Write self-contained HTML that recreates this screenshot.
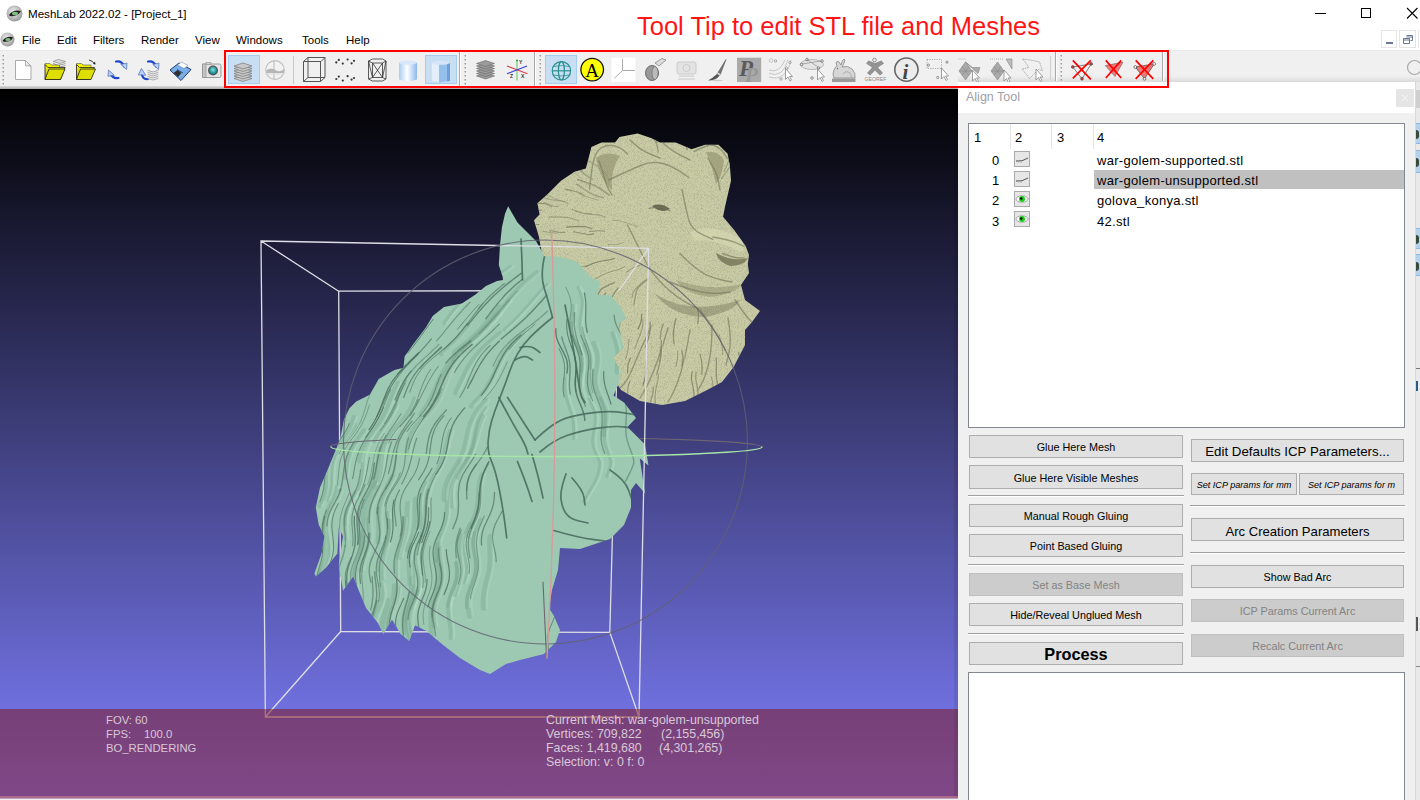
<!DOCTYPE html>
<html><head><meta charset="utf-8">
<style>
*{box-sizing:border-box;margin:0;padding:0}
html,body{width:1420px;height:800px;overflow:hidden;background:#fff;font-family:"Liberation Sans",sans-serif}
.abs{position:absolute}
#title{position:absolute;left:0;top:0;width:1420px;height:28px;background:#fff}
#menubar{position:absolute;left:0;top:28px;width:1420px;height:22px;background:#fff}
.menu{position:absolute;top:6px;font-size:11.5px;color:#000;white-space:nowrap}
#toolbar{position:absolute;left:0;top:50px;width:1420px;height:40px;background:#f0f0f0;border-top:1px solid #e8e8e8}
#view{position:absolute;left:0;top:89px;width:958px;height:711px;overflow:hidden}
#panel{position:absolute;left:958px;top:82px;width:457px;height:718px;background:#f0f0f0}
.btn{position:absolute;background:#e1e1e1;border:1px solid #adadad;font-size:10.8px;padding-top:1px;color:#000;text-align:center;white-space:nowrap;overflow:hidden}
.btn.dis{background:#cccccc;border-color:#bfbfbf;color:#838383}
.sep{position:absolute;height:2px;border-top:1px solid #a0a0a0;border-bottom:1px solid #fff}
.tb{position:absolute;top:0;left:0}
.cell{position:absolute;font-size:13px;letter-spacing:0.3px;color:#000;white-space:nowrap;line-height:15px}
.info{position:absolute;font-family:"Liberation Sans",sans-serif;font-size:12.3px;color:#d8c8d8;line-height:14px;white-space:pre}
</style></head><body>

<!-- TITLE BAR -->
<div id="title">
  <svg class="abs" style="left:6px;top:5px" width="17" height="17" viewBox="0 0 17 17">
    <defs><radialGradient id="eyeg" cx="0.45" cy="0.4" r="0.6"><stop offset="0" stop-color="#f4f4f4"/><stop offset="1" stop-color="#9a9a9a"/></radialGradient></defs>
    <circle cx="8.5" cy="8.5" r="8" fill="url(#eyeg)"/>
    <path d="M3 10 Q7 4 15 6 Q12 12 4 11Z" fill="#222"/>
    <ellipse cx="9" cy="8.5" rx="3" ry="1.8" fill="#7fc07f"/>
  </svg>
  <div class="abs" style="left:28px;top:6.5px;font-size:11.6px;color:#000;white-space:nowrap">MeshLab 2022.02 - [Project_1]</div>
  <div class="abs" style="z-index:5;left:637px;top:11px;font-size:25.5px;color:#ff1515;white-space:nowrap;line-height:30px">Tool Tip to edit STL file and Meshes</div>
  <!-- window controls -->
  <div class="abs" style="left:1315px;top:13px;width:11px;height:1px;background:#000"></div>
  <div class="abs" style="left:1361px;top:8px;width:10px;height:10px;border:1px solid #000"></div>
  <svg class="abs" style="left:1406px;top:7px" width="13" height="13"><path d="M1 1L11.5 11.5M11.5 1L1 11.5" stroke="#000" stroke-width="1.1"/></svg>
</div>

<!-- MENU BAR -->
<div id="menubar">
  <svg class="abs" style="left:0px;top:4px" width="15" height="15" viewBox="0 0 17 17">
    <circle cx="8.5" cy="8.5" r="8" fill="url(#eyeg)"/>
    <path d="M3 10 Q7 4 15 6 Q12 12 4 11Z" fill="#222"/>
    <ellipse cx="9" cy="8.5" rx="3" ry="1.8" fill="#7fc07f"/>
  </svg>
  <div class="menu" style="left:22px">File</div>
  <div class="menu" style="left:57px">Edit</div>
  <div class="menu" style="left:93px">Filters</div>
  <div class="menu" style="left:141px">Render</div>
  <div class="menu" style="left:195px">View</div>
  <div class="menu" style="left:236px">Windows</div>
  <div class="menu" style="left:302px">Tools</div>
  <div class="menu" style="left:346px">Help</div>
  <!-- MDI buttons -->
  <div class="abs" style="left:1381px;top:2px;width:16px;height:18px;border:1px solid #e6e6e6;background:#fff"><div class="abs" style="left:4px;top:11px;width:7px;height:2px;background:#6a7a90"></div></div>
  <div class="abs" style="left:1399px;top:2px;width:17px;height:18px;border:1px solid #e6e6e6;background:#fff">
    <svg class="abs" style="left:3px;top:4px" width="10" height="9"><path d="M3.5 0.5h6v5h-2M0.5 3.5h6v5h-6z M0.5 5h6 M3.5 2h6" fill="none" stroke="#6a7a90" stroke-width="1"/></svg>
  </div>
  <div class="abs" style="left:1418px;top:2px;width:2px;height:18px;border-left:1px solid #e6e6e6"></div>
</div>

<!-- TOOLBAR -->
<div id="toolbar">
<div class="abs" style="left:958px;top:25px;width:462px;height:7px;background:linear-gradient(#f0f0f0,#d6d6d6)"></div>
  <svg width="1420" height="40" viewBox="0 50 1420 40" style="position:absolute;left:0;top:-1px">
<defs>
  <linearGradient id="fold" x1="0" y1="0" x2="1" y2="1"><stop offset="0" stop-color="#ffffff"/><stop offset="1" stop-color="#cfcfcf"/></linearGradient>
  <linearGradient id="yel" x1="0" y1="0" x2="0" y2="1"><stop offset="0" stop-color="#ffff10"/><stop offset="1" stop-color="#a8a000"/></linearGradient>
  <linearGradient id="cyl" x1="0" y1="0" x2="1" y2="0"><stop offset="0" stop-color="#a9ccf2"/><stop offset="0.45" stop-color="#ffffff"/><stop offset="1" stop-color="#8cb8ec"/></linearGradient>
  <radialGradient id="lens" cx="0.5" cy="0.4" r="0.6"><stop offset="0" stop-color="#7fe0e0"/><stop offset="1" stop-color="#0a7a80"/></radialGradient>
  <linearGradient id="tbbot" x1="0" y1="0" x2="0" y2="1"><stop offset="0" stop-color="#f0f0f0"/><stop offset="1" stop-color="#d8d8d8"/></linearGradient>
</defs>
<!-- grips -->
<g fill="#9a9a9a">
  <rect x="2.5" y="55" width="1.5" height="1.5"/><rect x="2.5" y="59" width="1.5" height="1.5"/><rect x="2.5" y="63" width="1.5" height="1.5"/><rect x="2.5" y="67" width="1.5" height="1.5"/><rect x="2.5" y="71" width="1.5" height="1.5"/><rect x="2.5" y="75" width="1.5" height="1.5"/><rect x="2.5" y="79" width="1.5" height="1.5"/><rect x="2.5" y="83" width="1.5" height="1.5"/>
  <rect x="464.5" y="55" width="1.5" height="1.5"/><rect x="464.5" y="59" width="1.5" height="1.5"/><rect x="464.5" y="63" width="1.5" height="1.5"/><rect x="464.5" y="67" width="1.5" height="1.5"/><rect x="464.5" y="71" width="1.5" height="1.5"/><rect x="464.5" y="75" width="1.5" height="1.5"/><rect x="464.5" y="79" width="1.5" height="1.5"/><rect x="464.5" y="83" width="1.5" height="1.5"/>
  <rect x="539.5" y="55" width="1.5" height="1.5"/><rect x="539.5" y="59" width="1.5" height="1.5"/><rect x="539.5" y="63" width="1.5" height="1.5"/><rect x="539.5" y="67" width="1.5" height="1.5"/><rect x="539.5" y="71" width="1.5" height="1.5"/><rect x="539.5" y="75" width="1.5" height="1.5"/><rect x="539.5" y="79" width="1.5" height="1.5"/><rect x="539.5" y="83" width="1.5" height="1.5"/>
  <rect x="1060.5" y="55" width="1.5" height="1.5"/><rect x="1060.5" y="59" width="1.5" height="1.5"/><rect x="1060.5" y="63" width="1.5" height="1.5"/><rect x="1060.5" y="67" width="1.5" height="1.5"/><rect x="1060.5" y="71" width="1.5" height="1.5"/><rect x="1060.5" y="75" width="1.5" height="1.5"/><rect x="1060.5" y="79" width="1.5" height="1.5"/>
</g>
<!-- separators -->
<g stroke-width="1">
  <line x1="293.5" y1="56" x2="293.5" y2="84" stroke="#c8c8c8"/>
  <line x1="459.5" y1="52" x2="459.5" y2="87" stroke="#a8a8a8"/><line x1="460.5" y1="52" x2="460.5" y2="87" stroke="#fff"/>
  <line x1="534.5" y1="52" x2="534.5" y2="87" stroke="#a8a8a8"/><line x1="535.5" y1="52" x2="535.5" y2="87" stroke="#fff"/>
  <line x1="1050.5" y1="56" x2="1050.5" y2="80" stroke="#d0d0d0"/>
  <line x1="1055.5" y1="52" x2="1055.5" y2="81" stroke="#a8a8a8"/><line x1="1056.5" y1="52" x2="1056.5" y2="81" stroke="#fff"/>
  <line x1="1162.5" y1="52" x2="1162.5" y2="81" stroke="#a8a8a8"/><line x1="1163.5" y1="52" x2="1163.5" y2="81" stroke="#fff"/>
</g>
<!-- highlighted buttons -->
<g fill="#c7def3" stroke="#a6cdef">
  <rect x="228.5" y="55.5" width="31" height="28"/>
  <rect x="425.5" y="55.5" width="31" height="28"/>
  <rect x="545.5" y="55.5" width="31" height="28"/>
</g>
<!-- 1 new doc -->
<path d="M15.5 60.5h10l5.5 5.5v13.5h-15.5z" fill="#fff" stroke="#aaa"/>
<path d="M25.5 60.5l5.5 5.5h-5.5z" fill="url(#fold)" stroke="#999" stroke-width="0.7"/>
<!-- 2 open project -->
<g><path d="M53 61.5l5.5-2 7 2-5.5 2z" fill="#ddd" stroke="#888" stroke-width="0.7"/>
<path d="M53 63.5l5.5 2 7-2M53 65.5l5.5 2 7-2M53 67.5l5.5 2 7-2" fill="none" stroke="#888" stroke-width="0.8"/>
<path d="M45 63.5h5l1.5 1.5h8v4h-14z" fill="#f0f000" stroke="#555" stroke-width="0.6"/>
<path d="M45 79.5v-15l3 3h17l-4.5 12z" fill="url(#yel)" stroke="#222" stroke-width="0.8"/>
<path d="M45 79.5l4-10.5h16l-4.5 10.5z" fill="#dede00" stroke="#222" stroke-width="0.8"/></g>
<!-- 3 open -->
<g><path d="M76.5 63.5h5l1.5 1.5h8v4h-14z" fill="#f0f000" stroke="#555" stroke-width="0.6"/>
<path d="M76.5 79.5v-15l3 3h15l-4.5 12z" fill="url(#yel)" stroke="#222" stroke-width="0.8"/>
<path d="M76.5 79.5l4-10.5h15l-4.5 10.5z" fill="#dede00" stroke="#222" stroke-width="0.8"/>
<path d="M89 60q4 1 5.5 4" fill="none" stroke="#222" stroke-width="0.9"/><path d="M93 64l2.5 0.5 -0.5-3z" fill="#222"/></g>
<!-- 4 reload -->
<g fill="none" stroke-linecap="round">
<path d="M116 61.5q6-1 8 5" stroke="#1e46d0" stroke-width="2.2"/>
<path d="M121 64.5l5.5 5 0.5-6z" fill="#b8d0f8" stroke="#4a6ab0" stroke-width="0.7"/>
<path d="M118.5 78q-6 1-8.5-5" stroke="#1e46d0" stroke-width="2.2"/>
<path d="M114 75l-5.5-5-0.5 6z" fill="#b8d0f8" stroke="#4a6ab0" stroke-width="0.7"/>
</g>
<!-- 5 reload all -->
<g fill="none" stroke-linecap="round">
<path d="M148 61.5q6-1 8 5" stroke="#1e46d0" stroke-width="2.2"/>
<path d="M153 64.5l5.5 5 0.5-6z" fill="#b8d0f8" stroke="#4a6ab0" stroke-width="0.7"/>
<path d="M148 79q-6 1-6.5-7" stroke="#1e46d0" stroke-width="2.2"/>
<path d="M145.5 75l-4-6.5-3 6z" fill="#b8d0f8" stroke="#4a6ab0" stroke-width="0.7"/>
<path d="M148 70.5l5 1.5 5-1.5M148 72.5l5 1.5 5-1.5M148 74.5l5 1.5 5-1.5M148 76.5l5 1.5 5-1.5M148 78.5l5 1.5 5-1.5" stroke="#aaa" stroke-width="1"/>
</g>
<!-- 6 save floppy -->
<g><path d="M170 70l9-7 12 6.5-10 11z" fill="#7aaee8" stroke="#1d3c70" stroke-width="1"/>
<path d="M177.5 65l4-3 6.5 3.5-4 3z" fill="#fff" stroke="#5a7aa0" stroke-width="0.5"/>
<path d="M173.5 73l4-3 4 3 -3.5 4z" fill="#303030"/>
<path d="M177 69.5l6 3.5" stroke="#1d3c70" stroke-width="0.8"/></g>
<!-- 7 camera -->
<g><rect x="202.5" y="64" width="18.5" height="13.5" rx="1.5" fill="#e4e4e4" stroke="#888" stroke-width="0.8"/>
<rect x="202.5" y="64" width="3.5" height="13.5" fill="#c4c4c4" stroke="#888" stroke-width="0.6"/>
<rect x="206" y="62.5" width="5" height="2" fill="#ccc" stroke="#888" stroke-width="0.5"/>
<circle cx="213" cy="70.5" r="5" fill="#555"/><circle cx="213" cy="70.5" r="3.8" fill="url(#lens)"/></g>
<!-- 8 layers (highlighted) -->
<g fill="#c8c8c8" stroke="#7a7a7a" stroke-width="0.7">
<path d="M234 78.5l9-3 9 3-9 3z"/><path d="M234 76l9-3 9 3-9 3z"/><path d="M234 73.5l9-3 9 3-9 3z"/><path d="M234 71l9-3 9 3-9 3z"/><path d="M234 68.5l9-3 9 3-9 3z"/><path d="M234 66l9-3 9 3-9 3z"/>
</g>
<!-- 9 globe faded -->
<g opacity="0.55"><circle cx="275" cy="70" r="9.3" fill="#f4f4f4" stroke="#999" stroke-width="1.2"/>
<path d="M266.5 70q5-3 9 0t8.5-1v4h-17.5z" fill="#888"/><line x1="274" y1="61" x2="274" y2="79" stroke="#888"/><line x1="266" y1="74" x2="284" y2="74" stroke="#ccc"/></g>
<!-- 10 cube -->
<g fill="none" stroke="#555" stroke-width="1"><path d="M303.5 61.5l4.5-4h17l-4 4z M303.5 61.5v20h17v-20 M320.5 81.5l4.5-4v-20 M308 57.5v20h17 M303.5 81.5l4.5-4"/></g>
<!-- 11 dots -->
<g fill="#333">
<circle cx="336.3" cy="62.4" r="1.1"/><circle cx="338.8" cy="59.9" r="1.1"/><circle cx="342.8" cy="63.6" r="1.1"/><circle cx="347.6" cy="59.5" r="1.1"/><circle cx="351.6" cy="63.3" r="1.1"/><circle cx="354" cy="60.8" r="1.1"/>
<circle cx="336.3" cy="79" r="1.1"/><circle cx="338.8" cy="76.6" r="1.1"/><circle cx="342.8" cy="80.6" r="1.1"/><circle cx="347.6" cy="76.2" r="1.1"/><circle cx="351.6" cy="79.6" r="1.1"/><circle cx="354" cy="78" r="1.1"/>
</g>
<!-- 12 wire cylinder -->
<g fill="none" stroke="#333" stroke-width="0.8">
<path d="M368.5 61l4-2h10l3.5 2v18l-3.5 2h-10l-4-2z"/><path d="M368.5 61l4 2h10l3.5-2 M368.5 79l4-1.5h10l3.5 1.5"/>
<path d="M372.5 63l10 14.5M382.5 63l-10 14.5M372.5 63v14.5M382.5 63v14.5M368.5 61l4 16.5M386 61l-3.5 16.5"/>
</g>
<!-- 13 flat cylinder -->
<g><path d="M399 62.5q9-3.5 18 0v17q-9 3-18 0z" fill="url(#cyl)"/><ellipse cx="408" cy="62.5" rx="9" ry="2.2" fill="#d8e8fa"/></g>
<!-- 14 smooth cylinder (highlighted) -->
<g><path d="M432 63q9-3 18 0v18q-9 2-18 0z" fill="#e4eefa"/><path d="M439 64l11-1v18l-11 1.5z" fill="#94c0ee"/><path d="M447 63l3 0v18l-3 0.3z" fill="#6f9fd8"/><ellipse cx="441" cy="62.8" rx="9" ry="2" fill="#d4e6f8"/></g>
<!-- 15 gray layers -->
<g fill="#9a9a9a" stroke="#6a6a6a" stroke-width="0.6">
<path d="M476.5 76l9-3 9 3-9 3z"/><path d="M476.5 73.5l9-3 9 3-9 3z"/><path d="M476.5 71l9-3 9 3-9 3z"/><path d="M476.5 68.5l9-3 9 3-9 3z"/><path d="M476.5 66l9-3 9 3-9 3z"/><path d="M476.5 63.5l9-3 9 3-9 3z"/>
</g>
<!-- 16 axes -->
<g stroke-width="1.1"><line x1="517" y1="60" x2="517" y2="80.5" stroke="#8fd68f" stroke-width="1.5"/>
<line x1="507" y1="66" x2="527.5" y2="73.8" stroke="#e04040"/><line x1="507" y1="73.8" x2="527" y2="66" stroke="#4040e0"/>
<circle cx="517" cy="60.5" r="1" fill="#20b020" stroke="none"/>
<text x="519" y="64" font-family="Liberation Sans" font-size="5" font-weight="bold" fill="#333" stroke="none">Y</text>
<text x="510" y="77.5" font-family="Liberation Sans" font-size="5" font-weight="bold" fill="#333" stroke="none">Z</text>
<text x="521" y="77.5" font-family="Liberation Sans" font-size="5" font-weight="bold" fill="#333" stroke="none">X</text></g>
<!-- 17 globe teal -->
<g fill="none" stroke="#2a9090" stroke-width="1.2"><circle cx="561.4" cy="70.8" r="9.2"/><ellipse cx="561.4" cy="70.8" rx="3" ry="9.2"/><line x1="552.2" y1="70.8" x2="570.6" y2="70.8"/><path d="M553.5 66.5q8-2 16 0M553.5 75q8 2 16 0" stroke-width="0.8"/></g>
<!-- 18 A -->
<g><circle cx="592.2" cy="69.6" r="11.3" fill="#ffff00" stroke="#111" stroke-width="1.3"/>
<text x="592.2" y="77" text-anchor="middle" font-family="Liberation Serif" font-size="19" fill="#000">A</text></g>
<!-- 19 axis white -->
<g><rect x="611.5" y="57.7" width="24" height="24.3" fill="#fff"/><path d="M622.5 59v11.5h12.5M622.5 70.5l-8.3 7.9" fill="none" stroke="#aaa" stroke-width="1"/></g>
<!-- 20 tape -->
<g><path d="M655 63l7-4.5 4 1.5-7 6z" fill="#ddd" stroke="#777" stroke-width="0.7"/>
<ellipse cx="652" cy="73" rx="6.5" ry="7.5" fill="#999" stroke="#555" stroke-width="0.8"/><ellipse cx="655" cy="73" rx="3" ry="6.5" fill="#bbb" stroke="#666" stroke-width="0.6"/></g>
<!-- 21 camera faded -->
<g opacity="0.35"><rect x="677" y="62" width="19" height="12" rx="2" fill="#ccc" stroke="#888"/><circle cx="686.5" cy="68" r="3.5" fill="none" stroke="#888"/><rect x="679" y="75.5" width="15" height="1.2" fill="#999"/><rect x="678" y="78.5" width="17" height="1.2" fill="#999"/></g>
<!-- 22 brush -->
<g><path d="M726 59.5l-8 13 2.5 1.5z" fill="#777" stroke="#555" stroke-width="0.6"/><path d="M718 72.5l2.5 1.5l-1 1.5l-2.5-1.5z" fill="#eee" stroke="#777" stroke-width="0.5"/><path d="M717 74l2.5 1.5q-3 5-11.5 5q4-2 9-6.5z" fill="#555"/><ellipse cx="717" cy="80.5" rx="6" ry="0.8" fill="#ccc"/></g>
<!-- 23 PP -->
<g><rect x="737" y="57.7" width="24.2" height="24.3" fill="#aaa"/>
<text x="739" y="76" font-family="Liberation Serif" font-size="23" font-weight="bold" font-style="italic" fill="#5a5a5a">P</text>
<text x="745" y="82" font-family="Liberation Serif" font-size="21" font-weight="bold" font-style="italic" fill="#979797">P</text></g>
<!-- 24 circles select faded -->
<g fill="none" stroke="#bbb" stroke-width="0.8"><path d="M769 70q10 4 16-10M769 73.5q14 5 19-14M769 77q17 5 22-17"/><circle cx="771" cy="60.5" r="1.8"/><circle cx="775.5" cy="61" r="1.2" stroke="#999"/><circle cx="790" cy="62.5" r="1.2" stroke="#999"/><circle cx="781" cy="79" r="1.2" stroke="#999"/><circle cx="786.5" cy="68.2" r="1.2" stroke="#999"/>
<path d="M785.5 68.5v11l2.5-2.5 2 4 1.5-1-2-3.5h3z" fill="#fff" stroke="#888"/></g>
<!-- 25 ellipse select -->
<g fill="none" stroke="#999" stroke-width="0.8"><ellipse cx="812" cy="64.5" rx="11.5" ry="5" fill="#e4e4e4" stroke="#aaa"/><line x1="802" y1="64" x2="821" y2="61"/><line x1="807" y1="59.5" x2="818" y2="67"/>
<circle cx="801.5" cy="64.5" r="1.3" stroke="#777"/><circle cx="807" cy="59.5" r="1.3" stroke="#777"/><circle cx="822" cy="61" r="1.3" stroke="#777"/><circle cx="818.5" cy="68" r="1.3" stroke="#777"/><circle cx="812" cy="78" r="1.3" stroke="#777"/>
<path d="M817.5 69v11l2.5-2.5 2 4 1.5-1-2-3.5h3z" fill="#fff" stroke="#888"/></g>
<!-- 26 bunny -->
<g><rect x="832" y="78.5" width="23.5" height="3.5" fill="#999"/>
<path d="M834 78q-2-4 0-8q1-3 3-4l-1-3q1-3 3-1l2 3q1-5 3-6q2 0 0 4l-2 4q6-2 10 2q4 4 3 9z" fill="#d6d6d6" stroke="#888" stroke-width="0.8"/>
<path d="M843 74q3-4 7-1q2 2 1 5" fill="none" stroke="#999" stroke-width="0.7"/><circle cx="837.5" cy="68.5" r="0.7" fill="#666"/></g>
<!-- 27 georef -->
<g><path d="M875 63l-6.5 -2.5 -2.5 3 6 4-5 5.5 3 2.5 5-5 5 5 3-2.5-5-5.5 6-4-2.5-3z" fill="#939393"/><circle cx="874.5" cy="60" r="1.8" fill="none" stroke="#939393" stroke-width="1"/>
<text x="875.5" y="81.2" text-anchor="middle" font-family="Liberation Sans" font-size="5.2" fill="#8a8a8a">GEOREF</text></g>
<!-- 28 info -->
<g><circle cx="906.4" cy="69.6" r="11.6" fill="#ececec" stroke="#666" stroke-width="1.6"/>
<text x="905.5" y="78.5" text-anchor="middle" font-family="Liberation Serif" font-size="21" font-weight="bold" font-style="italic" fill="#444">i</text></g>
<!-- 29 select rect -->
<g fill="none" stroke="#999" stroke-width="0.8"><path d="M927 59.5h14.5v9h-14.5z" stroke-dasharray="1.2 1.2"/><circle cx="947" cy="62.2" r="1.1" stroke="#777"/><circle cx="928.4" cy="65.2" r="1.1" stroke="#777"/><circle cx="937.7" cy="77.5" r="1.1" stroke="#777"/>
<path d="M941.5 68v11l2.5-2.5 2 4 1.5-1-2-3.5h3z" fill="#fff" stroke="#888"/></g>
<!-- 30 triangles 1 -->
<g stroke="#888" stroke-width="0.6"><path d="M959 71l6.5-9 6.5 9-6.5 9z" fill="#aaa"/><path d="M965.5 62l7 5.5h7.5l-2 6z" fill="#aaa"/><path d="M959 71h13M962 66.5l7 9M969 66.5l-7 9" fill="none"/><path d="M958.5 59h8" stroke-dasharray="1 1" fill="none"/>
<path d="M972.5 70v11l2.5-2.5 2 4 1.5-1-2-3.5h3z" fill="#fff" stroke="#888" stroke-width="0.8"/></g>
<!-- 31 triangles 2 -->
<g stroke="#888" stroke-width="0.6"><path d="M991 71l6.5-9 6.5 9-6.5 9z" fill="#aaa"/><path d="M1006 59h6v10z" fill="#bbb"/><path d="M991 71h13M994 66.5l7 9M1001 66.5l-7 9" fill="none"/><path d="M990 59h14" stroke-dasharray="1 1" fill="none"/>
<path d="M1004 70v11l2.5-2.5 2 4 1.5-1-2-3.5h3z" fill="#fff" stroke="#888" stroke-width="0.8"/></g>
<!-- 32 polygon outline -->
<g><path d="M1022.5 59l11 1.5 6 1.5 3 8.5-4 -1-9 9-7.5-9.5 7-1.5-5-7z" fill="none" stroke="#999" stroke-width="0.8" stroke-dasharray="1.3 0.7"/>
<path d="M1036 69v11l2.5-2.5 2 4 1.5-1-2-3.5h3z" fill="#fff" stroke="#888" stroke-width="0.8"/></g>
<!-- 33 X1 -->
<g><path d="M1072.8 67l18.4-3.1-9.2 14.9z" fill="none" stroke="#333" stroke-width="0.6"/>
<circle cx="1072.8" cy="67" r="1.4" fill="#d04040" stroke="#333" stroke-width="0.5"/><circle cx="1091.2" cy="63.9" r="1.4" fill="#d04040" stroke="#333" stroke-width="0.5"/><circle cx="1082" cy="78.8" r="1.4" fill="#d04040" stroke="#333" stroke-width="0.5"/>
<path d="M1072.8 60.4l18 18.9M1072.8 78.4l18-18" stroke="#f00" stroke-width="1.7"/></g>
<!-- 34 X2 -->
<g><path d="M1105.3 65.6l17.7-3.5-8 14.5z" fill="#f07878" stroke="#555" stroke-width="0.5"/>
<path d="M1105.8 60.4l15.4 17.6M1105.8 78l15.4-17.6" stroke="#f00" stroke-width="1.7"/></g>
<!-- 35 X3 -->
<g><path d="M1135.3 67l18.9-3.1-9.7 14.9z" fill="#f07878" stroke="#333" stroke-width="0.6"/>
<circle cx="1135.3" cy="67" r="1.4" fill="#fff" stroke="#333" stroke-width="0.6"/><circle cx="1154.2" cy="63.9" r="1.4" fill="#fff" stroke="#333" stroke-width="0.6"/><circle cx="1144.5" cy="78.8" r="1.4" fill="#fff" stroke="#333" stroke-width="0.6"/>
<path d="M1135.7 60.4l17.6 18.4M1135.7 78.8l17.6-18.4" stroke="#f00" stroke-width="1.7"/></g>
<!-- far right circle -->
<circle cx="1414.5" cy="67.5" r="7" fill="none" stroke="#a8a8a8" stroke-width="1.2"/>
</svg>

</div>
<div class="abs" style="left:0;top:86px;width:958px;height:4px;background:linear-gradient(#dcdcdc,#9a9a9a)"></div>

<!-- VIEWPORT -->
<div id="view">
  <svg width="958" height="711" viewBox="0 89 958 711" style="position:absolute;left:0;top:0">
    <defs>
      <linearGradient id="bg" x1="0" y1="89" x2="0" y2="800" gradientUnits="userSpaceOnUse">
        <stop offset="0" stop-color="#000000"/><stop offset="1" stop-color="#8080ff"/>
      </linearGradient>
    </defs>
    <rect x="0" y="89" width="958" height="711" fill="url(#bg)"/>
    <g id="scene">
<defs><clipPath id="lclip"><path d="M534.0 220.2 L539.6 214.5 L537.4 203.3 L547.5 194.3 L549.8 192.0 L561.0 180.8 L574.5 171.8 L585.8 168.4 L588.0 160.5 L591.4 147.0 L601.5 142.5 L615.0 142.5 L619.5 136.9 L637.6 133.5 L651.0 138.0 L660.0 142.5 L675.8 142.5 L691.6 149.3 L705.0 144.8 L718.6 144.8 L727.6 153.8 L729.8 165.0 L731.0 180.8 L725.3 205.5 L723.0 216.8 L734.3 230.3 L745.6 246.0 L749.0 255.0 L747.8 264.0 L749.0 273.0 L741.0 285.0 L745.0 300.0 L760.0 311.0 L752.0 322.0 L745.0 330.0 L745.0 345.0 L733.6 367.0 L722.0 382.0 L707.0 390.0 L685.0 401.0 L662.0 405.0 L640.0 401.0 L621.0 390.0 L613.7 378.6 L590.0 370.0 L560.0 320.0 L545.0 270.0 L538.8 236.2Z"/></clipPath><clipPath id="hclip"><path d="M508.1 206.2 L517.5 222.5 L527.5 232.5 L536.2 241.2 L542.5 252.5 L543.8 256.2 L555.0 256.2 L567.5 258.8 L575.0 261.2 L580.0 265.0 L589.7 276.6 L600.2 281.8 L597.5 295.0 L610.7 295.0 L621.0 308.0 L626.4 318.5 L618.5 323.8 L621.0 336.9 L623.8 347.4 L613.3 357.9 L621.0 371.0 L618.5 384.0 L613.5 395.5 L624.0 402.5 L636.0 418.0 L627.5 427.0 L645.0 444.5 L648.5 465.5 L639.8 458.5 L645.0 493.5 L636.0 483.0 L631.0 490.0 L631.0 507.5 L624.0 525.0 L610.0 539.0 L580.0 549.0 L560.0 548.0 L558.0 570.0 L552.0 590.0 L549.0 608.0 L554.0 616.0 L560.0 630.0 L556.0 642.0 L544.0 654.0 L520.0 660.0 L506.0 664.0 L490.0 674.0 L480.0 670.0 L460.0 658.0 L443.7 645.4 L426.4 631.0 L415.0 625.3 L409.2 641.0 L400.6 634.0 L392.0 619.5 L383.3 634.0 L377.6 622.4 L366.0 608.0 L353.2 576.4 L343.0 590.8 L338.8 565.0 L343.0 536.2 L338.8 527.6 L337.4 553.4 L325.9 567.8 L315.8 576.4 L314.4 573.6 L321.6 553.4 L324.4 536.2 L318.7 524.7 L315.8 507.5 L320.0 487.4 L328.7 467.2 L335.0 452.0 L340.5 437.5 L343.9 419.5 L349.5 408.2 L356.2 401.5 L369.7 394.7 L378.7 379.0 L394.5 370.0 L403.5 367.7 L404.6 356.5 L412.5 345.2 L426.0 327.2 L432.7 316.0 L444.0 307.0 L462.0 303.6 L475.5 294.6 L486.0 286.0 L497.0 281.0 L503.0 280.0 L502.5 276.2 L498.8 265.0 L500.0 245.0 L501.9 227.5 L505.0 213.8Z"/></clipPath>
<filter id="speck" x="0" y="0" width="1" height="1">
<feTurbulence type="fractalNoise" baseFrequency="1.3" numOctaves="1" seed="3" result="n"/>
<feColorMatrix in="n" type="matrix" values="0 0 0 0 0.33  0 0 0 0 0.35  0 0 0 0 0.26  -4 0 0 0 2.1" result="c"/>
<feComposite in="c" in2="SourceGraphic" operator="in"/>
</filter></defs>
<g stroke="#dedee6" stroke-width="1.3" fill="none"><path d="M338.7 291.2L619 290.5M338.7 291.2L340.7 631.5L609.8 632.4L619 290.5"/></g>
<path d="M534.0 220.2 L539.6 214.5 L537.4 203.3 L547.5 194.3 L549.8 192.0 L561.0 180.8 L574.5 171.8 L585.8 168.4 L588.0 160.5 L591.4 147.0 L601.5 142.5 L615.0 142.5 L619.5 136.9 L637.6 133.5 L651.0 138.0 L660.0 142.5 L675.8 142.5 L691.6 149.3 L705.0 144.8 L718.6 144.8 L727.6 153.8 L729.8 165.0 L731.0 180.8 L725.3 205.5 L723.0 216.8 L734.3 230.3 L745.6 246.0 L749.0 255.0 L747.8 264.0 L749.0 273.0 L741.0 285.0 L745.0 300.0 L760.0 311.0 L752.0 322.0 L745.0 330.0 L745.0 345.0 L733.6 367.0 L722.0 382.0 L707.0 390.0 L685.0 401.0 L662.0 405.0 L640.0 401.0 L621.0 390.0 L613.7 378.6 L590.0 370.0 L560.0 320.0 L545.0 270.0 L538.8 236.2Z" fill="#c8cba3"/>
<g clip-path="url(#lclip)"><path d="M534.0 220.2 L539.6 214.5 L537.4 203.3 L547.5 194.3 L549.8 192.0 L561.0 180.8 L574.5 171.8 L585.8 168.4 L588.0 160.5 L591.4 147.0 L601.5 142.5 L615.0 142.5 L619.5 136.9 L637.6 133.5 L651.0 138.0 L660.0 142.5 L675.8 142.5 L691.6 149.3 L705.0 144.8 L718.6 144.8 L727.6 153.8 L729.8 165.0 L731.0 180.8 L725.3 205.5 L723.0 216.8 L734.3 230.3 L745.6 246.0 L749.0 255.0 L747.8 264.0 L749.0 273.0 L741.0 285.0 L745.0 300.0 L760.0 311.0 L752.0 322.0 L745.0 330.0 L745.0 345.0 L733.6 367.0 L722.0 382.0 L707.0 390.0 L685.0 401.0 L662.0 405.0 L640.0 401.0 L621.0 390.0 L613.7 378.6 L590.0 370.0 L560.0 320.0 L545.0 270.0 L538.8 236.2Z" fill="#000" filter="url(#speck)" opacity="0.5"/>
<path d="M716 253 Q732 262 748 258 Q744 266 730 266 Q718 262 716 253Z" fill="#6e6c50" opacity="0.75"/><path d="M690 232 Q712 222 740 238 Q748 250 740 252 Q720 240 694 240Z" fill="#d8dcb6" opacity="0.55"/><path d="M676 280 Q710 292 742 284 Q736 294 710 297 Q685 294 676 280Z" fill="#7a7858" opacity="0.35"/><path d="M652 206 Q661 202 670 209 Q661 214 652 206Z" fill="#55533e" opacity="0.8"/><path d="M596 158 Q606 150 620 156 Q610 170 612 190 Q600 180 596 158Z" fill="#8a8866" opacity="0.55"/><path d="M706 152 Q718 150 724 160 Q722 178 716 184 Q712 166 706 152Z" fill="#8a8866" opacity="0.55"/><path d="M655 294 Q690 316 740 300 Q735 311 705 317 Q672 316 655 294Z" fill="#6a6850" opacity="0.38"/><path d="M589.5 189.4 Q591.9 165.0 594.5 157.5 Q597.0 150.0 602.8 147.2 Q608.5 144.3 614.2 145.7 Q620.0 147.0 623.8 150.4 L627.5 153.8" fill="none" stroke="#72755a" stroke-width="1.4" stroke-linecap="round" opacity="0.6"/><path d="M599.0 161.0 Q603.0 172.0 604.5 178.3 Q606.0 184.6 609.0 189.8 L612.0 195.0" fill="none" stroke="#72755a" stroke-width="1.4" stroke-linecap="round" opacity="0.6"/><path d="M694.0 151.4 Q705.0 146.0 709.0 145.2 Q713.0 144.3 717.5 147.2 Q722.0 150.0 724.6 154.2 L727.3 158.5" fill="none" stroke="#72755a" stroke-width="1.4" stroke-linecap="round" opacity="0.6"/><path d="M708.0 158.5 Q714.0 168.0 715.9 172.8 Q717.8 177.5 718.9 183.8 L720.0 190.0" fill="none" stroke="#72755a" stroke-width="1.4" stroke-linecap="round" opacity="0.6"/><path d="M608.5 180.0 Q630.0 170.0 640.5 165.5 Q651.0 161.0 660.5 163.0 Q670.0 165.0 679.5 171.2 L689.0 177.5" fill="none" stroke="#72755a" stroke-width="1.4" stroke-linecap="round" opacity="0.6"/><path d="M649.0 208.4 Q660.0 206.0 665.0 208.4 L670.0 210.8" fill="none" stroke="#72755a" stroke-width="1.4" stroke-linecap="round" opacity="0.6"/><path d="M682.0 189.4 Q686.0 210.0 688.8 219.9 Q691.6 229.8 702.3 234.6 L713.0 239.3" fill="none" stroke="#72755a" stroke-width="1.4" stroke-linecap="round" opacity="0.6"/><path d="M713.0 237.0 Q730.0 240.0 737.0 243.2 L744.0 246.4" fill="none" stroke="#72755a" stroke-width="1.4" stroke-linecap="round" opacity="0.6"/><path d="M722.5 253.5 Q735.0 258.0 739.5 258.0 L744.0 258.0" fill="none" stroke="#72755a" stroke-width="1.4" stroke-linecap="round" opacity="0.6"/><path d="M679.8 253.5 Q698.8 272.5 709.4 276.2 Q720.0 280.0 726.0 281.0 L732.0 282.0" fill="none" stroke="#72755a" stroke-width="1.4" stroke-linecap="round" opacity="0.6"/><path d="M670.0 282.0 Q690.0 290.0 701.5 292.0 Q713.0 294.0 721.5 293.0 L730.0 292.0" fill="none" stroke="#72755a" stroke-width="1.4" stroke-linecap="round" opacity="0.6"/><path d="M627.5 225.0 Q640.0 250.0 645.5 261.2 Q651.0 272.5 663.0 284.4 Q675.0 296.3 687.5 303.1 L700.0 310.0" fill="none" stroke="#72755a" stroke-width="1.4" stroke-linecap="round" opacity="0.6"/><path d="M700.0 310.0 Q715.0 330.0 720.0 340.0 L725.0 350.0" fill="none" stroke="#72755a" stroke-width="1.4" stroke-linecap="round" opacity="0.6"/><path d="M652.0 325.0 Q640.0 350.0 634.0 365.0 Q628.0 380.0 623.0 385.0 L618.0 390.0" fill="none" stroke="#72755a" stroke-width="1.4" stroke-linecap="round" opacity="0.6"/><path d="M668.0 328.0 Q660.0 355.0 654.0 370.0 Q648.0 385.0 644.0 391.5 L640.0 398.0" fill="none" stroke="#72755a" stroke-width="1.4" stroke-linecap="round" opacity="0.6"/><path d="M690.0 330.0 Q685.0 360.0 680.0 375.0 Q675.0 390.0 671.5 396.0 L668.0 402.0" fill="none" stroke="#72755a" stroke-width="1.4" stroke-linecap="round" opacity="0.6"/><path d="M712.0 325.0 Q712.0 350.0 708.5 364.0 Q705.0 378.0 701.5 384.0 L698.0 390.0" fill="none" stroke="#72755a" stroke-width="1.4" stroke-linecap="round" opacity="0.6"/><path d="M728.0 318.0 Q732.0 340.0 729.0 352.5 L726.0 365.0" fill="none" stroke="#72755a" stroke-width="1.4" stroke-linecap="round" opacity="0.6"/><path d="M735.0 300.0 Q745.0 315.0 748.5 318.5 L752.0 322.0" fill="none" stroke="#72755a" stroke-width="1.4" stroke-linecap="round" opacity="0.6"/><path d="M660.0 140.0 Q670.0 150.0 680.0 155.0 L690.0 160.0" fill="none" stroke="#72755a" stroke-width="1.4" stroke-linecap="round" opacity="0.6"/><path d="M630.0 140.0 Q640.0 150.0 650.0 154.0 L660.0 158.0" fill="none" stroke="#72755a" stroke-width="1.4" stroke-linecap="round" opacity="0.6"/><path d="M607.9 175.7 Q604.7 171.6 602.8 170.0 Q600.9 168.4 598.8 167.0 Q596.7 165.6 594.5 164.4 Q592.3 163.1 590.1 161.9 Q587.8 160.8 585.6 159.5 L583.4 158.3" fill="none" stroke="#767a5e" stroke-width="1.3" stroke-linecap="round" opacity="0.61"/><path d="M609.1 176.5 Q605.9 172.4 604.0 170.8 Q602.1 169.2 600.0 167.8 Q597.9 166.4 595.7 165.2 Q593.5 163.9 591.3 162.7 Q589.0 161.6 586.8 160.3 L584.6 159.1" fill="none" stroke="#d8dcb6" stroke-width="0.9" stroke-linecap="round" opacity="0.4"/><path d="M548.0 272.0 Q543.3 273.5 540.9 274.4 Q538.6 275.4 536.2 276.2 L533.8 277.0" fill="none" stroke="#767a5e" stroke-width="0.9" stroke-linecap="round" opacity="0.53"/><path d="M549.2 272.8 Q544.5 274.3 542.1 275.2 Q539.8 276.2 537.4 277.0 L535.0 277.8" fill="none" stroke="#d8dcb6" stroke-width="0.9" stroke-linecap="round" opacity="0.4"/><path d="M630.5 358.3 Q628.2 362.9 628.0 365.4 Q627.8 367.9 627.7 370.4 L627.6 373.0" fill="none" stroke="#767a5e" stroke-width="1.3" stroke-linecap="round" opacity="0.78"/><path d="M631.7 359.1 Q629.4 363.7 629.2 366.2 Q629.0 368.7 628.9 371.2 L628.8 373.8" fill="none" stroke="#d8dcb6" stroke-width="0.9" stroke-linecap="round" opacity="0.4"/><path d="M604.4 355.4 Q604.3 360.5 603.7 363.0 Q603.1 365.4 602.2 367.7 Q601.4 370.1 600.4 372.4 L599.3 374.7" fill="none" stroke="#767a5e" stroke-width="1.3" stroke-linecap="round" opacity="0.61"/><path d="M605.6 356.2 Q605.5 361.3 604.9 363.8 Q604.3 366.2 603.4 368.5 Q602.6 370.9 601.6 373.2 L600.5 375.5" fill="none" stroke="#d8dcb6" stroke-width="0.9" stroke-linecap="round" opacity="0.4"/><path d="M658.2 152.0 Q658.0 146.8 656.9 144.5 Q655.8 142.2 654.6 140.0 L653.4 137.8" fill="none" stroke="#767a5e" stroke-width="1.4" stroke-linecap="round" opacity="0.63"/><path d="M659.4 152.8 Q659.2 147.6 658.1 145.3 Q657.0 143.0 655.8 140.8 L654.6 138.6" fill="none" stroke="#d8dcb6" stroke-width="0.9" stroke-linecap="round" opacity="0.4"/><path d="M605.7 293.1 Q602.7 297.2 602.0 299.7 Q601.4 302.1 600.7 304.6 Q600.1 307.0 599.4 309.5 Q598.7 311.9 597.7 314.2 L596.8 316.5" fill="none" stroke="#767a5e" stroke-width="1.5" stroke-linecap="round" opacity="0.71"/><path d="M606.9 293.9 Q603.9 298.0 603.2 300.5 Q602.6 302.9 601.9 305.4 Q601.3 307.8 600.6 310.3 Q599.9 312.7 598.9 315.0 L598.0 317.3" fill="none" stroke="#d8dcb6" stroke-width="0.9" stroke-linecap="round" opacity="0.4"/><path d="M589.9 290.1 Q587.8 294.6 586.3 296.7 Q584.8 298.7 583.3 300.8 Q581.9 302.9 580.7 305.1 Q579.5 307.3 578.5 309.6 L577.6 311.9" fill="none" stroke="#767a5e" stroke-width="1.4" stroke-linecap="round" opacity="0.59"/><path d="M591.1 290.9 Q589.0 295.4 587.5 297.5 Q586.0 299.5 584.5 301.6 Q583.1 303.7 581.9 305.9 Q580.7 308.1 579.7 310.4 L578.8 312.7" fill="none" stroke="#d8dcb6" stroke-width="0.9" stroke-linecap="round" opacity="0.4"/><path d="M629.1 339.4 Q628.6 344.5 628.3 347.0 Q628.1 349.5 627.6 351.9 Q627.0 354.4 626.3 356.7 L625.6 359.1" fill="none" stroke="#767a5e" stroke-width="0.9" stroke-linecap="round" opacity="0.70"/><path d="M630.3 340.2 Q629.8 345.3 629.5 347.8 Q629.3 350.3 628.8 352.7 Q628.2 355.2 627.5 357.5 L626.8 359.9" fill="none" stroke="#d8dcb6" stroke-width="0.9" stroke-linecap="round" opacity="0.4"/><path d="M641.7 314.3 Q641.8 319.5 641.0 321.9 Q640.2 324.2 639.2 326.6 L638.2 328.9" fill="none" stroke="#767a5e" stroke-width="1.4" stroke-linecap="round" opacity="0.80"/><path d="M642.9 315.1 Q643.0 320.3 642.2 322.7 Q641.4 325.0 640.4 327.4 L639.4 329.7" fill="none" stroke="#d8dcb6" stroke-width="0.9" stroke-linecap="round" opacity="0.4"/><path d="M621.8 315.5 Q620.7 320.4 620.3 322.9 Q619.9 325.4 619.2 327.8 L618.6 330.3" fill="none" stroke="#767a5e" stroke-width="1.0" stroke-linecap="round" opacity="0.54"/><path d="M623.0 316.3 Q621.9 321.2 621.5 323.7 Q621.1 326.2 620.4 328.6 L619.8 331.1" fill="none" stroke="#d8dcb6" stroke-width="0.9" stroke-linecap="round" opacity="0.4"/><path d="M564.1 201.9 Q559.2 200.8 556.9 199.6 Q554.7 198.5 552.4 197.5 Q550.1 196.5 547.7 195.6 Q545.3 194.8 542.9 194.2 L540.4 193.7" fill="none" stroke="#767a5e" stroke-width="1.0" stroke-linecap="round" opacity="0.63"/><path d="M565.3 202.7 Q560.4 201.6 558.1 200.4 Q555.9 199.3 553.6 198.3 Q551.3 197.3 548.9 196.4 Q546.5 195.6 544.1 195.0 L541.6 194.5" fill="none" stroke="#d8dcb6" stroke-width="0.9" stroke-linecap="round" opacity="0.4"/><path d="M658.6 373.5 Q658.5 378.5 657.8 381.0 Q657.2 383.4 656.6 385.9 Q656.0 388.3 655.6 390.8 Q655.2 393.3 655.1 395.8 Q655.0 398.3 655.2 400.8 Q655.3 403.3 655.5 405.9 L655.7 408.4" fill="none" stroke="#767a5e" stroke-width="1.1" stroke-linecap="round" opacity="0.62"/><path d="M659.8 374.3 Q659.7 379.3 659.0 381.8 Q658.4 384.2 657.8 386.7 Q657.2 389.1 656.8 391.6 Q656.4 394.1 656.3 396.6 Q656.2 399.1 656.4 401.6 Q656.5 404.1 656.7 406.7 L656.9 409.2" fill="none" stroke="#d8dcb6" stroke-width="0.9" stroke-linecap="round" opacity="0.4"/><path d="M615.7 373.7 Q613.2 378.3 612.7 380.7 Q612.3 383.2 612.1 385.7 Q611.9 388.3 611.8 390.8 Q611.7 393.3 611.6 395.9 Q611.5 398.4 611.1 400.9 Q610.8 403.4 610.3 405.8 L609.7 408.2" fill="none" stroke="#767a5e" stroke-width="1.0" stroke-linecap="round" opacity="0.57"/><path d="M616.9 374.5 Q614.4 379.1 613.9 381.5 Q613.5 384.0 613.3 386.5 Q613.1 389.1 613.0 391.6 Q612.9 394.1 612.8 396.7 Q612.7 399.2 612.3 401.7 Q612.0 404.2 611.5 406.6 L610.9 409.0" fill="none" stroke="#d8dcb6" stroke-width="0.9" stroke-linecap="round" opacity="0.4"/><path d="M587.5 265.9 Q582.4 266.2 580.1 267.2 Q577.8 268.2 575.5 269.3 Q573.2 270.4 570.9 271.4 Q568.5 272.4 566.2 273.3 Q563.8 274.1 561.4 274.6 L558.9 275.2" fill="none" stroke="#767a5e" stroke-width="0.9" stroke-linecap="round" opacity="0.63"/><path d="M588.7 266.7 Q583.6 267.0 581.3 268.0 Q579.0 269.0 576.7 270.1 Q574.4 271.2 572.1 272.2 Q569.7 273.2 567.4 274.1 Q565.0 274.9 562.6 275.4 L560.1 276.0" fill="none" stroke="#d8dcb6" stroke-width="0.9" stroke-linecap="round" opacity="0.4"/><path d="M618.1 287.9 Q614.9 292.0 613.9 293.9 Q612.9 295.8 611.5 297.9 Q610.1 300.0 608.7 302.1 Q607.3 304.3 606.1 306.5 Q604.8 308.6 603.8 310.9 Q602.7 313.2 602.0 315.6 L601.2 318.0" fill="none" stroke="#767a5e" stroke-width="1.3" stroke-linecap="round" opacity="0.69"/><path d="M619.3 288.7 Q616.1 292.8 615.1 294.7 Q614.1 296.6 612.7 298.7 Q611.3 300.8 609.9 302.9 Q608.5 305.1 607.3 307.3 Q606.0 309.4 605.0 311.7 Q603.9 314.0 603.2 316.4 L602.4 318.8" fill="none" stroke="#d8dcb6" stroke-width="0.9" stroke-linecap="round" opacity="0.4"/><path d="M687.1 149.6 Q686.0 144.6 686.4 142.1 Q686.8 139.6 687.2 137.1 Q687.6 134.6 687.9 132.1 Q688.2 129.6 688.3 127.1 Q688.4 124.6 688.2 122.1 Q688.1 119.6 687.7 117.1 L687.3 114.6" fill="none" stroke="#767a5e" stroke-width="1.5" stroke-linecap="round" opacity="0.74"/><path d="M688.3 150.4 Q687.2 145.4 687.6 142.9 Q688.0 140.4 688.4 137.9 Q688.8 135.4 689.1 132.9 Q689.4 130.4 689.5 127.9 Q689.6 125.4 689.4 122.9 Q689.3 120.4 688.9 117.9 L688.5 115.4" fill="none" stroke="#d8dcb6" stroke-width="0.9" stroke-linecap="round" opacity="0.4"/><path d="M623.3 242.7 Q618.4 244.6 615.9 244.7 Q613.4 244.8 610.9 244.7 L608.4 244.5" fill="none" stroke="#767a5e" stroke-width="0.9" stroke-linecap="round" opacity="0.52"/><path d="M624.5 243.5 Q619.6 245.4 617.1 245.5 Q614.6 245.6 612.1 245.5 L609.6 245.3" fill="none" stroke="#d8dcb6" stroke-width="0.9" stroke-linecap="round" opacity="0.4"/><path d="M582.0 178.8 Q578.2 175.3 576.1 174.0 Q574.0 172.6 571.7 171.5 Q569.5 170.4 567.1 169.5 L564.8 168.6" fill="none" stroke="#767a5e" stroke-width="0.9" stroke-linecap="round" opacity="0.55"/><path d="M583.2 179.6 Q579.4 176.1 577.3 174.8 Q575.2 173.4 572.9 172.3 Q570.7 171.2 568.3 170.3 L566.0 169.4" fill="none" stroke="#d8dcb6" stroke-width="0.9" stroke-linecap="round" opacity="0.4"/><path d="M557.8 233.2 Q552.8 233.3 550.3 232.7 Q547.9 232.2 545.4 231.8 L542.9 231.4" fill="none" stroke="#767a5e" stroke-width="1.3" stroke-linecap="round" opacity="0.54"/><path d="M559.0 234.0 Q554.0 234.1 551.5 233.5 Q549.1 233.0 546.6 232.6 L544.1 232.2" fill="none" stroke="#d8dcb6" stroke-width="0.9" stroke-linecap="round" opacity="0.4"/><path d="M591.8 228.8 Q586.9 226.9 584.4 226.7 Q581.9 226.5 579.4 226.5 Q576.9 226.6 574.4 226.7 Q571.8 226.9 569.3 227.1 L566.8 227.3" fill="none" stroke="#767a5e" stroke-width="1.5" stroke-linecap="round" opacity="0.80"/><path d="M593.0 229.6 Q588.1 227.7 585.6 227.5 Q583.1 227.3 580.6 227.3 Q578.1 227.4 575.6 227.5 Q573.0 227.7 570.5 227.9 L568.0 228.1" fill="none" stroke="#d8dcb6" stroke-width="0.9" stroke-linecap="round" opacity="0.4"/><path d="M639.8 265.6 Q634.8 266.9 632.6 268.1 Q630.5 269.4 628.4 270.8 L626.4 272.3" fill="none" stroke="#767a5e" stroke-width="1.1" stroke-linecap="round" opacity="0.58"/><path d="M641.0 266.4 Q636.0 267.7 633.8 268.9 Q631.7 270.2 629.6 271.6 L627.6 273.1" fill="none" stroke="#d8dcb6" stroke-width="0.9" stroke-linecap="round" opacity="0.4"/><path d="M721.5 178.6 Q724.3 174.4 725.9 172.4 Q727.4 170.4 728.8 168.4 L730.2 166.3" fill="none" stroke="#767a5e" stroke-width="1.3" stroke-linecap="round" opacity="0.54"/><path d="M722.7 179.4 Q725.5 175.2 727.1 173.2 Q728.6 171.2 730.0 169.2 L731.4 167.1" fill="none" stroke="#d8dcb6" stroke-width="0.9" stroke-linecap="round" opacity="0.4"/><path d="M657.2 142.3 Q656.3 137.3 655.9 134.9 Q655.4 132.4 654.7 130.0 Q654.0 127.6 653.1 125.2 Q652.2 122.9 651.1 120.6 L650.0 118.4" fill="none" stroke="#767a5e" stroke-width="1.5" stroke-linecap="round" opacity="0.71"/><path d="M658.4 143.1 Q657.5 138.1 657.1 135.7 Q656.6 133.2 655.9 130.8 Q655.2 128.4 654.3 126.0 Q653.4 123.7 652.3 121.4 L651.2 119.2" fill="none" stroke="#d8dcb6" stroke-width="0.9" stroke-linecap="round" opacity="0.4"/><path d="M593.8 234.0 Q588.7 234.9 586.2 234.4 Q583.7 233.9 581.3 233.4 Q578.8 232.8 576.3 232.4 L573.8 231.9" fill="none" stroke="#767a5e" stroke-width="1.3" stroke-linecap="round" opacity="0.73"/><path d="M595.0 234.8 Q589.9 235.7 587.4 235.2 Q584.9 234.7 582.5 234.2 Q580.0 233.6 577.5 233.2 L575.0 232.7" fill="none" stroke="#d8dcb6" stroke-width="0.9" stroke-linecap="round" opacity="0.4"/><path d="M609.2 195.2 Q605.1 192.2 603.1 190.7 Q601.0 189.3 598.9 188.0 Q596.7 186.8 594.4 185.7 Q592.1 184.7 589.8 183.8 Q587.4 183.0 585.0 182.2 Q582.6 181.4 580.2 180.5 L577.8 179.6" fill="none" stroke="#767a5e" stroke-width="1.5" stroke-linecap="round" opacity="0.74"/><path d="M610.4 196.0 Q606.3 193.0 604.3 191.5 Q602.2 190.1 600.1 188.8 Q597.9 187.6 595.6 186.5 Q593.3 185.5 591.0 184.6 Q588.6 183.8 586.2 183.0 Q583.8 182.2 581.4 181.3 L579.0 180.4" fill="none" stroke="#d8dcb6" stroke-width="0.9" stroke-linecap="round" opacity="0.4"/><path d="M719.1 334.8 Q720.8 339.6 721.4 342.0 Q722.0 344.5 722.3 347.0 Q722.6 349.4 722.7 351.9 L722.7 354.5" fill="none" stroke="#767a5e" stroke-width="1.1" stroke-linecap="round" opacity="0.51"/><path d="M720.3 335.6 Q722.0 340.4 722.6 342.8 Q723.2 345.3 723.5 347.8 Q723.8 350.2 723.9 352.7 L723.9 355.3" fill="none" stroke="#d8dcb6" stroke-width="0.9" stroke-linecap="round" opacity="0.4"/><path d="M541.3 210.4 Q536.1 211.0 533.7 210.3 Q531.3 209.6 528.9 208.7 Q526.5 207.9 524.1 207.0 L521.8 206.1" fill="none" stroke="#767a5e" stroke-width="1.6" stroke-linecap="round" opacity="0.63"/><path d="M542.5 211.2 Q537.3 211.8 534.9 211.1 Q532.5 210.4 530.1 209.5 Q527.7 208.7 525.3 207.8 L523.0 206.9" fill="none" stroke="#d8dcb6" stroke-width="0.9" stroke-linecap="round" opacity="0.4"/><path d="M584.6 196.2 Q580.5 193.1 578.1 192.4 Q575.7 191.7 573.2 191.1 Q570.7 190.6 568.2 190.0 L565.8 189.5" fill="none" stroke="#767a5e" stroke-width="1.3" stroke-linecap="round" opacity="0.77"/><path d="M585.8 197.0 Q581.7 193.9 579.3 193.2 Q576.9 192.5 574.4 191.9 Q571.9 191.4 569.4 190.8 L567.0 190.3" fill="none" stroke="#d8dcb6" stroke-width="0.9" stroke-linecap="round" opacity="0.4"/><path d="M681.9 350.9 Q683.3 355.9 683.1 358.4 Q682.9 360.9 682.5 363.4 L682.1 365.9" fill="none" stroke="#767a5e" stroke-width="1.5" stroke-linecap="round" opacity="0.73"/><path d="M683.1 351.7 Q684.5 356.7 684.3 359.2 Q684.1 361.7 683.7 364.2 L683.3 366.7" fill="none" stroke="#d8dcb6" stroke-width="0.9" stroke-linecap="round" opacity="0.4"/><path d="M609.8 351.2 Q608.4 356.0 608.1 358.5 Q607.9 361.1 607.5 363.6 Q607.2 366.0 606.6 368.5 Q606.0 370.9 605.2 373.3 Q604.3 375.6 603.3 377.9 Q602.3 380.3 601.3 382.6 L600.3 384.9" fill="none" stroke="#767a5e" stroke-width="1.2" stroke-linecap="round" opacity="0.78"/><path d="M611.0 352.0 Q609.6 356.8 609.3 359.3 Q609.1 361.9 608.7 364.4 Q608.4 366.8 607.8 369.3 Q607.2 371.7 606.4 374.1 Q605.5 376.4 604.5 378.7 Q603.5 381.1 602.5 383.4 L601.5 385.7" fill="none" stroke="#d8dcb6" stroke-width="0.9" stroke-linecap="round" opacity="0.4"/><path d="M738.6 352.8 Q740.2 357.5 740.3 360.1 Q740.3 362.6 740.3 365.1 Q740.4 367.7 740.6 370.2 L740.8 372.7" fill="none" stroke="#767a5e" stroke-width="1.6" stroke-linecap="round" opacity="0.70"/><path d="M739.8 353.6 Q741.4 358.3 741.5 360.9 Q741.5 363.4 741.5 365.9 Q741.6 368.5 741.8 371.0 L742.0 373.5" fill="none" stroke="#d8dcb6" stroke-width="0.9" stroke-linecap="round" opacity="0.4"/><path d="M613.8 283.1 Q609.1 284.9 606.8 286.0 Q604.6 287.1 602.4 288.4 Q600.3 289.7 599.1 292.4 L598.0 295.0" fill="none" stroke="#767a5e" stroke-width="1.6" stroke-linecap="round" opacity="0.69"/><path d="M615.0 283.9 Q610.3 285.7 608.0 286.8 Q605.8 287.9 603.6 289.2 Q601.5 290.5 600.3 293.2 L599.2 295.8" fill="none" stroke="#d8dcb6" stroke-width="0.9" stroke-linecap="round" opacity="0.4"/><path d="M653.5 387.1 Q653.3 392.1 652.6 394.5 Q651.9 397.0 651.3 399.4 Q650.7 401.9 650.3 404.4 Q650.0 406.8 649.9 409.3 L649.8 411.8" fill="none" stroke="#767a5e" stroke-width="1.5" stroke-linecap="round" opacity="0.56"/><path d="M654.7 387.9 Q654.5 392.9 653.8 395.3 Q653.1 397.8 652.5 400.2 Q651.9 402.7 651.5 405.2 Q651.2 407.6 651.1 410.1 L651.0 412.6" fill="none" stroke="#d8dcb6" stroke-width="0.9" stroke-linecap="round" opacity="0.4"/><path d="M591.7 214.1 Q586.5 214.2 584.0 213.7 Q581.6 213.1 579.2 212.3 Q576.8 211.5 574.5 210.6 L572.2 209.6" fill="none" stroke="#767a5e" stroke-width="1.1" stroke-linecap="round" opacity="0.63"/><path d="M592.9 214.9 Q587.7 215.0 585.2 214.5 Q582.8 213.9 580.4 213.1 Q578.0 212.3 575.7 211.4 L573.4 210.4" fill="none" stroke="#d8dcb6" stroke-width="0.9" stroke-linecap="round" opacity="0.4"/><path d="M614.6 258.7 Q609.8 260.1 607.3 260.3 Q604.7 260.6 602.3 261.0 Q599.8 261.4 597.4 262.1 Q595.0 262.7 592.6 263.6 Q590.3 264.5 588.0 265.6 L585.7 266.6" fill="none" stroke="#767a5e" stroke-width="1.2" stroke-linecap="round" opacity="0.78"/><path d="M615.8 259.5 Q611.0 260.9 608.5 261.1 Q605.9 261.4 603.5 261.8 Q601.0 262.2 598.6 262.9 Q596.2 263.5 593.8 264.4 Q591.5 265.3 589.2 266.4 L586.9 267.4" fill="none" stroke="#d8dcb6" stroke-width="0.9" stroke-linecap="round" opacity="0.4"/><path d="M647.9 278.6 Q643.7 281.5 641.7 283.1 Q639.8 284.7 638.1 286.5 Q636.3 288.3 634.8 290.2 Q633.2 292.2 632.6 294.8 L632.1 297.5" fill="none" stroke="#767a5e" stroke-width="1.2" stroke-linecap="round" opacity="0.55"/><path d="M649.1 279.4 Q644.9 282.3 642.9 283.9 Q641.0 285.5 639.3 287.3 Q637.5 289.1 636.0 291.0 Q634.4 293.0 633.8 295.6 L633.3 298.3" fill="none" stroke="#d8dcb6" stroke-width="0.9" stroke-linecap="round" opacity="0.4"/><path d="M573.8 262.8 Q569.2 265.1 566.7 265.8 Q564.3 266.4 561.9 266.8 Q559.4 267.3 556.9 267.5 Q554.4 267.6 551.8 267.7 Q549.3 267.8 546.8 268.0 L544.2 268.2" fill="none" stroke="#767a5e" stroke-width="1.1" stroke-linecap="round" opacity="0.66"/><path d="M575.0 263.6 Q570.4 265.9 567.9 266.6 Q565.5 267.2 563.1 267.6 Q560.6 268.1 558.1 268.3 Q555.6 268.4 553.0 268.5 Q550.5 268.6 548.0 268.8 L545.4 269.0" fill="none" stroke="#d8dcb6" stroke-width="0.9" stroke-linecap="round" opacity="0.4"/><path d="M660.0 346.8 Q660.6 351.9 660.5 354.4 Q660.3 356.9 659.9 359.3 L659.5 361.8" fill="none" stroke="#767a5e" stroke-width="1.1" stroke-linecap="round" opacity="0.58"/><path d="M661.2 347.6 Q661.8 352.7 661.7 355.2 Q661.5 357.7 661.1 360.1 L660.7 362.6" fill="none" stroke="#d8dcb6" stroke-width="0.9" stroke-linecap="round" opacity="0.4"/><path d="M661.4 340.2 Q661.2 345.2 661.3 347.7 Q661.4 350.3 661.3 352.8 Q661.2 355.3 660.8 357.7 Q660.5 360.2 659.9 362.7 Q659.3 365.1 658.7 367.6 Q658.0 370.0 657.3 372.4 L656.7 374.9" fill="none" stroke="#767a5e" stroke-width="1.3" stroke-linecap="round" opacity="0.65"/><path d="M662.6 341.0 Q662.4 346.0 662.5 348.5 Q662.6 351.1 662.5 353.6 Q662.4 356.1 662.0 358.5 Q661.7 361.0 661.1 363.5 Q660.5 365.9 659.9 368.4 Q659.2 370.8 658.5 373.2 L657.9 375.7" fill="none" stroke="#d8dcb6" stroke-width="0.9" stroke-linecap="round" opacity="0.4"/><path d="M650.2 322.0 Q650.3 327.2 650.1 329.6 Q649.8 332.1 649.3 334.6 Q648.8 337.0 648.1 339.4 Q647.3 341.8 646.5 344.2 L645.6 346.6" fill="none" stroke="#767a5e" stroke-width="1.2" stroke-linecap="round" opacity="0.78"/><path d="M651.4 322.8 Q651.5 328.0 651.3 330.4 Q651.0 332.9 650.5 335.4 Q650.0 337.8 649.3 340.2 Q648.5 342.6 647.7 345.0 L646.8 347.4" fill="none" stroke="#d8dcb6" stroke-width="0.9" stroke-linecap="round" opacity="0.4"/><path d="M692.3 371.7 Q691.2 376.7 691.6 379.2 Q692.0 381.7 692.5 384.2 Q693.0 386.7 693.4 389.2 Q693.8 391.6 694.0 394.1 Q694.2 396.6 694.1 399.1 Q694.0 401.6 693.8 404.1 L693.5 406.7" fill="none" stroke="#767a5e" stroke-width="1.3" stroke-linecap="round" opacity="0.78"/><path d="M693.5 372.5 Q692.4 377.5 692.8 380.0 Q693.2 382.5 693.7 385.0 Q694.2 387.5 694.6 390.0 Q695.0 392.4 695.2 394.9 Q695.4 397.4 695.3 399.9 Q695.2 402.4 695.0 404.9 L694.7 407.5" fill="none" stroke="#d8dcb6" stroke-width="0.9" stroke-linecap="round" opacity="0.4"/><path d="M724.0 172.0 Q726.1 167.5 727.0 165.1 Q727.8 162.7 728.8 160.4 L729.9 158.1" fill="none" stroke="#767a5e" stroke-width="1.0" stroke-linecap="round" opacity="0.57"/><path d="M725.2 172.8 Q727.3 168.3 728.2 165.9 Q729.0 163.5 730.0 161.2 L731.1 158.9" fill="none" stroke="#d8dcb6" stroke-width="0.9" stroke-linecap="round" opacity="0.4"/><path d="M711.4 377.2 Q713.1 382.1 713.1 384.6 Q713.0 387.1 712.7 389.6 Q712.5 392.2 712.2 394.7 L712.0 397.2" fill="none" stroke="#767a5e" stroke-width="1.4" stroke-linecap="round" opacity="0.54"/><path d="M712.6 378.0 Q714.3 382.9 714.3 385.4 Q714.2 387.9 713.9 390.4 Q713.7 393.0 713.4 395.5 L713.2 398.0" fill="none" stroke="#d8dcb6" stroke-width="0.9" stroke-linecap="round" opacity="0.4"/><path d="M624.6 266.6 Q620.3 269.2 617.9 269.8 Q615.4 270.5 613.0 271.1 Q610.5 271.8 608.1 272.6 Q605.8 273.4 603.5 274.5 Q601.2 275.6 599.1 276.8 Q596.9 278.1 594.8 279.5 L592.7 280.9" fill="none" stroke="#767a5e" stroke-width="1.0" stroke-linecap="round" opacity="0.63"/><path d="M625.8 267.4 Q621.5 270.0 619.1 270.6 Q616.6 271.3 614.2 271.9 Q611.7 272.6 609.3 273.4 Q607.0 274.2 604.7 275.3 Q602.4 276.4 600.3 277.6 Q598.1 278.9 596.0 280.3 L593.9 281.7" fill="none" stroke="#d8dcb6" stroke-width="0.9" stroke-linecap="round" opacity="0.4"/><path d="M579.0 221.0 Q574.3 219.3 571.8 218.6 Q569.4 218.0 566.9 217.7 Q564.4 217.3 561.9 217.2 Q559.4 217.1 556.9 217.1 Q554.3 217.1 551.8 217.2 L549.3 217.2" fill="none" stroke="#767a5e" stroke-width="1.3" stroke-linecap="round" opacity="0.63"/><path d="M580.2 221.8 Q575.5 220.1 573.0 219.4 Q570.6 218.8 568.1 218.5 Q565.6 218.1 563.1 218.0 Q560.6 217.9 558.1 217.9 Q555.5 217.9 553.0 218.0 L550.5 218.0" fill="none" stroke="#d8dcb6" stroke-width="0.9" stroke-linecap="round" opacity="0.4"/><path d="M539.1 224.5 Q534.0 225.0 531.5 225.0 Q529.0 225.0 526.5 224.8 Q524.0 224.6 521.5 224.1 Q519.1 223.6 516.6 223.0 Q514.2 222.3 511.7 221.7 L509.3 221.0" fill="none" stroke="#767a5e" stroke-width="0.9" stroke-linecap="round" opacity="0.80"/><path d="M540.3 225.3 Q535.2 225.8 532.7 225.8 Q530.2 225.8 527.7 225.6 Q525.2 225.4 522.7 224.9 Q520.3 224.4 517.8 223.8 Q515.4 223.1 512.9 222.5 L510.5 221.8" fill="none" stroke="#d8dcb6" stroke-width="0.9" stroke-linecap="round" opacity="0.4"/><path d="M558.6 206.7 Q553.5 206.6 551.1 205.6 Q548.8 204.6 546.5 203.6 L544.1 202.6" fill="none" stroke="#767a5e" stroke-width="1.1" stroke-linecap="round" opacity="0.54"/><path d="M559.8 207.5 Q554.7 207.4 552.3 206.4 Q550.0 205.4 547.7 204.4 L545.3 203.4" fill="none" stroke="#d8dcb6" stroke-width="0.9" stroke-linecap="round" opacity="0.4"/><path d="M630.0 381.1 Q628.0 385.8 627.9 388.3 Q627.8 390.9 627.8 393.4 Q627.9 395.9 627.8 398.5 Q627.8 401.0 627.5 403.5 Q627.3 406.0 626.8 408.4 Q626.3 410.9 625.6 413.3 L624.9 415.7" fill="none" stroke="#767a5e" stroke-width="1.0" stroke-linecap="round" opacity="0.78"/><path d="M631.2 381.9 Q629.2 386.6 629.1 389.1 Q629.0 391.7 629.0 394.2 Q629.1 396.7 629.0 399.3 Q629.0 401.8 628.7 404.3 Q628.5 406.8 628.0 409.2 Q627.5 411.7 626.8 414.1 L626.1 416.5" fill="none" stroke="#d8dcb6" stroke-width="0.9" stroke-linecap="round" opacity="0.4"/><path d="M663.4 324.1 Q661.5 328.9 661.1 331.4 Q660.7 333.9 660.5 336.4 L660.3 338.9" fill="none" stroke="#767a5e" stroke-width="1.4" stroke-linecap="round" opacity="0.63"/><path d="M664.6 324.9 Q662.7 329.7 662.3 332.2 Q661.9 334.7 661.7 337.2 L661.5 339.7" fill="none" stroke="#d8dcb6" stroke-width="0.9" stroke-linecap="round" opacity="0.4"/><path d="M677.7 351.4 Q678.0 356.5 677.5 358.9 Q676.9 361.4 676.4 363.9 L676.0 366.4" fill="none" stroke="#767a5e" stroke-width="0.9" stroke-linecap="round" opacity="0.76"/><path d="M678.9 352.2 Q679.2 357.3 678.7 359.7 Q678.1 362.2 677.6 364.7 L677.2 367.2" fill="none" stroke="#d8dcb6" stroke-width="0.9" stroke-linecap="round" opacity="0.4"/><path d="M637.1 226.6 Q632.3 225.3 629.9 224.3 Q627.6 223.4 625.2 222.6 Q622.8 221.9 620.3 221.3 Q617.9 220.8 615.4 220.5 L612.9 220.3" fill="none" stroke="#767a5e" stroke-width="1.1" stroke-linecap="round" opacity="0.54"/><path d="M638.3 227.4 Q633.5 226.1 631.1 225.1 Q628.8 224.2 626.4 223.4 Q624.0 222.7 621.5 222.1 Q619.1 221.6 616.6 221.3 L614.1 221.1" fill="none" stroke="#d8dcb6" stroke-width="0.9" stroke-linecap="round" opacity="0.4"/><path d="M605.2 217.4 Q600.6 215.2 598.1 215.0 Q595.5 214.8 593.0 214.6 Q590.5 214.4 588.0 214.1 Q585.5 213.8 583.0 213.3 Q580.6 212.7 578.2 212.0 L575.8 211.2" fill="none" stroke="#767a5e" stroke-width="1.3" stroke-linecap="round" opacity="0.55"/><path d="M606.4 218.2 Q601.8 216.0 599.3 215.8 Q596.7 215.6 594.2 215.4 Q591.7 215.2 589.2 214.9 Q586.7 214.6 584.2 214.1 Q581.8 213.5 579.4 212.8 L577.0 212.0" fill="none" stroke="#d8dcb6" stroke-width="0.9" stroke-linecap="round" opacity="0.4"/><path d="M577.6 263.2 Q572.4 262.9 570.0 263.5 Q567.6 264.0 565.2 264.8 Q562.8 265.6 560.4 266.6 Q558.1 267.5 555.8 268.5 Q553.4 269.5 551.1 270.3 Q548.7 271.2 546.3 271.8 L543.8 272.4" fill="none" stroke="#767a5e" stroke-width="1.5" stroke-linecap="round" opacity="0.63"/><path d="M578.8 264.0 Q573.6 263.7 571.2 264.3 Q568.8 264.8 566.4 265.6 Q564.0 266.4 561.6 267.4 Q559.3 268.3 557.0 269.3 Q554.6 270.3 552.3 271.1 Q549.9 272.0 547.5 272.6 L545.0 273.2" fill="none" stroke="#d8dcb6" stroke-width="0.9" stroke-linecap="round" opacity="0.4"/><path d="M646.4 360.3 Q646.5 365.4 646.4 367.9 Q646.3 370.4 646.0 372.9 Q645.6 375.4 645.0 377.8 Q644.5 380.3 643.7 382.7 L643.0 385.1" fill="none" stroke="#767a5e" stroke-width="1.4" stroke-linecap="round" opacity="0.79"/><path d="M647.6 361.1 Q647.7 366.2 647.6 368.7 Q647.5 371.2 647.2 373.7 Q646.8 376.2 646.2 378.6 Q645.7 381.1 644.9 383.5 L644.2 385.9" fill="none" stroke="#d8dcb6" stroke-width="0.9" stroke-linecap="round" opacity="0.4"/><path d="M612.1 359.7 Q612.3 364.9 611.6 367.3 Q610.9 369.7 610.0 372.1 Q609.1 374.4 608.1 376.8 Q607.1 379.1 606.1 381.4 Q605.1 383.7 604.3 386.1 L603.5 388.5" fill="none" stroke="#767a5e" stroke-width="1.2" stroke-linecap="round" opacity="0.60"/><path d="M613.3 360.5 Q613.5 365.7 612.8 368.1 Q612.1 370.5 611.2 372.9 Q610.3 375.2 609.3 377.6 Q608.3 379.9 607.3 382.2 Q606.3 384.5 605.5 386.9 L604.7 389.3" fill="none" stroke="#d8dcb6" stroke-width="0.9" stroke-linecap="round" opacity="0.4"/><path d="M592.5 179.1 Q587.9 176.9 586.1 175.3 Q584.2 173.6 582.2 171.9 L580.3 170.3" fill="none" stroke="#767a5e" stroke-width="1.5" stroke-linecap="round" opacity="0.70"/><path d="M593.7 179.9 Q589.1 177.7 587.3 176.1 Q585.4 174.4 583.4 172.7 L581.5 171.1" fill="none" stroke="#d8dcb6" stroke-width="0.9" stroke-linecap="round" opacity="0.4"/><path d="M598.4 200.4 Q593.6 198.9 591.2 198.3 Q588.7 197.6 586.4 196.8 Q584.0 196.0 581.8 194.9 L579.5 193.8" fill="none" stroke="#767a5e" stroke-width="1.0" stroke-linecap="round" opacity="0.63"/><path d="M599.6 201.2 Q594.8 199.7 592.4 199.1 Q589.9 198.4 587.6 197.6 Q585.2 196.8 583.0 195.7 L580.7 194.6" fill="none" stroke="#d8dcb6" stroke-width="0.9" stroke-linecap="round" opacity="0.4"/><path d="M604.6 231.3 Q599.7 230.7 597.2 230.9 Q594.6 231.1 592.1 231.3 L589.6 231.4" fill="none" stroke="#767a5e" stroke-width="1.2" stroke-linecap="round" opacity="0.65"/><path d="M605.8 232.1 Q600.9 231.5 598.4 231.7 Q595.8 231.9 593.3 232.1 L590.8 232.2" fill="none" stroke="#d8dcb6" stroke-width="0.9" stroke-linecap="round" opacity="0.4"/><path d="M580.2 271.3 Q575.1 271.6 572.8 272.7 Q570.5 273.8 568.3 275.0 L566.0 276.2" fill="none" stroke="#767a5e" stroke-width="1.0" stroke-linecap="round" opacity="0.62"/><path d="M581.4 272.1 Q576.3 272.4 574.0 273.5 Q571.7 274.6 569.5 275.8 L567.2 277.0" fill="none" stroke="#d8dcb6" stroke-width="0.9" stroke-linecap="round" opacity="0.4"/><path d="M603.5 197.9 Q598.5 196.7 596.1 195.8 Q593.8 194.9 591.6 193.8 Q589.3 192.7 587.2 191.3 Q585.0 190.0 583.0 188.5 Q580.9 187.1 578.8 185.6 L576.7 184.2" fill="none" stroke="#767a5e" stroke-width="1.4" stroke-linecap="round" opacity="0.70"/><path d="M604.7 198.7 Q599.7 197.5 597.3 196.6 Q595.0 195.7 592.8 194.6 Q590.5 193.5 588.4 192.1 Q586.2 190.8 584.2 189.3 Q582.1 187.9 580.0 186.4 L577.9 185.0" fill="none" stroke="#d8dcb6" stroke-width="0.9" stroke-linecap="round" opacity="0.4"/><path d="M696.1 372.4 Q695.5 377.4 696.0 379.9 Q696.5 382.3 697.0 384.8 Q697.5 387.3 697.8 389.8 Q698.1 392.3 698.1 394.8 L698.2 397.3" fill="none" stroke="#767a5e" stroke-width="1.6" stroke-linecap="round" opacity="0.54"/><path d="M697.3 373.2 Q696.7 378.2 697.2 380.7 Q697.7 383.1 698.2 385.6 Q698.7 388.1 699.0 390.6 Q699.3 393.1 699.3 395.6 L699.4 398.1" fill="none" stroke="#d8dcb6" stroke-width="0.9" stroke-linecap="round" opacity="0.4"/><path d="M697.9 308.7 Q698.9 313.6 698.6 316.1 Q698.3 318.7 698.1 321.2 L697.8 323.7" fill="none" stroke="#767a5e" stroke-width="1.5" stroke-linecap="round" opacity="0.69"/><path d="M699.1 309.5 Q700.1 314.4 699.8 316.9 Q699.5 319.5 699.3 322.0 L699.0 324.5" fill="none" stroke="#d8dcb6" stroke-width="0.9" stroke-linecap="round" opacity="0.4"/><path d="M700.1 354.3 Q701.4 359.2 701.7 361.7 Q702.0 364.2 702.1 366.7 Q702.2 369.2 702.0 371.7 L701.9 374.2" fill="none" stroke="#767a5e" stroke-width="1.3" stroke-linecap="round" opacity="0.75"/><path d="M701.3 355.1 Q702.6 360.0 702.9 362.5 Q703.2 365.0 703.3 367.5 Q703.4 370.0 703.2 372.5 L703.1 375.0" fill="none" stroke="#d8dcb6" stroke-width="0.9" stroke-linecap="round" opacity="0.4"/><path d="M716.1 358.1 Q716.7 363.1 716.5 365.6 Q716.3 368.2 716.3 370.7 Q716.2 373.2 716.4 375.7 Q716.6 378.2 717.0 380.6 Q717.5 383.1 718.1 385.6 L718.7 388.0" fill="none" stroke="#767a5e" stroke-width="1.4" stroke-linecap="round" opacity="0.71"/><path d="M717.3 358.9 Q717.9 363.9 717.7 366.4 Q717.5 369.0 717.5 371.5 Q717.4 374.0 717.6 376.5 Q717.8 379.0 718.2 381.4 Q718.7 383.9 719.3 386.4 L719.9 388.8" fill="none" stroke="#d8dcb6" stroke-width="0.9" stroke-linecap="round" opacity="0.4"/><path d="M564.9 232.4 Q559.9 232.8 557.4 232.2 Q555.0 231.7 552.5 231.2 L550.0 230.7" fill="none" stroke="#767a5e" stroke-width="1.3" stroke-linecap="round" opacity="0.69"/><path d="M566.1 233.2 Q561.1 233.6 558.6 233.0 Q556.2 232.5 553.7 232.0 L551.2 231.5" fill="none" stroke="#d8dcb6" stroke-width="0.9" stroke-linecap="round" opacity="0.4"/><path d="M675.9 318.8 Q674.7 323.7 674.3 326.2 Q673.8 328.7 673.6 331.2 Q673.5 333.7 673.5 336.2 Q673.6 338.7 673.9 341.2 L674.1 343.7" fill="none" stroke="#767a5e" stroke-width="1.5" stroke-linecap="round" opacity="0.72"/><path d="M677.1 319.6 Q675.9 324.5 675.5 327.0 Q675.0 329.5 674.8 332.0 Q674.7 334.5 674.7 337.0 Q674.8 339.5 675.1 342.0 L675.3 344.5" fill="none" stroke="#d8dcb6" stroke-width="0.9" stroke-linecap="round" opacity="0.4"/><path d="M648.2 279.5 Q643.8 282.2 642.0 284.0 Q640.2 285.7 638.5 287.6 Q636.9 289.5 636.3 292.2 Q635.6 294.9 635.2 297.4 Q634.8 299.9 634.4 302.4 L633.9 304.9" fill="none" stroke="#767a5e" stroke-width="1.4" stroke-linecap="round" opacity="0.58"/><path d="M649.4 280.3 Q645.0 283.0 643.2 284.8 Q641.4 286.5 639.7 288.4 Q638.1 290.3 637.5 293.0 Q636.8 295.7 636.4 298.2 Q636.0 300.7 635.6 303.2 L635.1 305.7" fill="none" stroke="#d8dcb6" stroke-width="0.9" stroke-linecap="round" opacity="0.4"/><path d="M551.8 206.7 Q547.2 204.2 544.7 203.9 Q542.2 203.6 539.7 203.4 Q537.1 203.3 534.6 203.1 Q532.1 203.0 529.6 202.7 Q527.1 202.4 524.6 201.9 L522.2 201.4" fill="none" stroke="#767a5e" stroke-width="1.4" stroke-linecap="round" opacity="0.79"/><path d="M553.0 207.5 Q548.4 205.0 545.9 204.7 Q543.4 204.4 540.9 204.2 Q538.3 204.1 535.8 203.9 Q533.3 203.8 530.8 203.5 Q528.3 203.2 525.8 202.7 L523.4 202.2" fill="none" stroke="#d8dcb6" stroke-width="0.9" stroke-linecap="round" opacity="0.4"/><path d="M642.8 319.6 Q643.1 324.8 642.5 327.2 Q641.9 329.7 641.1 332.0 Q640.3 334.4 639.4 336.8 Q638.4 339.1 637.5 341.5 Q636.6 343.8 635.8 346.2 L635.0 348.6" fill="none" stroke="#767a5e" stroke-width="1.3" stroke-linecap="round" opacity="0.52"/><path d="M644.0 320.4 Q644.3 325.6 643.7 328.0 Q643.1 330.5 642.3 332.8 Q641.5 335.2 640.6 337.6 Q639.6 339.9 638.7 342.3 Q637.8 344.6 637.0 347.0 L636.2 349.4" fill="none" stroke="#d8dcb6" stroke-width="0.9" stroke-linecap="round" opacity="0.4"/><path d="M568.2 203.6 Q563.6 201.3 561.1 201.0 Q558.6 200.8 556.1 200.5 Q553.5 200.2 551.0 199.8 Q548.6 199.4 546.2 198.7 Q543.7 198.1 541.4 197.2 L539.0 196.3" fill="none" stroke="#767a5e" stroke-width="1.3" stroke-linecap="round" opacity="0.50"/><path d="M569.4 204.4 Q564.8 202.1 562.3 201.8 Q559.8 201.6 557.3 201.3 Q554.7 201.0 552.2 200.6 Q549.8 200.2 547.4 199.5 Q544.9 198.9 542.6 198.0 L540.2 197.1" fill="none" stroke="#d8dcb6" stroke-width="0.9" stroke-linecap="round" opacity="0.4"/>
</g>
<path d="M508.1 206.2 L517.5 222.5 L527.5 232.5 L536.2 241.2 L542.5 252.5 L543.8 256.2 L555.0 256.2 L567.5 258.8 L575.0 261.2 L580.0 265.0 L589.7 276.6 L600.2 281.8 L597.5 295.0 L610.7 295.0 L621.0 308.0 L626.4 318.5 L618.5 323.8 L621.0 336.9 L623.8 347.4 L613.3 357.9 L621.0 371.0 L618.5 384.0 L613.5 395.5 L624.0 402.5 L636.0 418.0 L627.5 427.0 L645.0 444.5 L648.5 465.5 L639.8 458.5 L645.0 493.5 L636.0 483.0 L631.0 490.0 L631.0 507.5 L624.0 525.0 L610.0 539.0 L580.0 549.0 L560.0 548.0 L558.0 570.0 L552.0 590.0 L549.0 608.0 L554.0 616.0 L560.0 630.0 L556.0 642.0 L544.0 654.0 L520.0 660.0 L506.0 664.0 L490.0 674.0 L480.0 670.0 L460.0 658.0 L443.7 645.4 L426.4 631.0 L415.0 625.3 L409.2 641.0 L400.6 634.0 L392.0 619.5 L383.3 634.0 L377.6 622.4 L366.0 608.0 L353.2 576.4 L343.0 590.8 L338.8 565.0 L343.0 536.2 L338.8 527.6 L337.4 553.4 L325.9 567.8 L315.8 576.4 L314.4 573.6 L321.6 553.4 L324.4 536.2 L318.7 524.7 L315.8 507.5 L320.0 487.4 L328.7 467.2 L335.0 452.0 L340.5 437.5 L343.9 419.5 L349.5 408.2 L356.2 401.5 L369.7 394.7 L378.7 379.0 L394.5 370.0 L403.5 367.7 L404.6 356.5 L412.5 345.2 L426.0 327.2 L432.7 316.0 L444.0 307.0 L462.0 303.6 L475.5 294.6 L486.0 286.0 L497.0 281.0 L503.0 280.0 L502.5 276.2 L498.8 265.0 L500.0 245.0 L501.9 227.5 L505.0 213.8Z" fill="#9dc9b2"/>
<g clip-path="url(#hclip)"><path d="M460.8 462.1 Q459.3 464.7 458.5 466.0 Q457.7 467.3 456.9 468.6 Q456.1 469.9 455.3 471.3 Q454.5 472.6 453.8 473.9 Q453.0 475.3 452.4 476.6 Q451.7 478.0 451.1 479.4 Q450.5 480.8 449.9 482.2 Q449.4 483.6 449.0 485.1 Q448.6 486.5 448.3 488.0 Q447.9 489.5 447.7 491.0 Q447.5 492.5 447.4 494.0 Q447.2 495.5 447.2 497.1 Q447.1 498.6 447.1 500.1 Q447.0 501.7 447.0 503.2 Q447.0 504.7 447.0 506.3 Q447.0 507.8 446.9 509.3 Q446.9 510.8 446.7 512.3 Q446.6 513.8 446.4 515.3 Q446.2 516.8 446.0 518.3 Q445.7 519.7 445.3 521.2 Q444.9 522.6 444.5 524.1 Q444.1 525.5 443.5 526.9 Q443.0 528.3 442.5 529.8 Q441.9 531.2 441.3 532.6 Q440.7 534.1 440.2 535.5 Q439.6 536.9 439.1 538.4 Q438.6 539.8 438.1 541.3 Q437.7 542.8 437.3 544.2 Q437.0 545.7 436.8 547.2 Q436.5 548.7 436.4 550.2 Q436.3 551.7 436.3 553.2 Q436.3 554.7 436.4 556.2 Q436.5 557.8 436.7 559.3 L436.8 560.8" fill="none" stroke="#6e9a86" stroke-width="4.5" opacity="0.3" stroke-linecap="round"/><path d="M463.8 462.1 Q462.3 464.7 461.5 466.0 Q460.7 467.3 459.9 468.6 Q459.1 469.9 458.3 471.3 Q457.5 472.6 456.8 473.9 Q456.0 475.3 455.4 476.6 Q454.7 478.0 454.1 479.4 Q453.5 480.8 452.9 482.2 Q452.4 483.6 452.0 485.1 Q451.6 486.5 451.3 488.0 Q450.9 489.5 450.7 491.0 Q450.5 492.5 450.4 494.0 Q450.2 495.5 450.2 497.1 Q450.1 498.6 450.1 500.1 Q450.0 501.7 450.0 503.2 Q450.0 504.7 450.0 506.3 Q450.0 507.8 449.9 509.3 Q449.9 510.8 449.7 512.3 Q449.6 513.8 449.4 515.3 Q449.2 516.8 449.0 518.3 Q448.7 519.7 448.3 521.2 Q447.9 522.6 447.5 524.1 Q447.1 525.5 446.5 526.9 Q446.0 528.3 445.5 529.8 Q444.9 531.2 444.3 532.6 Q443.7 534.1 443.2 535.5 Q442.6 536.9 442.1 538.4 Q441.6 539.8 441.1 541.3 Q440.7 542.8 440.3 544.2 Q440.0 545.7 439.8 547.2 Q439.5 548.7 439.4 550.2 Q439.3 551.7 439.3 553.2 Q439.3 554.7 439.4 556.2 Q439.5 557.8 439.7 559.3 L439.8 560.8" fill="none" stroke="#bfe6d2" stroke-width="2.6" opacity="0.3" stroke-linecap="round"/><path d="M368.4 443.2 Q367.0 445.9 366.4 447.3 Q365.8 448.7 365.3 450.1 Q364.7 451.5 364.3 453.0 Q363.9 454.4 363.6 455.9 Q363.3 457.4 363.1 459.0 Q362.9 460.5 362.7 462.0 Q362.6 463.6 362.5 465.1 Q362.3 466.7 362.2 468.2 Q362.1 469.8 362.0 471.3 Q361.9 472.8 361.7 474.4 Q361.5 475.9 361.3 477.4 Q361.1 478.8 360.8 480.3 Q360.4 481.8 360.0 483.2 Q359.6 484.6 359.1 486.0 Q358.6 487.4 358.0 488.8 Q357.4 490.2 356.7 491.5 Q356.0 492.9 355.2 494.2 Q354.5 495.6 353.7 496.9 Q352.9 498.3 352.2 499.6 Q351.4 501.0 350.6 502.4 Q349.9 503.7 349.2 505.1 Q348.5 506.5 347.9 507.9 Q347.3 509.4 346.9 510.8 Q346.4 512.3 346.1 513.7 Q345.7 515.2 345.5 516.7 Q345.4 518.2 345.3 519.7 Q345.2 521.3 345.3 522.8 L345.3 524.3" fill="none" stroke="#6e9a86" stroke-width="3.3" opacity="0.3" stroke-linecap="round"/><path d="M371.4 443.2 Q370.0 445.9 369.4 447.3 Q368.8 448.7 368.3 450.1 Q367.7 451.5 367.3 453.0 Q366.9 454.4 366.6 455.9 Q366.3 457.4 366.1 459.0 Q365.9 460.5 365.7 462.0 Q365.6 463.6 365.5 465.1 Q365.3 466.7 365.2 468.2 Q365.1 469.8 365.0 471.3 Q364.9 472.8 364.7 474.4 Q364.5 475.9 364.3 477.4 Q364.1 478.8 363.8 480.3 Q363.4 481.8 363.0 483.2 Q362.6 484.6 362.1 486.0 Q361.6 487.4 361.0 488.8 Q360.4 490.2 359.7 491.5 Q359.0 492.9 358.2 494.2 Q357.5 495.6 356.7 496.9 Q355.9 498.3 355.2 499.6 Q354.4 501.0 353.6 502.4 Q352.9 503.7 352.2 505.1 Q351.5 506.5 350.9 507.9 Q350.3 509.4 349.9 510.8 Q349.4 512.3 349.1 513.7 Q348.7 515.2 348.5 516.7 Q348.4 518.2 348.3 519.7 Q348.2 521.3 348.3 522.8 L348.3 524.3" fill="none" stroke="#bfe6d2" stroke-width="2.3" opacity="0.3" stroke-linecap="round"/><path d="M537.0 272.9 Q534.5 274.7 533.3 275.6 Q532.2 276.5 531.0 277.5 Q529.8 278.4 528.7 279.4 Q527.5 280.3 526.4 281.3 Q525.3 282.3 524.2 283.3 Q523.1 284.4 522.0 285.4 Q520.9 286.4 519.8 287.5 Q518.7 288.6 517.7 289.6 Q516.6 290.7 515.6 291.8 Q514.6 293.0 513.6 294.1 Q512.6 295.2 511.6 296.4 Q510.6 297.6 509.7 298.7 Q508.7 299.9 507.8 301.1 Q506.8 302.3 505.9 303.5 Q505.0 304.7 504.1 305.9 Q503.1 307.1 502.2 308.4 Q501.3 309.6 500.4 310.8 Q499.5 312.0 498.6 313.2 Q497.7 314.4 496.8 315.6 Q495.9 316.8 494.9 318.0 Q494.0 319.2 493.1 320.4 Q492.1 321.5 491.2 322.7 Q490.2 323.8 489.2 325.0 Q488.3 326.1 487.3 327.2 Q486.3 328.3 485.2 329.4 Q484.2 330.4 483.1 331.5 Q482.1 332.5 481.0 333.6 Q479.9 334.6 478.8 335.6 Q477.7 336.6 476.5 337.6 Q475.4 338.6 474.2 339.5 Q473.1 340.5 471.9 341.4 Q470.7 342.4 469.5 343.3 Q468.3 344.3 467.1 345.2 Q465.9 346.2 464.7 347.1 Q463.5 348.1 462.3 349.0 L461.1 350.0" fill="none" stroke="#6e9a86" stroke-width="5.0" opacity="0.3" stroke-linecap="round"/><path d="M540.0 272.9 Q537.5 274.7 536.3 275.6 Q535.2 276.5 534.0 277.5 Q532.8 278.4 531.7 279.4 Q530.5 280.3 529.4 281.3 Q528.3 282.3 527.2 283.3 Q526.1 284.4 525.0 285.4 Q523.9 286.4 522.8 287.5 Q521.7 288.6 520.7 289.6 Q519.6 290.7 518.6 291.8 Q517.6 293.0 516.6 294.1 Q515.6 295.2 514.6 296.4 Q513.6 297.6 512.7 298.7 Q511.7 299.9 510.8 301.1 Q509.8 302.3 508.9 303.5 Q508.0 304.7 507.1 305.9 Q506.1 307.1 505.2 308.4 Q504.3 309.6 503.4 310.8 Q502.5 312.0 501.6 313.2 Q500.7 314.4 499.8 315.6 Q498.9 316.8 497.9 318.0 Q497.0 319.2 496.1 320.4 Q495.1 321.5 494.2 322.7 Q493.2 323.8 492.2 325.0 Q491.3 326.1 490.3 327.2 Q489.3 328.3 488.2 329.4 Q487.2 330.4 486.1 331.5 Q485.1 332.5 484.0 333.6 Q482.9 334.6 481.8 335.6 Q480.7 336.6 479.5 337.6 Q478.4 338.6 477.2 339.5 Q476.1 340.5 474.9 341.4 Q473.7 342.4 472.5 343.3 Q471.3 344.3 470.1 345.2 Q468.9 346.2 467.7 347.1 Q466.5 348.1 465.3 349.0 L464.1 350.0" fill="none" stroke="#bfe6d2" stroke-width="2.6" opacity="0.3" stroke-linecap="round"/><path d="M456.4 563.4 Q456.8 566.4 457.0 568.0 Q457.1 569.5 457.1 571.0 Q457.1 572.5 457.0 574.0 Q456.9 575.5 456.7 577.0 Q456.5 578.5 456.1 579.9 Q455.8 581.4 455.4 582.9 Q454.9 584.3 454.4 585.8 Q453.9 587.2 453.3 588.7 Q452.7 590.1 452.2 591.6 Q451.6 593.0 451.1 594.5 Q450.6 596.0 450.1 597.4 Q449.6 598.9 449.3 600.4 Q448.9 601.8 448.7 603.3 Q448.4 604.8 448.3 606.3 Q448.2 607.8 448.2 609.3 Q448.2 610.8 448.3 612.3 Q448.5 613.8 448.7 615.4 Q448.9 616.9 449.1 618.4 Q449.4 620.0 449.6 621.5 Q449.9 623.0 450.1 624.6 Q450.4 626.1 450.6 627.6 Q450.8 629.1 450.9 630.7 Q451.0 632.2 450.9 633.7 Q450.9 635.2 450.8 636.7 L450.7 638.2" fill="none" stroke="#6e9a86" stroke-width="4.5" opacity="0.3" stroke-linecap="round"/><path d="M459.4 563.4 Q459.8 566.4 460.0 568.0 Q460.1 569.5 460.1 571.0 Q460.1 572.5 460.0 574.0 Q459.9 575.5 459.7 577.0 Q459.5 578.5 459.1 579.9 Q458.8 581.4 458.4 582.9 Q457.9 584.3 457.4 585.8 Q456.9 587.2 456.3 588.7 Q455.7 590.1 455.2 591.6 Q454.6 593.0 454.1 594.5 Q453.6 596.0 453.1 597.4 Q452.6 598.9 452.3 600.4 Q451.9 601.8 451.7 603.3 Q451.4 604.8 451.3 606.3 Q451.2 607.8 451.2 609.3 Q451.2 610.8 451.3 612.3 Q451.5 613.8 451.7 615.4 Q451.9 616.9 452.1 618.4 Q452.4 620.0 452.6 621.5 Q452.9 623.0 453.1 624.6 Q453.4 626.1 453.6 627.6 Q453.8 629.1 453.9 630.7 Q454.0 632.2 453.9 633.7 Q453.9 635.2 453.8 636.7 L453.7 638.2" fill="none" stroke="#bfe6d2" stroke-width="2.7" opacity="0.3" stroke-linecap="round"/><path d="M458.3 358.1 Q456.3 360.4 455.4 361.6 Q454.5 362.8 453.6 364.1 Q452.8 365.3 452.0 366.6 Q451.2 367.9 450.5 369.2 Q449.7 370.6 449.1 371.9 Q448.4 373.3 447.8 374.7 Q447.1 376.1 446.6 377.6 Q446.0 379.0 445.4 380.4 Q444.9 381.9 444.4 383.3 Q443.8 384.8 443.3 386.2 Q442.8 387.7 442.2 389.1 Q441.7 390.5 441.1 391.9 Q440.6 393.3 440.0 394.7 Q439.4 396.1 438.8 397.5 Q438.1 398.8 437.4 400.1 Q436.7 401.4 436.0 402.7 Q435.2 404.0 434.4 405.2 Q433.5 406.5 432.6 407.7 Q431.8 408.9 430.8 410.1 Q429.9 411.2 428.9 412.4 Q427.9 413.5 426.8 414.7 Q425.8 415.8 424.7 416.9 Q423.7 418.1 422.6 419.2 Q421.5 420.4 420.5 421.5 Q419.4 422.7 418.4 423.9 Q417.4 425.0 416.5 426.3 Q415.6 427.5 414.7 428.7 Q413.8 430.0 413.1 431.3 Q412.3 432.6 411.6 434.0 Q411.0 435.4 410.4 436.8 Q409.8 438.2 409.4 439.6 Q408.9 441.1 408.6 442.6 Q408.3 444.1 408.0 445.6 Q407.7 447.1 407.5 448.7 Q407.3 450.2 407.2 451.8 L407.1 453.3" fill="none" stroke="#6e9a86" stroke-width="5.5" opacity="0.3" stroke-linecap="round"/><path d="M461.3 358.1 Q459.3 360.4 458.4 361.6 Q457.5 362.8 456.6 364.1 Q455.8 365.3 455.0 366.6 Q454.2 367.9 453.5 369.2 Q452.7 370.6 452.1 371.9 Q451.4 373.3 450.8 374.7 Q450.1 376.1 449.6 377.6 Q449.0 379.0 448.4 380.4 Q447.9 381.9 447.4 383.3 Q446.8 384.8 446.3 386.2 Q445.8 387.7 445.2 389.1 Q444.7 390.5 444.1 391.9 Q443.6 393.3 443.0 394.7 Q442.4 396.1 441.8 397.5 Q441.1 398.8 440.4 400.1 Q439.7 401.4 439.0 402.7 Q438.2 404.0 437.4 405.2 Q436.5 406.5 435.6 407.7 Q434.8 408.9 433.8 410.1 Q432.9 411.2 431.9 412.4 Q430.9 413.5 429.8 414.7 Q428.8 415.8 427.7 416.9 Q426.7 418.1 425.6 419.2 Q424.5 420.4 423.5 421.5 Q422.4 422.7 421.4 423.9 Q420.4 425.0 419.5 426.3 Q418.6 427.5 417.7 428.7 Q416.8 430.0 416.1 431.3 Q415.3 432.6 414.6 434.0 Q414.0 435.4 413.4 436.8 Q412.8 438.2 412.4 439.6 Q411.9 441.1 411.6 442.6 Q411.3 444.1 411.0 445.6 Q410.7 447.1 410.5 448.7 Q410.3 450.2 410.2 451.8 L410.1 453.3" fill="none" stroke="#bfe6d2" stroke-width="2.7" opacity="0.3" stroke-linecap="round"/><path d="M588.7 399.2 Q590.2 402.1 590.9 403.5 Q591.6 404.9 592.3 406.4 Q593.0 407.8 593.5 409.3 Q594.0 410.7 594.4 412.2 Q594.8 413.7 595.0 415.2 Q595.2 416.7 595.3 418.2 Q595.3 419.7 595.2 421.3 Q595.1 422.8 594.9 424.4 Q594.7 426.0 594.4 427.5 Q594.1 429.1 593.8 430.7 Q593.5 432.3 593.3 433.8 Q593.0 435.4 592.9 437.0 Q592.7 438.5 592.7 440.1 Q592.7 441.6 592.8 443.1 Q592.9 444.6 593.2 446.1 Q593.5 447.6 594.0 449.1 Q594.5 450.5 595.1 452.0 Q595.7 453.4 596.4 454.8 Q597.1 456.3 597.8 457.7 Q598.6 459.1 599.3 460.8 Q600.0 462.6 599.8 464.1 Q599.6 465.6 599.4 467.1 Q599.2 468.6 598.9 470.1 Q598.6 471.6 598.3 473.0 Q597.9 474.5 597.4 475.9 Q597.0 477.3 596.4 478.7 Q595.8 480.0 595.2 481.4 Q594.5 482.8 593.8 484.1 Q593.0 485.4 592.2 486.8 Q591.4 488.1 590.6 489.4 Q589.8 490.7 589.0 492.1 Q588.2 493.4 587.4 494.8 Q586.6 496.1 585.9 497.5 Q585.2 498.9 584.6 500.3 L583.9 501.7" fill="none" stroke="#6e9a86" stroke-width="3.0" opacity="0.3" stroke-linecap="round"/><path d="M591.7 399.2 Q593.2 402.1 593.9 403.5 Q594.6 404.9 595.3 406.4 Q596.0 407.8 596.5 409.3 Q597.0 410.7 597.4 412.2 Q597.8 413.7 598.0 415.2 Q598.2 416.7 598.3 418.2 Q598.3 419.7 598.2 421.3 Q598.1 422.8 597.9 424.4 Q597.7 426.0 597.4 427.5 Q597.1 429.1 596.8 430.7 Q596.5 432.3 596.3 433.8 Q596.0 435.4 595.9 437.0 Q595.7 438.5 595.7 440.1 Q595.7 441.6 595.8 443.1 Q595.9 444.6 596.2 446.1 Q596.5 447.6 597.0 449.1 Q597.5 450.5 598.1 452.0 Q598.7 453.4 599.4 454.8 Q600.1 456.3 600.8 457.7 Q601.6 459.1 602.3 460.8 Q603.0 462.6 602.8 464.1 Q602.6 465.6 602.4 467.1 Q602.2 468.6 601.9 470.1 Q601.6 471.6 601.3 473.0 Q600.9 474.5 600.4 475.9 Q600.0 477.3 599.4 478.7 Q598.8 480.0 598.2 481.4 Q597.5 482.8 596.8 484.1 Q596.0 485.4 595.2 486.8 Q594.4 488.1 593.6 489.4 Q592.8 490.7 592.0 492.1 Q591.2 493.4 590.4 494.8 Q589.6 496.1 588.9 497.5 Q588.2 498.9 587.6 500.3 L586.9 501.7" fill="none" stroke="#bfe6d2" stroke-width="2.2" opacity="0.3" stroke-linecap="round"/><path d="M336.0 487.1 Q335.3 490.0 334.8 491.5 Q334.4 492.9 333.9 494.3 Q333.4 495.7 332.9 497.1 Q332.3 498.5 331.7 499.9 Q331.1 501.3 330.5 502.7 Q329.9 504.1 329.3 505.5 Q328.7 506.9 328.1 508.3 Q327.5 509.7 326.9 511.1 Q326.3 512.6 325.9 514.0 Q325.4 515.4 325.0 516.9 Q324.5 518.3 324.2 519.8 Q323.9 521.3 323.7 522.8 Q323.5 524.3 323.3 525.8 Q323.2 527.3 323.2 528.8 Q323.1 530.3 323.2 531.8 Q323.2 533.4 323.3 534.9 Q323.3 536.4 323.4 538.0 Q323.5 539.5 323.6 541.0 Q323.7 542.5 323.8 544.0 Q323.9 545.5 323.9 547.0 Q323.9 548.6 323.8 550.0 Q323.7 551.5 323.6 553.0 Q323.4 554.5 323.2 556.0 Q323.0 557.5 322.6 559.0 Q322.3 560.4 321.9 561.9 Q321.5 563.4 321.1 564.8 Q320.7 566.3 320.2 567.8 Q319.8 569.2 319.3 570.7 Q318.9 572.2 318.5 573.6 Q318.0 575.1 317.7 576.6 L317.3 578.0" fill="none" stroke="#6e9a86" stroke-width="3.3" opacity="0.3" stroke-linecap="round"/><path d="M339.0 487.1 Q338.3 490.0 337.8 491.5 Q337.4 492.9 336.9 494.3 Q336.4 495.7 335.9 497.1 Q335.3 498.5 334.7 499.9 Q334.1 501.3 333.5 502.7 Q332.9 504.1 332.3 505.5 Q331.7 506.9 331.1 508.3 Q330.5 509.7 329.9 511.1 Q329.3 512.6 328.9 514.0 Q328.4 515.4 328.0 516.9 Q327.5 518.3 327.2 519.8 Q326.9 521.3 326.7 522.8 Q326.5 524.3 326.3 525.8 Q326.2 527.3 326.2 528.8 Q326.1 530.3 326.2 531.8 Q326.2 533.4 326.3 534.9 Q326.3 536.4 326.4 538.0 Q326.5 539.5 326.6 541.0 Q326.7 542.5 326.8 544.0 Q326.9 545.5 326.9 547.0 Q326.9 548.6 326.8 550.0 Q326.7 551.5 326.6 553.0 Q326.4 554.5 326.2 556.0 Q326.0 557.5 325.6 559.0 Q325.3 560.4 324.9 561.9 Q324.5 563.4 324.1 564.8 Q323.7 566.3 323.2 567.8 Q322.8 569.2 322.3 570.7 Q321.9 572.2 321.5 573.6 Q321.0 575.1 320.7 576.6 L320.3 578.0" fill="none" stroke="#bfe6d2" stroke-width="2.3" opacity="0.3" stroke-linecap="round"/><path d="M571.2 324.2 Q571.3 327.3 571.4 328.8 Q571.5 330.3 571.8 331.8 Q572.1 333.3 572.4 334.8 Q572.8 336.3 573.3 337.7 Q573.8 339.2 574.4 340.6 Q575.0 342.1 575.6 343.5 Q576.2 345.0 576.8 346.4 Q577.4 347.8 578.0 349.3 Q578.5 350.7 579.0 352.2 Q579.5 353.7 579.9 355.1 Q580.3 356.6 580.5 358.1 Q580.8 359.6 580.9 361.1 Q581.1 362.6 581.1 364.2 Q581.1 365.7 581.0 367.2 Q581.0 368.8 580.8 370.3 Q580.7 371.9 580.5 373.5 Q580.3 375.0 580.2 376.6 Q580.0 378.1 580.0 379.7 Q579.9 381.2 579.9 382.8 Q579.9 384.3 580.0 385.8 Q580.1 387.3 580.3 388.8 Q580.6 390.3 580.9 391.8 Q581.3 393.3 581.8 394.7 Q582.3 396.2 582.8 397.6 Q583.4 399.1 584.0 400.5 L584.6 402.0" fill="none" stroke="#6e9a86" stroke-width="3.6" opacity="0.3" stroke-linecap="round"/><path d="M574.2 324.2 Q574.3 327.3 574.4 328.8 Q574.5 330.3 574.8 331.8 Q575.1 333.3 575.4 334.8 Q575.8 336.3 576.3 337.7 Q576.8 339.2 577.4 340.6 Q578.0 342.1 578.6 343.5 Q579.2 345.0 579.8 346.4 Q580.4 347.8 581.0 349.3 Q581.5 350.7 582.0 352.2 Q582.5 353.7 582.9 355.1 Q583.3 356.6 583.5 358.1 Q583.8 359.6 583.9 361.1 Q584.1 362.6 584.1 364.2 Q584.1 365.7 584.0 367.2 Q584.0 368.8 583.8 370.3 Q583.7 371.9 583.5 373.5 Q583.3 375.0 583.2 376.6 Q583.0 378.1 583.0 379.7 Q582.9 381.2 582.9 382.8 Q582.9 384.3 583.0 385.8 Q583.1 387.3 583.3 388.8 Q583.6 390.3 583.9 391.8 Q584.3 393.3 584.8 394.7 Q585.3 396.2 585.8 397.6 Q586.4 399.1 587.0 400.5 L587.6 402.0" fill="none" stroke="#bfe6d2" stroke-width="2.7" opacity="0.3" stroke-linecap="round"/><path d="M354.7 492.1 Q353.5 494.9 352.8 496.3 Q352.1 497.6 351.4 499.0 Q350.7 500.4 350.1 501.8 Q349.4 503.2 348.8 504.6 Q348.2 506.0 347.6 507.4 Q347.1 508.8 346.6 510.3 Q346.1 511.7 345.8 513.2 Q345.4 514.6 345.2 516.1 Q344.9 517.6 344.8 519.1 Q344.6 520.6 344.6 522.2 Q344.5 523.7 344.6 525.2 Q344.6 526.7 344.7 528.3 Q344.8 529.8 344.9 531.3 Q345.0 532.9 345.1 534.4 Q345.2 535.9 345.3 537.5 L345.4 539.0" fill="none" stroke="#6e9a86" stroke-width="3.6" opacity="0.3" stroke-linecap="round"/><path d="M357.7 492.1 Q356.5 494.9 355.8 496.3 Q355.1 497.6 354.4 499.0 Q353.7 500.4 353.1 501.8 Q352.4 503.2 351.8 504.6 Q351.2 506.0 350.6 507.4 Q350.1 508.8 349.6 510.3 Q349.1 511.7 348.8 513.2 Q348.4 514.6 348.2 516.1 Q347.9 517.6 347.8 519.1 Q347.6 520.6 347.6 522.2 Q347.5 523.7 347.6 525.2 Q347.6 526.7 347.7 528.3 Q347.8 529.8 347.9 531.3 Q348.0 532.9 348.1 534.4 Q348.2 535.9 348.3 537.5 L348.4 539.0" fill="none" stroke="#bfe6d2" stroke-width="2.3" opacity="0.3" stroke-linecap="round"/><path d="M411.7 578.7 Q411.9 581.7 411.9 583.2 Q411.9 584.7 411.8 586.2 Q411.7 587.7 411.6 589.2 Q411.4 590.7 411.1 592.2 Q410.8 593.7 410.4 595.1 Q410.0 596.6 409.6 598.1 Q409.1 599.5 408.6 601.0 Q408.1 602.4 407.7 603.9 Q407.2 605.4 406.7 606.8 Q406.2 608.3 405.8 609.8 Q405.4 611.2 405.1 612.7 Q404.7 614.2 404.5 615.6 Q404.2 617.1 404.1 618.6 Q403.9 620.1 403.9 621.6 Q403.9 623.1 403.9 624.6 Q404.0 626.2 404.1 627.7 Q404.2 629.2 404.4 630.7 L404.6 632.2" fill="none" stroke="#6e9a86" stroke-width="5.6" opacity="0.3" stroke-linecap="round"/><path d="M414.7 578.7 Q414.9 581.7 414.9 583.2 Q414.9 584.7 414.8 586.2 Q414.7 587.7 414.6 589.2 Q414.4 590.7 414.1 592.2 Q413.8 593.7 413.4 595.1 Q413.0 596.6 412.6 598.1 Q412.1 599.5 411.6 601.0 Q411.1 602.4 410.7 603.9 Q410.2 605.4 409.7 606.8 Q409.2 608.3 408.8 609.8 Q408.4 611.2 408.1 612.7 Q407.7 614.2 407.5 615.6 Q407.2 617.1 407.1 618.6 Q406.9 620.1 406.9 621.6 Q406.9 623.1 406.9 624.6 Q407.0 626.2 407.1 627.7 Q407.2 629.2 407.4 630.7 L407.6 632.2" fill="none" stroke="#bfe6d2" stroke-width="2.6" opacity="0.3" stroke-linecap="round"/><path d="M564.9 378.4 Q564.9 381.5 564.9 383.0 Q564.8 384.6 564.9 386.1 Q564.9 387.6 565.1 389.1 Q565.2 390.7 565.4 392.2 Q565.6 393.7 565.9 395.2 Q566.2 396.6 566.6 398.1 Q566.9 399.6 567.4 401.1 Q567.8 402.5 568.3 404.0 Q568.8 405.5 569.3 406.9 Q569.8 408.4 570.2 409.8 Q570.7 411.3 571.2 412.8 Q571.6 414.2 572.0 415.7 Q572.3 417.2 572.6 418.7 Q572.9 420.2 573.1 421.7 Q573.3 423.2 573.5 424.7 Q573.6 426.2 573.6 427.7 Q573.7 429.3 573.7 430.8 Q573.7 432.3 573.6 433.9 Q573.6 435.4 573.5 437.0 L573.5 438.5" fill="none" stroke="#6e9a86" stroke-width="3.3" opacity="0.3" stroke-linecap="round"/><path d="M567.9 378.4 Q567.9 381.5 567.9 383.0 Q567.8 384.6 567.9 386.1 Q567.9 387.6 568.1 389.1 Q568.2 390.7 568.4 392.2 Q568.6 393.7 568.9 395.2 Q569.2 396.6 569.6 398.1 Q569.9 399.6 570.4 401.1 Q570.8 402.5 571.3 404.0 Q571.8 405.5 572.3 406.9 Q572.8 408.4 573.2 409.8 Q573.7 411.3 574.2 412.8 Q574.6 414.2 575.0 415.7 Q575.3 417.2 575.6 418.7 Q575.9 420.2 576.1 421.7 Q576.3 423.2 576.5 424.7 Q576.6 426.2 576.6 427.7 Q576.7 429.3 576.7 430.8 Q576.7 432.3 576.6 433.9 Q576.6 435.4 576.5 437.0 L576.5 438.5" fill="none" stroke="#bfe6d2" stroke-width="2.6" opacity="0.3" stroke-linecap="round"/><path d="M392.4 477.1 Q391.2 479.9 390.5 481.3 Q389.9 482.6 389.2 484.0 Q388.5 485.3 387.8 486.7 Q387.0 488.0 386.3 489.4 Q385.6 490.8 384.9 492.1 Q384.2 493.5 383.5 494.9 Q382.9 496.3 382.3 497.7 Q381.7 499.1 381.2 500.5 Q380.7 501.9 380.3 503.4 Q379.9 504.9 379.6 506.3 Q379.3 507.8 379.2 509.3 Q379.0 510.8 378.9 512.4 Q378.8 513.9 378.8 515.4 Q378.8 516.9 378.9 518.5 Q378.9 520.0 379.0 521.6 Q379.1 523.1 379.1 524.6 Q379.2 526.2 379.3 527.7 Q379.3 529.2 379.3 530.7 Q379.3 532.2 379.2 533.7 Q379.1 535.2 378.9 536.7 Q378.7 538.2 378.5 539.6 L378.2 541.1" fill="none" stroke="#6e9a86" stroke-width="5.9" opacity="0.3" stroke-linecap="round"/><path d="M395.4 477.1 Q394.2 479.9 393.5 481.3 Q392.9 482.6 392.2 484.0 Q391.5 485.3 390.8 486.7 Q390.0 488.0 389.3 489.4 Q388.6 490.8 387.9 492.1 Q387.2 493.5 386.5 494.9 Q385.9 496.3 385.3 497.7 Q384.7 499.1 384.2 500.5 Q383.7 501.9 383.3 503.4 Q382.9 504.9 382.6 506.3 Q382.3 507.8 382.2 509.3 Q382.0 510.8 381.9 512.4 Q381.8 513.9 381.8 515.4 Q381.8 516.9 381.9 518.5 Q381.9 520.0 382.0 521.6 Q382.1 523.1 382.1 524.6 Q382.2 526.2 382.3 527.7 Q382.3 529.2 382.3 530.7 Q382.3 532.2 382.2 533.7 Q382.1 535.2 381.9 536.7 Q381.7 538.2 381.5 539.6 L381.2 541.1" fill="none" stroke="#bfe6d2" stroke-width="2.5" opacity="0.3" stroke-linecap="round"/><path d="M377.3 602.3 Q376.5 605.2 376.0 606.7 Q375.6 608.1 375.0 609.6 Q374.5 611.1 373.9 612.5 Q373.4 614.0 372.8 615.4 Q372.3 616.9 371.8 618.3 Q371.3 619.8 370.9 621.2 Q370.5 622.7 370.2 624.2 Q369.9 625.7 369.7 627.2 Q369.5 628.6 369.4 630.1 Q369.4 631.6 369.4 633.2 Q369.5 634.7 369.6 636.2 Q369.8 637.7 370.0 639.2 Q370.2 640.8 370.5 642.3 Q370.7 643.8 371.0 645.4 Q371.2 646.9 371.4 648.4 Q371.6 650.0 371.8 651.5 Q371.9 653.0 372.0 654.5 Q372.0 656.0 372.0 657.5 Q371.9 659.0 371.7 660.5 Q371.5 662.0 371.2 663.5 Q370.9 665.0 370.5 666.4 Q370.1 667.9 369.6 669.4 Q369.1 670.8 368.5 672.3 Q368.0 673.7 367.4 675.2 Q366.9 676.6 366.3 678.1 Q365.8 679.5 365.3 681.0 Q364.9 682.5 364.5 683.9 Q364.1 685.4 363.8 686.9 Q363.6 688.4 363.4 689.8 Q363.3 691.3 363.2 692.8 Q363.2 694.3 363.3 695.9 Q363.4 697.4 363.5 698.9 L363.7 700.4" fill="none" stroke="#6e9a86" stroke-width="4.3" opacity="0.3" stroke-linecap="round"/><path d="M380.3 602.3 Q379.5 605.2 379.0 606.7 Q378.6 608.1 378.0 609.6 Q377.5 611.1 376.9 612.5 Q376.4 614.0 375.8 615.4 Q375.3 616.9 374.8 618.3 Q374.3 619.8 373.9 621.2 Q373.5 622.7 373.2 624.2 Q372.9 625.7 372.7 627.2 Q372.5 628.6 372.4 630.1 Q372.4 631.6 372.4 633.2 Q372.5 634.7 372.6 636.2 Q372.8 637.7 373.0 639.2 Q373.2 640.8 373.5 642.3 Q373.7 643.8 374.0 645.4 Q374.2 646.9 374.4 648.4 Q374.6 650.0 374.8 651.5 Q374.9 653.0 375.0 654.5 Q375.0 656.0 375.0 657.5 Q374.9 659.0 374.7 660.5 Q374.5 662.0 374.2 663.5 Q373.9 665.0 373.5 666.4 Q373.1 667.9 372.6 669.4 Q372.1 670.8 371.5 672.3 Q371.0 673.7 370.4 675.2 Q369.9 676.6 369.3 678.1 Q368.8 679.5 368.3 681.0 Q367.9 682.5 367.5 683.9 Q367.1 685.4 366.8 686.9 Q366.6 688.4 366.4 689.8 Q366.3 691.3 366.2 692.8 Q366.2 694.3 366.3 695.9 Q366.4 697.4 366.5 698.9 L366.7 700.4" fill="none" stroke="#bfe6d2" stroke-width="2.1" opacity="0.3" stroke-linecap="round"/><path d="M387.1 513.3 Q387.4 516.5 387.5 518.0 Q387.7 519.6 387.9 521.1 Q388.0 522.7 388.2 524.2 Q388.3 525.8 388.4 527.3 Q388.5 528.8 388.5 530.3 Q388.4 531.8 388.3 533.3 Q388.2 534.8 387.9 536.2 Q387.6 537.7 387.3 539.2 Q386.9 540.6 386.4 542.0 Q385.9 543.5 385.3 544.9 Q384.7 546.4 384.1 547.8 Q383.5 549.2 382.9 550.7 Q382.3 552.1 381.7 553.6 Q381.1 555.0 380.5 556.5 Q380.0 557.9 379.6 559.4 Q379.2 560.9 378.9 562.3 Q378.6 563.8 378.4 565.3 Q378.3 566.8 378.3 568.3 L378.3 569.8" fill="none" stroke="#6e9a86" stroke-width="4.8" opacity="0.3" stroke-linecap="round"/><path d="M390.1 513.3 Q390.4 516.5 390.5 518.0 Q390.7 519.6 390.9 521.1 Q391.0 522.7 391.2 524.2 Q391.3 525.8 391.4 527.3 Q391.5 528.8 391.5 530.3 Q391.4 531.8 391.3 533.3 Q391.2 534.8 390.9 536.2 Q390.6 537.7 390.3 539.2 Q389.9 540.6 389.4 542.0 Q388.9 543.5 388.3 544.9 Q387.7 546.4 387.1 547.8 Q386.5 549.2 385.9 550.7 Q385.3 552.1 384.7 553.6 Q384.1 555.0 383.5 556.5 Q383.0 557.9 382.6 559.4 Q382.2 560.9 381.9 562.3 Q381.6 563.8 381.4 565.3 Q381.3 566.8 381.3 568.3 L381.3 569.8" fill="none" stroke="#bfe6d2" stroke-width="2.3" opacity="0.3" stroke-linecap="round"/><path d="M366.9 519.1 Q366.9 522.2 366.9 523.7 Q366.9 525.2 366.9 526.8 Q367.0 528.3 367.0 529.8 Q367.0 531.3 367.0 532.8 Q367.0 534.3 366.9 535.8 Q366.8 537.3 366.7 538.8 Q366.5 540.3 366.3 541.8 Q366.1 543.3 365.8 544.7 Q365.5 546.2 365.2 547.7 Q364.8 549.1 364.4 550.6 Q364.0 552.1 363.6 553.5 Q363.1 555.0 362.7 556.5 Q362.3 557.9 361.8 559.4 L361.4 560.8" fill="none" stroke="#6e9a86" stroke-width="4.7" opacity="0.3" stroke-linecap="round"/><path d="M369.9 519.1 Q369.9 522.2 369.9 523.7 Q369.9 525.2 369.9 526.8 Q370.0 528.3 370.0 529.8 Q370.0 531.3 370.0 532.8 Q370.0 534.3 369.9 535.8 Q369.8 537.3 369.7 538.8 Q369.5 540.3 369.3 541.8 Q369.1 543.3 368.8 544.7 Q368.5 546.2 368.2 547.7 Q367.8 549.1 367.4 550.6 Q367.0 552.1 366.6 553.5 Q366.1 555.0 365.7 556.5 Q365.3 557.9 364.8 559.4 L364.4 560.8" fill="none" stroke="#bfe6d2" stroke-width="2.9" opacity="0.3" stroke-linecap="round"/><path d="M612.5 333.5 Q613.6 336.4 614.2 337.8 Q614.7 339.3 615.2 340.7 Q615.6 342.2 616.0 343.7 Q616.4 345.1 616.7 346.6 Q617.0 348.1 617.2 349.6 Q617.4 351.1 617.5 352.7 Q617.5 354.2 617.5 355.7 Q617.5 357.3 617.5 358.8 Q617.4 360.3 617.3 361.9 Q617.2 363.4 617.1 365.0 Q617.0 366.5 616.9 368.1 Q616.8 369.6 616.8 371.2 L616.9 372.7" fill="none" stroke="#6e9a86" stroke-width="4.3" opacity="0.3" stroke-linecap="round"/><path d="M615.5 333.5 Q616.6 336.4 617.2 337.8 Q617.7 339.3 618.2 340.7 Q618.6 342.2 619.0 343.7 Q619.4 345.1 619.7 346.6 Q620.0 348.1 620.2 349.6 Q620.4 351.1 620.5 352.7 Q620.5 354.2 620.5 355.7 Q620.5 357.3 620.5 358.8 Q620.4 360.3 620.3 361.9 Q620.2 363.4 620.1 365.0 Q620.0 366.5 619.9 368.1 Q619.8 369.6 619.8 371.2 L619.9 372.7" fill="none" stroke="#bfe6d2" stroke-width="2.1" opacity="0.3" stroke-linecap="round"/><path d="M498.9 307.4 Q497.1 309.9 496.1 311.1 Q495.2 312.3 494.3 313.5 Q493.4 314.7 492.5 315.9 Q491.6 317.1 490.7 318.3 Q489.8 319.5 488.8 320.7 Q487.9 321.9 486.9 323.0 Q486.0 324.2 485.0 325.3 Q484.1 326.5 483.1 327.6 Q482.1 328.7 481.1 329.8 Q480.1 330.9 479.0 331.9 Q478.0 333.0 476.9 334.0 Q475.8 335.1 474.7 336.1 Q473.6 337.1 472.5 338.1 Q471.4 339.1 470.2 340.1 Q469.1 341.1 467.9 342.0 Q466.8 343.0 465.6 344.0 Q464.4 344.9 463.2 345.9 Q462.0 346.8 460.8 347.8 Q459.6 348.7 458.4 349.7 Q457.3 350.7 456.1 351.7 L454.9 352.6" fill="none" stroke="#6e9a86" stroke-width="5.9" opacity="0.3" stroke-linecap="round"/><path d="M501.9 307.4 Q500.1 309.9 499.1 311.1 Q498.2 312.3 497.3 313.5 Q496.4 314.7 495.5 315.9 Q494.6 317.1 493.7 318.3 Q492.8 319.5 491.8 320.7 Q490.9 321.9 489.9 323.0 Q489.0 324.2 488.0 325.3 Q487.1 326.5 486.1 327.6 Q485.1 328.7 484.1 329.8 Q483.1 330.9 482.0 331.9 Q481.0 333.0 479.9 334.0 Q478.8 335.1 477.7 336.1 Q476.6 337.1 475.5 338.1 Q474.4 339.1 473.2 340.1 Q472.1 341.1 470.9 342.0 Q469.8 343.0 468.6 344.0 Q467.4 344.9 466.2 345.9 Q465.0 346.8 463.8 347.8 Q462.6 348.7 461.4 349.7 Q460.3 350.7 459.1 351.7 L457.9 352.6" fill="none" stroke="#bfe6d2" stroke-width="2.7" opacity="0.3" stroke-linecap="round"/><path d="M470.1 523.1 Q468.6 525.9 467.8 527.3 Q467.1 528.7 466.4 530.1 Q465.7 531.6 465.1 533.0 Q464.5 534.4 464.0 535.9 Q463.6 537.4 463.3 538.9 Q462.9 540.3 462.8 541.8 Q462.7 543.4 462.7 544.9 Q462.7 546.4 462.9 547.9 Q463.0 549.5 463.3 551.0 Q463.6 552.6 464.0 554.1 Q464.3 555.6 464.7 557.2 Q465.1 558.7 465.4 560.3 Q465.8 561.8 466.1 563.3 Q466.3 564.9 466.5 566.4 Q466.7 567.9 466.7 569.4 Q466.7 570.9 466.6 572.4 Q466.4 573.9 466.1 575.4 Q465.8 576.9 465.4 578.4 Q465.0 579.8 464.4 581.3 L463.8 582.7" fill="none" stroke="#6e9a86" stroke-width="3.2" opacity="0.3" stroke-linecap="round"/><path d="M473.1 523.1 Q471.6 525.9 470.8 527.3 Q470.1 528.7 469.4 530.1 Q468.7 531.6 468.1 533.0 Q467.5 534.4 467.0 535.9 Q466.6 537.4 466.3 538.9 Q465.9 540.3 465.8 541.8 Q465.7 543.4 465.7 544.9 Q465.7 546.4 465.9 547.9 Q466.0 549.5 466.3 551.0 Q466.6 552.6 467.0 554.1 Q467.3 555.6 467.7 557.2 Q468.1 558.7 468.4 560.3 Q468.8 561.8 469.1 563.3 Q469.3 564.9 469.5 566.4 Q469.7 567.9 469.7 569.4 Q469.7 570.9 469.6 572.4 Q469.4 573.9 469.1 575.4 Q468.8 576.9 468.4 578.4 Q468.0 579.8 467.4 581.3 L466.8 582.7" fill="none" stroke="#bfe6d2" stroke-width="2.5" opacity="0.3" stroke-linecap="round"/><path d="M425.7 506.6 Q425.9 509.7 426.1 511.2 Q426.2 512.8 426.3 514.3 Q426.4 515.9 426.4 517.4 Q426.4 518.9 426.3 520.4 Q426.2 521.9 426.0 523.4 Q425.8 524.8 425.4 526.3 Q425.1 527.7 424.6 529.2 Q424.2 530.6 423.6 532.0 Q423.1 533.5 422.4 534.9 Q421.8 536.3 421.1 537.7 Q420.5 539.1 419.8 540.6 Q419.1 542.0 418.5 543.4 Q417.9 544.9 417.3 546.3 Q416.8 547.8 416.4 549.3 Q416.0 550.7 415.7 552.2 Q415.4 553.7 415.3 555.2 Q415.1 556.7 415.2 558.2 Q415.2 559.7 415.3 561.2 Q415.5 562.8 415.7 564.3 Q416.0 565.8 416.3 567.4 Q416.6 568.9 416.9 570.4 Q417.3 572.0 417.6 573.5 Q417.9 575.1 418.2 576.6 Q418.4 578.1 418.6 579.7 Q418.7 581.2 418.8 582.7 Q418.8 584.2 418.7 585.7 Q418.5 587.2 418.3 588.7 Q418.0 590.1 417.6 591.6 Q417.2 593.1 416.7 594.5 Q416.2 596.0 415.6 597.4 Q415.0 598.9 414.3 600.3 Q413.7 601.8 413.1 603.2 Q412.5 604.7 411.9 606.1 L411.3 607.6" fill="none" stroke="#6e9a86" stroke-width="4.3" opacity="0.3" stroke-linecap="round"/><path d="M428.7 506.6 Q428.9 509.7 429.1 511.2 Q429.2 512.8 429.3 514.3 Q429.4 515.9 429.4 517.4 Q429.4 518.9 429.3 520.4 Q429.2 521.9 429.0 523.4 Q428.8 524.8 428.4 526.3 Q428.1 527.7 427.6 529.2 Q427.2 530.6 426.6 532.0 Q426.1 533.5 425.4 534.9 Q424.8 536.3 424.1 537.7 Q423.5 539.1 422.8 540.6 Q422.1 542.0 421.5 543.4 Q420.9 544.9 420.3 546.3 Q419.8 547.8 419.4 549.3 Q419.0 550.7 418.7 552.2 Q418.4 553.7 418.3 555.2 Q418.1 556.7 418.2 558.2 Q418.2 559.7 418.3 561.2 Q418.5 562.8 418.7 564.3 Q419.0 565.8 419.3 567.4 Q419.6 568.9 419.9 570.4 Q420.3 572.0 420.6 573.5 Q420.9 575.1 421.2 576.6 Q421.4 578.1 421.6 579.7 Q421.7 581.2 421.8 582.7 Q421.8 584.2 421.7 585.7 Q421.5 587.2 421.3 588.7 Q421.0 590.1 420.6 591.6 Q420.2 593.1 419.7 594.5 Q419.2 596.0 418.6 597.4 Q418.0 598.9 417.3 600.3 Q416.7 601.8 416.1 603.2 Q415.5 604.7 414.9 606.1 L414.3 607.6" fill="none" stroke="#bfe6d2" stroke-width="2.8" opacity="0.3" stroke-linecap="round"/><path d="M339.6 491.0 Q338.5 493.8 337.9 495.2 Q337.3 496.6 336.6 497.9 Q335.9 499.3 335.1 500.7 Q334.3 502.0 333.6 503.4 Q332.8 504.7 332.0 506.1 Q331.2 507.4 330.5 508.8 Q329.7 510.2 329.1 511.6 Q328.4 513.0 327.9 514.5 Q327.3 515.9 326.9 517.4 Q326.5 518.8 326.3 520.3 Q326.0 521.8 325.9 523.3 Q325.8 524.8 325.8 526.4 Q325.8 527.9 326.0 529.4 Q326.1 531.0 326.3 532.5 Q326.5 534.1 326.8 535.7 Q327.1 537.2 327.3 538.7 Q327.6 540.3 327.8 541.8 Q328.1 543.4 328.2 544.9 Q328.4 546.4 328.4 547.9 Q328.5 549.4 328.4 550.9 Q328.3 552.4 328.1 553.9 Q327.8 555.4 327.4 556.8 Q327.1 558.3 326.6 559.8 Q326.1 561.2 325.5 562.7 Q324.9 564.1 324.3 565.6 Q323.7 567.0 323.0 568.4 Q322.4 569.9 321.8 571.3 Q321.2 572.8 320.7 574.2 Q320.2 575.7 319.8 577.2 Q319.4 578.6 319.1 580.1 Q318.8 581.6 318.7 583.1 Q318.6 584.6 318.6 586.1 Q318.6 587.6 318.8 589.1 Q319.0 590.6 319.2 592.2 Q319.5 593.7 319.8 595.3 L320.1 596.8" fill="none" stroke="#6e9a86" stroke-width="5.2" opacity="0.3" stroke-linecap="round"/><path d="M342.6 491.0 Q341.5 493.8 340.9 495.2 Q340.3 496.6 339.6 497.9 Q338.9 499.3 338.1 500.7 Q337.3 502.0 336.6 503.4 Q335.8 504.7 335.0 506.1 Q334.2 507.4 333.5 508.8 Q332.7 510.2 332.1 511.6 Q331.4 513.0 330.9 514.5 Q330.3 515.9 329.9 517.4 Q329.5 518.8 329.3 520.3 Q329.0 521.8 328.9 523.3 Q328.8 524.8 328.8 526.4 Q328.8 527.9 329.0 529.4 Q329.1 531.0 329.3 532.5 Q329.5 534.1 329.8 535.7 Q330.1 537.2 330.3 538.7 Q330.6 540.3 330.8 541.8 Q331.1 543.4 331.2 544.9 Q331.4 546.4 331.4 547.9 Q331.5 549.4 331.4 550.9 Q331.3 552.4 331.1 553.9 Q330.8 555.4 330.4 556.8 Q330.1 558.3 329.6 559.8 Q329.1 561.2 328.5 562.7 Q327.9 564.1 327.3 565.6 Q326.7 567.0 326.0 568.4 Q325.4 569.9 324.8 571.3 Q324.2 572.8 323.7 574.2 Q323.2 575.7 322.8 577.2 Q322.4 578.6 322.1 580.1 Q321.8 581.6 321.7 583.1 Q321.6 584.6 321.6 586.1 Q321.6 587.6 321.8 589.1 Q322.0 590.6 322.2 592.2 Q322.5 593.7 322.8 595.3 L323.1 596.8" fill="none" stroke="#bfe6d2" stroke-width="2.4" opacity="0.3" stroke-linecap="round"/><path d="M456.1 561.9 Q456.6 565.0 456.8 566.5 Q457.0 568.0 457.1 569.5 Q457.2 571.0 457.2 572.5 Q457.1 574.1 457.0 575.5 Q456.8 577.0 456.5 578.5 Q456.2 580.0 455.8 581.5 Q455.4 582.9 454.9 584.4 Q454.3 585.8 453.8 587.3 Q453.2 588.7 452.6 590.2 Q452.0 591.6 451.4 593.1 Q450.8 594.5 450.3 596.0 Q449.8 597.4 449.3 598.9 Q448.9 600.4 448.6 601.8 Q448.3 603.3 448.1 604.8 L447.9 606.3" fill="none" stroke="#6e9a86" stroke-width="3.1" opacity="0.3" stroke-linecap="round"/><path d="M459.1 561.9 Q459.6 565.0 459.8 566.5 Q460.0 568.0 460.1 569.5 Q460.2 571.0 460.2 572.5 Q460.1 574.1 460.0 575.5 Q459.8 577.0 459.5 578.5 Q459.2 580.0 458.8 581.5 Q458.4 582.9 457.9 584.4 Q457.3 585.8 456.8 587.3 Q456.2 588.7 455.6 590.2 Q455.0 591.6 454.4 593.1 Q453.8 594.5 453.3 596.0 Q452.8 597.4 452.3 598.9 Q451.9 600.4 451.6 601.8 Q451.3 603.3 451.1 604.8 L450.9 606.3" fill="none" stroke="#bfe6d2" stroke-width="2.6" opacity="0.3" stroke-linecap="round"/><path d="M469.3 343.4 Q467.0 345.3 465.8 346.3 Q464.7 347.3 463.6 348.4 Q462.4 349.4 461.3 350.4 Q460.2 351.4 459.1 352.5 Q458.0 353.5 456.9 354.6 Q455.8 355.6 454.8 356.7 Q453.7 357.8 452.7 358.9 Q451.7 360.1 450.7 361.2 Q449.8 362.4 448.8 363.6 Q447.9 364.8 447.0 366.0 Q446.2 367.2 445.3 368.5 Q444.5 369.7 443.7 371.0 Q442.9 372.3 442.2 373.7 Q441.5 375.0 440.8 376.3 Q440.1 377.7 439.4 379.1 Q438.8 380.4 438.1 381.8 Q437.5 383.2 436.9 384.6 Q436.3 386.0 435.7 387.4 Q435.1 388.8 434.5 390.2 Q433.9 391.6 433.2 392.9 Q432.6 394.3 432.0 395.7 Q431.4 397.0 430.7 398.4 Q430.0 399.7 429.3 401.0 Q428.6 402.4 427.9 403.7 Q427.2 404.9 426.4 406.2 Q425.6 407.5 424.7 408.7 Q423.9 410.0 423.0 411.2 Q422.2 412.4 421.3 413.6 L420.4 414.8" fill="none" stroke="#6e9a86" stroke-width="4.8" opacity="0.3" stroke-linecap="round"/><path d="M472.3 343.4 Q470.0 345.3 468.8 346.3 Q467.7 347.3 466.6 348.4 Q465.4 349.4 464.3 350.4 Q463.2 351.4 462.1 352.5 Q461.0 353.5 459.9 354.6 Q458.8 355.6 457.8 356.7 Q456.7 357.8 455.7 358.9 Q454.7 360.1 453.7 361.2 Q452.8 362.4 451.8 363.6 Q450.9 364.8 450.0 366.0 Q449.2 367.2 448.3 368.5 Q447.5 369.7 446.7 371.0 Q445.9 372.3 445.2 373.7 Q444.5 375.0 443.8 376.3 Q443.1 377.7 442.4 379.1 Q441.8 380.4 441.1 381.8 Q440.5 383.2 439.9 384.6 Q439.3 386.0 438.7 387.4 Q438.1 388.8 437.5 390.2 Q436.9 391.6 436.2 392.9 Q435.6 394.3 435.0 395.7 Q434.4 397.0 433.7 398.4 Q433.0 399.7 432.3 401.0 Q431.6 402.4 430.9 403.7 Q430.2 404.9 429.4 406.2 Q428.6 407.5 427.7 408.7 Q426.9 410.0 426.0 411.2 Q425.2 412.4 424.3 413.6 L423.4 414.8" fill="none" stroke="#bfe6d2" stroke-width="2.9" opacity="0.3" stroke-linecap="round"/><path d="M407.9 503.8 Q407.6 506.8 407.5 508.3 Q407.4 509.9 407.4 511.4 Q407.3 512.9 407.3 514.4 Q407.3 515.9 407.2 517.5 Q407.2 519.0 407.1 520.5 Q407.0 522.0 406.9 523.5 Q406.8 525.0 406.6 526.5 Q406.5 528.0 406.2 529.4 Q406.0 530.9 405.7 532.4 Q405.4 533.8 405.0 535.3 Q404.7 536.7 404.2 538.2 Q403.8 539.7 403.4 541.1 Q402.9 542.6 402.5 544.0 Q402.0 545.5 401.6 546.9 Q401.2 548.4 400.8 549.9 Q400.4 551.3 400.0 552.8 Q399.7 554.3 399.4 555.8 L399.2 557.2" fill="none" stroke="#6e9a86" stroke-width="5.7" opacity="0.3" stroke-linecap="round"/><path d="M410.9 503.8 Q410.6 506.8 410.5 508.3 Q410.4 509.9 410.4 511.4 Q410.3 512.9 410.3 514.4 Q410.3 515.9 410.2 517.5 Q410.2 519.0 410.1 520.5 Q410.0 522.0 409.9 523.5 Q409.8 525.0 409.6 526.5 Q409.5 528.0 409.2 529.4 Q409.0 530.9 408.7 532.4 Q408.4 533.8 408.0 535.3 Q407.7 536.7 407.2 538.2 Q406.8 539.7 406.4 541.1 Q405.9 542.6 405.5 544.0 Q405.0 545.5 404.6 546.9 Q404.2 548.4 403.8 549.9 Q403.4 551.3 403.0 552.8 Q402.7 554.3 402.4 555.8 L402.2 557.2" fill="none" stroke="#bfe6d2" stroke-width="2.7" opacity="0.3" stroke-linecap="round"/><path d="M415.8 499.2 Q415.5 502.2 415.4 503.8 Q415.3 505.3 415.3 506.8 Q415.3 508.4 415.3 509.9 Q415.3 511.4 415.3 513.0 Q415.4 514.5 415.4 516.0 Q415.4 517.6 415.3 519.1 Q415.3 520.6 415.2 522.1 Q415.1 523.6 414.9 525.1 Q414.7 526.5 414.5 528.0 Q414.2 529.5 413.8 530.9 Q413.5 532.4 413.1 533.8 Q412.6 535.3 412.1 536.7 Q411.6 538.2 411.1 539.6 Q410.6 541.0 410.0 542.5 Q409.5 543.9 409.0 545.4 Q408.5 546.8 408.0 548.3 L407.6 549.8" fill="none" stroke="#6e9a86" stroke-width="5.4" opacity="0.3" stroke-linecap="round"/><path d="M418.8 499.2 Q418.5 502.2 418.4 503.8 Q418.3 505.3 418.3 506.8 Q418.3 508.4 418.3 509.9 Q418.3 511.4 418.3 513.0 Q418.4 514.5 418.4 516.0 Q418.4 517.6 418.3 519.1 Q418.3 520.6 418.2 522.1 Q418.1 523.6 417.9 525.1 Q417.7 526.5 417.5 528.0 Q417.2 529.5 416.8 530.9 Q416.5 532.4 416.1 533.8 Q415.6 535.3 415.1 536.7 Q414.6 538.2 414.1 539.6 Q413.6 541.0 413.0 542.5 Q412.5 543.9 412.0 545.4 Q411.5 546.8 411.0 548.3 L410.6 549.8" fill="none" stroke="#bfe6d2" stroke-width="2.9" opacity="0.3" stroke-linecap="round"/><path d="M600.6 398.4 Q601.7 401.3 602.2 402.7 Q602.8 404.2 603.2 405.7 Q603.7 407.1 604.0 408.6 Q604.4 410.1 604.6 411.6 Q604.9 413.1 605.0 414.6 Q605.1 416.1 605.1 417.6 Q605.2 419.2 605.1 420.7 Q605.1 422.2 605.0 423.8 Q604.9 425.3 604.7 426.9 Q604.6 428.4 604.5 430.0 Q604.4 431.5 604.4 433.1 Q604.3 434.6 604.3 436.2 Q604.4 437.7 604.5 439.2 Q604.7 440.7 604.9 442.2 Q605.2 443.7 605.5 445.2 Q605.9 446.7 606.4 448.1 Q606.8 449.6 607.3 451.0 Q607.9 452.5 608.4 453.9 Q609.0 455.4 609.6 456.8 Q610.1 458.3 610.6 460.1 Q611.1 461.8 610.8 463.3 Q610.5 464.8 610.1 466.2 Q609.8 467.7 609.3 469.1 Q608.9 470.5 608.5 472.0 Q608.0 473.4 607.4 474.8 L606.9 476.2" fill="none" stroke="#6e9a86" stroke-width="3.4" opacity="0.3" stroke-linecap="round"/><path d="M603.6 398.4 Q604.7 401.3 605.2 402.7 Q605.8 404.2 606.2 405.7 Q606.7 407.1 607.0 408.6 Q607.4 410.1 607.6 411.6 Q607.9 413.1 608.0 414.6 Q608.1 416.1 608.1 417.6 Q608.2 419.2 608.1 420.7 Q608.1 422.2 608.0 423.8 Q607.9 425.3 607.7 426.9 Q607.6 428.4 607.5 430.0 Q607.4 431.5 607.4 433.1 Q607.3 434.6 607.3 436.2 Q607.4 437.7 607.5 439.2 Q607.7 440.7 607.9 442.2 Q608.2 443.7 608.5 445.2 Q608.9 446.7 609.4 448.1 Q609.8 449.6 610.3 451.0 Q610.9 452.5 611.4 453.9 Q612.0 455.4 612.6 456.8 Q613.1 458.3 613.6 460.1 Q614.1 461.8 613.8 463.3 Q613.5 464.8 613.1 466.2 Q612.8 467.7 612.3 469.1 Q611.9 470.5 611.5 472.0 Q611.0 473.4 610.4 474.8 L609.9 476.2" fill="none" stroke="#bfe6d2" stroke-width="2.5" opacity="0.3" stroke-linecap="round"/><path d="M457.1 357.8 Q455.1 360.1 454.1 361.2 Q453.2 362.4 452.3 363.6 Q451.4 364.8 450.5 366.1 Q449.7 367.3 448.8 368.6 Q448.0 369.8 447.3 371.1 Q446.5 372.4 445.8 373.8 Q445.0 375.1 444.3 376.4 Q443.6 377.8 443.0 379.2 Q442.3 380.5 441.7 381.9 Q441.0 383.3 440.4 384.7 Q439.8 386.0 439.1 387.4 Q438.5 388.8 437.9 390.2 Q437.3 391.6 436.6 392.9 Q436.0 394.3 435.3 395.6 Q434.7 397.0 434.0 398.3 Q433.3 399.6 432.6 400.9 Q431.8 402.2 431.1 403.5 L430.3 404.8" fill="none" stroke="#6e9a86" stroke-width="4.9" opacity="0.3" stroke-linecap="round"/><path d="M460.1 357.8 Q458.1 360.1 457.1 361.2 Q456.2 362.4 455.3 363.6 Q454.4 364.8 453.5 366.1 Q452.7 367.3 451.8 368.6 Q451.0 369.8 450.3 371.1 Q449.5 372.4 448.8 373.8 Q448.0 375.1 447.3 376.4 Q446.6 377.8 446.0 379.2 Q445.3 380.5 444.7 381.9 Q444.0 383.3 443.4 384.7 Q442.8 386.0 442.1 387.4 Q441.5 388.8 440.9 390.2 Q440.3 391.6 439.6 392.9 Q439.0 394.3 438.3 395.6 Q437.7 397.0 437.0 398.3 Q436.3 399.6 435.6 400.9 Q434.8 402.2 434.1 403.5 L433.3 404.8" fill="none" stroke="#bfe6d2" stroke-width="2.5" opacity="0.3" stroke-linecap="round"/><path d="M412.1 561.9 Q412.3 564.9 412.5 566.4 Q412.6 568.0 412.8 569.5 Q413.0 571.0 413.2 572.6 Q413.5 574.1 413.6 575.6 Q413.8 577.1 413.9 578.7 Q414.1 580.2 414.1 581.7 Q414.2 583.2 414.1 584.7 Q414.1 586.2 413.9 587.7 Q413.7 589.2 413.5 590.7 Q413.2 592.1 412.8 593.6 Q412.5 595.1 412.0 596.5 Q411.6 598.0 411.1 599.5 Q410.6 600.9 410.1 602.4 Q409.6 603.8 409.1 605.3 Q408.6 606.8 408.1 608.2 Q407.7 609.7 407.3 611.2 Q406.9 612.6 406.6 614.1 Q406.4 615.6 406.2 617.1 Q406.0 618.6 406.0 620.1 Q405.9 621.6 405.9 623.1 Q406.0 624.6 406.1 626.1 Q406.2 627.6 406.4 629.2 Q406.6 630.7 406.8 632.2 Q407.0 633.7 407.2 635.3 Q407.4 636.8 407.6 638.3 Q407.7 639.8 407.8 641.4 Q407.9 642.9 408.0 644.4 Q408.0 645.9 407.9 647.4 Q407.8 648.9 407.6 650.4 Q407.4 651.9 407.1 653.3 Q406.8 654.8 406.4 656.3 Q406.0 657.8 405.6 659.2 Q405.1 660.7 404.6 662.1 Q404.1 663.6 403.6 665.1 Q403.1 666.5 402.6 668.0 L402.1 669.4" fill="none" stroke="#6e9a86" stroke-width="3.2" opacity="0.3" stroke-linecap="round"/><path d="M415.1 561.9 Q415.3 564.9 415.5 566.4 Q415.6 568.0 415.8 569.5 Q416.0 571.0 416.2 572.6 Q416.5 574.1 416.6 575.6 Q416.8 577.1 416.9 578.7 Q417.1 580.2 417.1 581.7 Q417.2 583.2 417.1 584.7 Q417.1 586.2 416.9 587.7 Q416.7 589.2 416.5 590.7 Q416.2 592.1 415.8 593.6 Q415.5 595.1 415.0 596.5 Q414.6 598.0 414.1 599.5 Q413.6 600.9 413.1 602.4 Q412.6 603.8 412.1 605.3 Q411.6 606.8 411.1 608.2 Q410.7 609.7 410.3 611.2 Q409.9 612.6 409.6 614.1 Q409.4 615.6 409.2 617.1 Q409.0 618.6 409.0 620.1 Q408.9 621.6 408.9 623.1 Q409.0 624.6 409.1 626.1 Q409.2 627.6 409.4 629.2 Q409.6 630.7 409.8 632.2 Q410.0 633.7 410.2 635.3 Q410.4 636.8 410.6 638.3 Q410.7 639.8 410.8 641.4 Q410.9 642.9 411.0 644.4 Q411.0 645.9 410.9 647.4 Q410.8 648.9 410.6 650.4 Q410.4 651.9 410.1 653.3 Q409.8 654.8 409.4 656.3 Q409.0 657.8 408.6 659.2 Q408.1 660.7 407.6 662.1 Q407.1 663.6 406.6 665.1 Q406.1 666.5 405.6 668.0 L405.1 669.4" fill="none" stroke="#bfe6d2" stroke-width="2.0" opacity="0.3" stroke-linecap="round"/><path d="M411.4 544.9 Q410.6 547.8 410.3 549.3 Q409.9 550.8 409.7 552.2 Q409.4 553.7 409.2 555.2 Q409.0 556.7 408.8 558.2 Q408.7 559.7 408.7 561.2 Q408.6 562.7 408.7 564.2 Q408.7 565.7 408.8 567.2 Q408.8 568.8 409.0 570.3 Q409.1 571.8 409.2 573.3 Q409.3 574.8 409.4 576.3 Q409.5 577.9 409.6 579.4 Q409.6 580.9 409.6 582.4 L409.6 583.9" fill="none" stroke="#6e9a86" stroke-width="4.4" opacity="0.3" stroke-linecap="round"/><path d="M414.4 544.9 Q413.6 547.8 413.3 549.3 Q412.9 550.8 412.7 552.2 Q412.4 553.7 412.2 555.2 Q412.0 556.7 411.8 558.2 Q411.7 559.7 411.7 561.2 Q411.6 562.7 411.7 564.2 Q411.7 565.7 411.8 567.2 Q411.8 568.8 412.0 570.3 Q412.1 571.8 412.2 573.3 Q412.3 574.8 412.4 576.3 Q412.5 577.9 412.6 579.4 Q412.6 580.9 412.6 582.4 L412.6 583.9" fill="none" stroke="#bfe6d2" stroke-width="2.0" opacity="0.3" stroke-linecap="round"/><path d="M584.2 345.4 Q585.2 348.3 585.6 349.8 Q586.0 351.3 586.3 352.8 Q586.7 354.2 586.9 355.7 Q587.2 357.2 587.4 358.7 Q587.5 360.2 587.6 361.8 Q587.7 363.3 587.8 364.8 Q587.8 366.3 587.8 367.9 Q587.8 369.4 587.7 371.0 Q587.7 372.5 587.7 374.0 Q587.6 375.6 587.7 377.1 Q587.7 378.6 587.7 380.2 Q587.8 381.7 587.9 383.2 Q588.1 384.7 588.3 386.2 Q588.5 387.7 588.8 389.2 Q589.1 390.7 589.5 392.2 L589.9 393.6" fill="none" stroke="#6e9a86" stroke-width="4.9" opacity="0.3" stroke-linecap="round"/><path d="M587.2 345.4 Q588.2 348.3 588.6 349.8 Q589.0 351.3 589.3 352.8 Q589.7 354.2 589.9 355.7 Q590.2 357.2 590.4 358.7 Q590.5 360.2 590.6 361.8 Q590.7 363.3 590.8 364.8 Q590.8 366.3 590.8 367.9 Q590.8 369.4 590.7 371.0 Q590.7 372.5 590.7 374.0 Q590.6 375.6 590.7 377.1 Q590.7 378.6 590.7 380.2 Q590.8 381.7 590.9 383.2 Q591.1 384.7 591.3 386.2 Q591.5 387.7 591.8 389.2 Q592.1 390.7 592.5 392.2 L592.9 393.6" fill="none" stroke="#bfe6d2" stroke-width="2.4" opacity="0.3" stroke-linecap="round"/><path d="M468.1 325.6 Q466.2 327.9 465.3 329.1 Q464.3 330.2 463.3 331.4 Q462.4 332.5 461.4 333.6 Q460.4 334.7 459.4 335.8 Q458.4 336.9 457.4 338.0 Q456.3 339.1 455.3 340.2 Q454.2 341.2 453.2 342.3 Q452.1 343.3 451.0 344.4 Q449.9 345.4 448.8 346.4 Q447.7 347.5 446.6 348.5 Q445.5 349.5 444.4 350.5 Q443.3 351.5 442.1 352.5 L441.0 353.6" fill="none" stroke="#6e9a86" stroke-width="5.1" opacity="0.3" stroke-linecap="round"/><path d="M471.1 325.6 Q469.2 327.9 468.3 329.1 Q467.3 330.2 466.3 331.4 Q465.4 332.5 464.4 333.6 Q463.4 334.7 462.4 335.8 Q461.4 336.9 460.4 338.0 Q459.3 339.1 458.3 340.2 Q457.2 341.2 456.2 342.3 Q455.1 343.3 454.0 344.4 Q452.9 345.4 451.8 346.4 Q450.7 347.5 449.6 348.5 Q448.5 349.5 447.4 350.5 Q446.3 351.5 445.1 352.5 L444.0 353.6" fill="none" stroke="#bfe6d2" stroke-width="2.2" opacity="0.3" stroke-linecap="round"/><path d="M397.9 383.2 Q396.5 385.9 395.8 387.2 Q395.2 388.6 394.5 390.0 Q393.9 391.4 393.3 392.8 Q392.8 394.2 392.2 395.6 Q391.6 397.0 391.1 398.4 Q390.6 399.9 390.0 401.3 Q389.5 402.7 389.0 404.1 Q388.4 405.6 387.9 407.0 Q387.3 408.4 386.7 409.7 Q386.2 411.1 385.5 412.5 Q384.9 413.8 384.2 415.2 Q383.6 416.5 382.8 417.8 Q382.1 419.1 381.4 420.4 Q380.6 421.7 379.8 422.9 Q378.9 424.2 378.1 425.4 Q377.2 426.7 376.3 427.9 Q375.4 429.1 374.5 430.3 Q373.6 431.5 372.7 432.8 Q371.8 434.0 370.8 435.2 Q369.9 436.5 369.1 437.7 Q368.2 439.0 367.3 440.3 Q366.5 441.5 365.7 442.8 Q365.0 444.2 364.3 445.5 Q363.6 446.8 363.0 448.2 Q362.3 449.6 361.8 451.0 Q361.3 452.4 360.9 453.9 Q360.4 455.3 360.1 456.8 Q359.7 458.3 359.4 459.8 L359.2 461.3" fill="none" stroke="#6e9a86" stroke-width="4.8" opacity="0.3" stroke-linecap="round"/><path d="M400.9 383.2 Q399.5 385.9 398.8 387.2 Q398.2 388.6 397.5 390.0 Q396.9 391.4 396.3 392.8 Q395.8 394.2 395.2 395.6 Q394.6 397.0 394.1 398.4 Q393.6 399.9 393.0 401.3 Q392.5 402.7 392.0 404.1 Q391.4 405.6 390.9 407.0 Q390.3 408.4 389.7 409.7 Q389.2 411.1 388.5 412.5 Q387.9 413.8 387.2 415.2 Q386.6 416.5 385.8 417.8 Q385.1 419.1 384.4 420.4 Q383.6 421.7 382.8 422.9 Q381.9 424.2 381.1 425.4 Q380.2 426.7 379.3 427.9 Q378.4 429.1 377.5 430.3 Q376.6 431.5 375.7 432.8 Q374.8 434.0 373.8 435.2 Q372.9 436.5 372.1 437.7 Q371.2 439.0 370.3 440.3 Q369.5 441.5 368.7 442.8 Q368.0 444.2 367.3 445.5 Q366.6 446.8 366.0 448.2 Q365.3 449.6 364.8 451.0 Q364.3 452.4 363.9 453.9 Q363.4 455.3 363.1 456.8 Q362.7 458.3 362.4 459.8 L362.2 461.3" fill="none" stroke="#bfe6d2" stroke-width="2.8" opacity="0.3" stroke-linecap="round"/><path d="M438.3 544.9 Q437.9 547.9 437.7 549.4 Q437.6 550.9 437.5 552.4 Q437.5 553.9 437.5 555.4 Q437.5 556.9 437.5 558.4 Q437.6 559.9 437.7 561.5 Q437.8 563.0 437.9 564.5 Q438.0 566.0 438.0 567.5 Q438.1 569.0 438.2 570.6 Q438.3 572.1 438.3 573.6 Q438.3 575.1 438.2 576.6 Q438.2 578.1 438.0 579.6 Q437.9 581.1 437.7 582.6 Q437.5 584.1 437.2 585.5 Q436.9 587.0 436.6 588.5 Q436.2 590.0 435.8 591.4 Q435.5 592.9 435.1 594.4 Q434.7 595.8 434.3 597.3 Q433.9 598.8 433.5 600.2 Q433.1 601.7 432.8 603.2 Q432.5 604.7 432.2 606.1 Q432.0 607.6 431.8 609.1 Q431.6 610.6 431.5 612.1 Q431.3 613.6 431.3 615.1 Q431.3 616.6 431.3 618.1 Q431.3 619.6 431.4 621.1 Q431.4 622.6 431.5 624.2 Q431.6 625.7 431.7 627.2 Q431.8 628.7 431.9 630.2 Q432.0 631.7 432.1 633.3 Q432.1 634.8 432.1 636.3 Q432.1 637.8 432.0 639.3 Q431.9 640.8 431.8 642.3 Q431.6 643.8 431.4 645.2 L431.1 646.7" fill="none" stroke="#6e9a86" stroke-width="5.8" opacity="0.3" stroke-linecap="round"/><path d="M441.3 544.9 Q440.9 547.9 440.7 549.4 Q440.6 550.9 440.5 552.4 Q440.5 553.9 440.5 555.4 Q440.5 556.9 440.5 558.4 Q440.6 559.9 440.7 561.5 Q440.8 563.0 440.9 564.5 Q441.0 566.0 441.0 567.5 Q441.1 569.0 441.2 570.6 Q441.3 572.1 441.3 573.6 Q441.3 575.1 441.2 576.6 Q441.2 578.1 441.0 579.6 Q440.9 581.1 440.7 582.6 Q440.5 584.1 440.2 585.5 Q439.9 587.0 439.6 588.5 Q439.2 590.0 438.8 591.4 Q438.5 592.9 438.1 594.4 Q437.7 595.8 437.3 597.3 Q436.9 598.8 436.5 600.2 Q436.1 601.7 435.8 603.2 Q435.5 604.7 435.2 606.1 Q435.0 607.6 434.8 609.1 Q434.6 610.6 434.5 612.1 Q434.3 613.6 434.3 615.1 Q434.3 616.6 434.3 618.1 Q434.3 619.6 434.4 621.1 Q434.4 622.6 434.5 624.2 Q434.6 625.7 434.7 627.2 Q434.8 628.7 434.9 630.2 Q435.0 631.7 435.1 633.3 Q435.1 634.8 435.1 636.3 Q435.1 637.8 435.0 639.3 Q434.9 640.8 434.8 642.3 Q434.6 643.8 434.4 645.2 L434.1 646.7" fill="none" stroke="#bfe6d2" stroke-width="2.7" opacity="0.3" stroke-linecap="round"/><path d="M355.8 424.8 Q354.5 427.4 353.7 428.7 Q352.9 430.0 352.1 431.2 Q351.3 432.5 350.4 433.7 Q349.5 434.9 348.5 436.1 Q347.6 437.3 346.6 438.5 Q345.6 439.7 344.6 440.9 Q343.7 442.2 342.7 443.4 Q341.7 444.6 340.8 445.8 Q339.8 447.1 339.0 448.4 Q338.1 449.6 337.3 450.9 Q336.5 452.3 335.8 453.6 Q335.2 455.0 334.6 456.4 Q334.0 457.8 333.6 459.2 Q333.1 460.7 332.8 462.1 Q332.4 463.6 332.2 465.2 Q332.0 466.7 331.8 468.2 Q331.7 469.8 331.6 471.3 Q331.5 472.9 331.5 474.4 Q331.4 476.0 331.4 477.6 Q331.4 479.1 331.3 480.7 Q331.3 482.2 331.2 483.7 Q331.0 485.2 330.8 486.7 Q330.7 488.2 330.4 489.7 Q330.1 491.2 329.7 492.6 Q329.3 494.0 328.8 495.4 Q328.2 496.8 327.6 498.2 L327.0 499.6" fill="none" stroke="#6e9a86" stroke-width="4.1" opacity="0.3" stroke-linecap="round"/><path d="M358.8 424.8 Q357.5 427.4 356.7 428.7 Q355.9 430.0 355.1 431.2 Q354.3 432.5 353.4 433.7 Q352.5 434.9 351.5 436.1 Q350.6 437.3 349.6 438.5 Q348.6 439.7 347.6 440.9 Q346.7 442.2 345.7 443.4 Q344.7 444.6 343.8 445.8 Q342.8 447.1 342.0 448.4 Q341.1 449.6 340.3 450.9 Q339.5 452.3 338.8 453.6 Q338.2 455.0 337.6 456.4 Q337.0 457.8 336.6 459.2 Q336.1 460.7 335.8 462.1 Q335.4 463.6 335.2 465.2 Q335.0 466.7 334.8 468.2 Q334.7 469.8 334.6 471.3 Q334.5 472.9 334.5 474.4 Q334.4 476.0 334.4 477.6 Q334.4 479.1 334.3 480.7 Q334.3 482.2 334.2 483.7 Q334.0 485.2 333.8 486.7 Q333.7 488.2 333.4 489.7 Q333.1 491.2 332.7 492.6 Q332.3 494.0 331.8 495.4 Q331.2 496.8 330.6 498.2 L330.0 499.6" fill="none" stroke="#bfe6d2" stroke-width="2.6" opacity="0.3" stroke-linecap="round"/><path d="M524.0 332.9 Q521.6 334.8 520.4 335.8 Q519.3 336.8 518.1 337.8 Q517.0 338.8 515.9 339.8 Q514.8 340.9 513.8 342.0 Q512.7 343.1 511.7 344.2 Q510.7 345.3 509.7 346.5 Q508.8 347.6 507.8 348.8 Q506.9 350.0 506.1 351.3 Q505.2 352.5 504.4 353.8 Q503.6 355.1 502.8 356.4 Q502.0 357.7 501.3 359.0 Q500.6 360.4 499.9 361.7 Q499.2 363.1 498.5 364.5 Q497.9 365.9 497.2 367.3 Q496.6 368.6 495.9 370.0 Q495.3 371.4 494.7 372.8 Q494.0 374.2 493.4 375.6 Q492.7 376.9 492.1 378.3 Q491.4 379.6 490.7 381.0 Q490.0 382.3 489.3 383.6 Q488.5 384.9 487.7 386.2 Q487.0 387.4 486.1 388.7 Q485.3 389.9 484.4 391.1 Q483.5 392.3 482.6 393.5 Q481.7 394.7 480.7 395.8 Q479.7 397.0 478.7 398.1 Q477.7 399.2 476.6 400.3 Q475.6 401.5 474.5 402.6 Q473.5 403.7 472.4 404.8 L471.4 405.9" fill="none" stroke="#6e9a86" stroke-width="4.9" opacity="0.3" stroke-linecap="round"/><path d="M527.0 332.9 Q524.6 334.8 523.4 335.8 Q522.3 336.8 521.1 337.8 Q520.0 338.8 518.9 339.8 Q517.8 340.9 516.8 342.0 Q515.7 343.1 514.7 344.2 Q513.7 345.3 512.7 346.5 Q511.8 347.6 510.8 348.8 Q509.9 350.0 509.1 351.3 Q508.2 352.5 507.4 353.8 Q506.6 355.1 505.8 356.4 Q505.0 357.7 504.3 359.0 Q503.6 360.4 502.9 361.7 Q502.2 363.1 501.5 364.5 Q500.9 365.9 500.2 367.3 Q499.6 368.6 498.9 370.0 Q498.3 371.4 497.7 372.8 Q497.0 374.2 496.4 375.6 Q495.7 376.9 495.1 378.3 Q494.4 379.6 493.7 381.0 Q493.0 382.3 492.3 383.6 Q491.5 384.9 490.7 386.2 Q490.0 387.4 489.1 388.7 Q488.3 389.9 487.4 391.1 Q486.5 392.3 485.6 393.5 Q484.7 394.7 483.7 395.8 Q482.7 397.0 481.7 398.1 Q480.7 399.2 479.6 400.3 Q478.6 401.5 477.5 402.6 Q476.5 403.7 475.4 404.8 L474.4 405.9" fill="none" stroke="#bfe6d2" stroke-width="2.7" opacity="0.3" stroke-linecap="round"/><path d="M381.4 584.1 Q382.1 587.2 382.3 588.7 Q382.5 590.2 382.6 591.8 Q382.7 593.3 382.7 594.8 Q382.6 596.3 382.4 597.8 Q382.2 599.3 381.9 600.7 Q381.5 602.2 381.0 603.7 Q380.5 605.1 379.9 606.6 Q379.3 608.0 378.7 609.5 Q378.0 610.9 377.4 612.3 Q376.7 613.8 376.1 615.2 Q375.4 616.7 374.9 618.1 Q374.3 619.6 373.9 621.0 Q373.4 622.5 373.1 624.0 Q372.8 625.4 372.7 626.9 Q372.5 628.4 372.5 629.9 Q372.5 631.4 372.7 633.0 Q372.8 634.5 373.1 636.0 Q373.3 637.6 373.7 639.1 Q374.0 640.6 374.4 642.2 Q374.8 643.7 375.1 645.3 Q375.5 646.8 375.8 648.4 Q376.1 649.9 376.2 651.4 Q376.4 652.9 376.5 654.5 Q376.5 656.0 376.5 657.5 Q376.4 659.0 376.1 660.4 Q375.9 661.9 375.5 663.4 Q375.1 664.9 374.5 666.3 Q374.0 667.8 373.4 669.2 Q372.8 670.7 372.1 672.1 Q371.4 673.5 370.8 675.0 Q370.1 676.4 369.5 677.9 Q368.9 679.3 368.4 680.8 Q367.8 682.2 367.4 683.7 Q367.0 685.2 366.8 686.6 Q366.5 688.1 366.4 689.6 L366.3 691.1" fill="none" stroke="#6e9a86" stroke-width="4.6" opacity="0.3" stroke-linecap="round"/><path d="M384.4 584.1 Q385.1 587.2 385.3 588.7 Q385.5 590.2 385.6 591.8 Q385.7 593.3 385.7 594.8 Q385.6 596.3 385.4 597.8 Q385.2 599.3 384.9 600.7 Q384.5 602.2 384.0 603.7 Q383.5 605.1 382.9 606.6 Q382.3 608.0 381.7 609.5 Q381.0 610.9 380.4 612.3 Q379.7 613.8 379.1 615.2 Q378.4 616.7 377.9 618.1 Q377.3 619.6 376.9 621.0 Q376.4 622.5 376.1 624.0 Q375.8 625.4 375.7 626.9 Q375.5 628.4 375.5 629.9 Q375.5 631.4 375.7 633.0 Q375.8 634.5 376.1 636.0 Q376.3 637.6 376.7 639.1 Q377.0 640.6 377.4 642.2 Q377.8 643.7 378.1 645.3 Q378.5 646.8 378.8 648.4 Q379.1 649.9 379.2 651.4 Q379.4 652.9 379.5 654.5 Q379.5 656.0 379.5 657.5 Q379.4 659.0 379.1 660.4 Q378.9 661.9 378.5 663.4 Q378.1 664.9 377.5 666.3 Q377.0 667.8 376.4 669.2 Q375.8 670.7 375.1 672.1 Q374.4 673.5 373.8 675.0 Q373.1 676.4 372.5 677.9 Q371.9 679.3 371.4 680.8 Q370.8 682.2 370.4 683.7 Q370.0 685.2 369.8 686.6 Q369.5 688.1 369.4 689.6 L369.3 691.1" fill="none" stroke="#bfe6d2" stroke-width="2.8" opacity="0.3" stroke-linecap="round"/><path d="M417.9 587.8 Q417.4 590.8 417.0 592.2 Q416.7 593.7 416.3 595.2 Q415.8 596.7 415.4 598.1 Q414.9 599.6 414.4 601.0 Q414.0 602.5 413.5 604.0 Q413.0 605.4 412.6 606.9 Q412.2 608.3 411.8 609.8 Q411.5 611.3 411.2 612.8 Q410.9 614.2 410.7 615.7 Q410.6 617.2 410.5 618.7 Q410.4 620.2 410.4 621.7 Q410.4 623.2 410.5 624.8 Q410.6 626.3 410.8 627.8 Q410.9 629.3 411.1 630.9 Q411.3 632.4 411.5 633.9 Q411.6 635.4 411.8 636.9 Q411.9 638.5 412.0 640.0 Q412.1 641.5 412.1 643.0 Q412.1 644.5 412.0 646.0 Q411.9 647.5 411.8 649.0 Q411.6 650.5 411.3 652.0 Q411.0 653.5 410.6 654.9 Q410.3 656.4 409.8 657.9 Q409.4 659.3 408.9 660.8 Q408.5 662.2 408.0 663.7 Q407.5 665.2 407.0 666.6 Q406.6 668.1 406.2 669.6 Q405.8 671.0 405.4 672.5 Q405.1 674.0 404.9 675.5 Q404.6 676.9 404.5 678.4 Q404.3 679.9 404.3 681.4 Q404.2 682.9 404.3 684.4 L404.3 685.9" fill="none" stroke="#6e9a86" stroke-width="3.2" opacity="0.3" stroke-linecap="round"/><path d="M420.9 587.8 Q420.4 590.8 420.0 592.2 Q419.7 593.7 419.3 595.2 Q418.8 596.7 418.4 598.1 Q417.9 599.6 417.4 601.0 Q417.0 602.5 416.5 604.0 Q416.0 605.4 415.6 606.9 Q415.2 608.3 414.8 609.8 Q414.5 611.3 414.2 612.8 Q413.9 614.2 413.7 615.7 Q413.6 617.2 413.5 618.7 Q413.4 620.2 413.4 621.7 Q413.4 623.2 413.5 624.8 Q413.6 626.3 413.8 627.8 Q413.9 629.3 414.1 630.9 Q414.3 632.4 414.5 633.9 Q414.6 635.4 414.8 636.9 Q414.9 638.5 415.0 640.0 Q415.1 641.5 415.1 643.0 Q415.1 644.5 415.0 646.0 Q414.9 647.5 414.8 649.0 Q414.6 650.5 414.3 652.0 Q414.0 653.5 413.6 654.9 Q413.3 656.4 412.8 657.9 Q412.4 659.3 411.9 660.8 Q411.5 662.2 411.0 663.7 Q410.5 665.2 410.0 666.6 Q409.6 668.1 409.2 669.6 Q408.8 671.0 408.4 672.5 Q408.1 674.0 407.9 675.5 Q407.6 676.9 407.5 678.4 Q407.3 679.9 407.3 681.4 Q407.2 682.9 407.3 684.4 L407.3 685.9" fill="none" stroke="#bfe6d2" stroke-width="2.4" opacity="0.3" stroke-linecap="round"/><path d="M490.1 536.4 Q489.9 539.4 489.8 540.9 Q489.8 542.4 489.8 543.9 Q489.8 545.4 489.9 546.9 Q489.9 548.5 490.0 550.0 Q490.1 551.5 490.2 553.0 Q490.2 554.5 490.3 556.0 Q490.3 557.5 490.3 559.0 Q490.3 560.5 490.2 562.0 Q490.1 563.5 490.0 565.0 Q489.9 566.5 489.6 568.0 Q489.4 569.5 489.1 571.0 Q488.9 572.5 488.5 573.9 Q488.2 575.4 487.8 576.9 Q487.5 578.4 487.1 579.8 Q486.7 581.3 486.3 582.8 Q485.9 584.2 485.6 585.7 Q485.2 587.2 484.9 588.7 Q484.6 590.1 484.4 591.6 Q484.1 593.1 484.0 594.6 Q483.8 596.1 483.7 597.6 Q483.6 599.1 483.5 600.6 Q483.5 602.1 483.5 603.6 Q483.5 605.1 483.6 606.6 L483.6 608.1" fill="none" stroke="#6e9a86" stroke-width="5.4" opacity="0.3" stroke-linecap="round"/><path d="M493.1 536.4 Q492.9 539.4 492.8 540.9 Q492.8 542.4 492.8 543.9 Q492.8 545.4 492.9 546.9 Q492.9 548.5 493.0 550.0 Q493.1 551.5 493.2 553.0 Q493.2 554.5 493.3 556.0 Q493.3 557.5 493.3 559.0 Q493.3 560.5 493.2 562.0 Q493.1 563.5 493.0 565.0 Q492.9 566.5 492.6 568.0 Q492.4 569.5 492.1 571.0 Q491.9 572.5 491.5 573.9 Q491.2 575.4 490.8 576.9 Q490.5 578.4 490.1 579.8 Q489.7 581.3 489.3 582.8 Q488.9 584.2 488.6 585.7 Q488.2 587.2 487.9 588.7 Q487.6 590.1 487.4 591.6 Q487.1 593.1 487.0 594.6 Q486.8 596.1 486.7 597.6 Q486.6 599.1 486.5 600.6 Q486.5 602.1 486.5 603.6 Q486.5 605.1 486.6 606.6 L486.6 608.1" fill="none" stroke="#bfe6d2" stroke-width="2.1" opacity="0.3" stroke-linecap="round"/><path d="M572.0 322.5 Q571.8 325.6 571.8 327.2 Q571.9 328.7 572.0 330.2 Q572.2 331.7 572.6 333.2 Q573.0 334.7 573.5 336.1 Q574.0 337.6 574.6 339.0 Q575.2 340.5 575.9 341.9 Q576.6 343.3 577.4 344.7 Q578.1 346.2 578.8 347.6 Q579.5 349.0 580.1 350.5 Q580.7 351.9 581.2 353.4 Q581.7 354.8 582.1 356.3 Q582.4 357.8 582.6 359.3 Q582.8 360.8 582.8 362.3 Q582.8 363.9 582.7 365.4 Q582.6 367.0 582.4 368.5 Q582.2 370.1 581.9 371.7 Q581.6 373.2 581.4 374.8 Q581.1 376.4 580.9 378.0 Q580.7 379.5 580.5 381.1 Q580.4 382.6 580.4 384.2 L580.4 385.7" fill="none" stroke="#6e9a86" stroke-width="3.4" opacity="0.3" stroke-linecap="round"/><path d="M575.0 322.5 Q574.8 325.6 574.8 327.2 Q574.9 328.7 575.0 330.2 Q575.2 331.7 575.6 333.2 Q576.0 334.7 576.5 336.1 Q577.0 337.6 577.6 339.0 Q578.2 340.5 578.9 341.9 Q579.6 343.3 580.4 344.7 Q581.1 346.2 581.8 347.6 Q582.5 349.0 583.1 350.5 Q583.7 351.9 584.2 353.4 Q584.7 354.8 585.1 356.3 Q585.4 357.8 585.6 359.3 Q585.8 360.8 585.8 362.3 Q585.8 363.9 585.7 365.4 Q585.6 367.0 585.4 368.5 Q585.2 370.1 584.9 371.7 Q584.6 373.2 584.4 374.8 Q584.1 376.4 583.9 378.0 Q583.7 379.5 583.5 381.1 Q583.4 382.6 583.4 384.2 L583.4 385.7" fill="none" stroke="#bfe6d2" stroke-width="2.1" opacity="0.3" stroke-linecap="round"/><path d="M481.0 520.6 Q479.6 523.4 479.0 524.8 Q478.3 526.2 477.7 527.6 Q477.1 529.1 476.6 530.5 Q476.1 532.0 475.7 533.4 Q475.3 534.9 475.0 536.4 Q474.8 537.9 474.6 539.4 Q474.5 540.9 474.5 542.4 Q474.5 543.9 474.6 545.5 Q474.7 547.0 475.0 548.5 Q475.2 550.1 475.5 551.6 Q475.7 553.1 476.0 554.7 Q476.3 556.2 476.5 557.7 Q476.8 559.3 477.0 560.8 Q477.2 562.3 477.2 563.8 Q477.3 565.4 477.3 566.9 Q477.2 568.4 477.1 569.9 Q476.9 571.3 476.6 572.8 Q476.3 574.3 475.9 575.8 Q475.5 577.2 475.0 578.7 Q474.5 580.1 473.9 581.6 Q473.4 583.1 472.8 584.5 Q472.2 586.0 471.6 587.4 Q471.1 588.9 470.6 590.3 Q470.0 591.8 469.6 593.2 Q469.2 594.7 468.9 596.2 Q468.6 597.7 468.4 599.1 Q468.3 600.6 468.2 602.1 Q468.2 603.6 468.2 605.2 Q468.3 606.7 468.5 608.2 Q468.7 609.7 468.9 611.3 Q469.2 612.8 469.4 614.3 L469.7 615.9" fill="none" stroke="#6e9a86" stroke-width="5.8" opacity="0.3" stroke-linecap="round"/><path d="M484.0 520.6 Q482.6 523.4 482.0 524.8 Q481.3 526.2 480.7 527.6 Q480.1 529.1 479.6 530.5 Q479.1 532.0 478.7 533.4 Q478.3 534.9 478.0 536.4 Q477.8 537.9 477.6 539.4 Q477.5 540.9 477.5 542.4 Q477.5 543.9 477.6 545.5 Q477.7 547.0 478.0 548.5 Q478.2 550.1 478.5 551.6 Q478.7 553.1 479.0 554.7 Q479.3 556.2 479.5 557.7 Q479.8 559.3 480.0 560.8 Q480.2 562.3 480.2 563.8 Q480.3 565.4 480.3 566.9 Q480.2 568.4 480.1 569.9 Q479.9 571.3 479.6 572.8 Q479.3 574.3 478.9 575.8 Q478.5 577.2 478.0 578.7 Q477.5 580.1 476.9 581.6 Q476.4 583.1 475.8 584.5 Q475.2 586.0 474.6 587.4 Q474.1 588.9 473.6 590.3 Q473.0 591.8 472.6 593.2 Q472.2 594.7 471.9 596.2 Q471.6 597.7 471.4 599.1 Q471.3 600.6 471.2 602.1 Q471.2 603.6 471.2 605.2 Q471.3 606.7 471.5 608.2 Q471.7 609.7 471.9 611.3 Q472.2 612.8 472.4 614.3 L472.7 615.9" fill="none" stroke="#bfe6d2" stroke-width="2.5" opacity="0.3" stroke-linecap="round"/><path d="M380.6 448.6 Q379.9 451.6 379.6 453.1 Q379.3 454.6 379.1 456.1 Q378.8 457.6 378.7 459.2 Q378.5 460.7 378.3 462.2 Q378.2 463.8 378.0 465.3 Q377.9 466.8 377.7 468.4 Q377.5 469.9 377.3 471.4 Q377.0 472.9 376.7 474.3 Q376.4 475.8 376.1 477.2 Q375.7 478.7 375.2 480.1 Q374.7 481.5 374.1 482.9 Q373.6 484.3 372.9 485.6 Q372.3 487.0 371.5 488.3 Q370.8 489.7 370.1 491.0 Q369.3 492.4 368.5 493.7 Q367.7 495.1 367.0 496.4 Q366.2 497.8 365.5 499.1 Q364.7 500.5 364.1 501.9 Q363.5 503.3 362.9 504.7 L362.4 506.2" fill="none" stroke="#6e9a86" stroke-width="4.9" opacity="0.3" stroke-linecap="round"/><path d="M383.6 448.6 Q382.9 451.6 382.6 453.1 Q382.3 454.6 382.1 456.1 Q381.8 457.6 381.7 459.2 Q381.5 460.7 381.3 462.2 Q381.2 463.8 381.0 465.3 Q380.9 466.8 380.7 468.4 Q380.5 469.9 380.3 471.4 Q380.0 472.9 379.7 474.3 Q379.4 475.8 379.1 477.2 Q378.7 478.7 378.2 480.1 Q377.7 481.5 377.1 482.9 Q376.6 484.3 375.9 485.6 Q375.3 487.0 374.5 488.3 Q373.8 489.7 373.1 491.0 Q372.3 492.4 371.5 493.7 Q370.7 495.1 370.0 496.4 Q369.2 497.8 368.5 499.1 Q367.7 500.5 367.1 501.9 Q366.5 503.3 365.9 504.7 L365.4 506.2" fill="none" stroke="#bfe6d2" stroke-width="2.5" opacity="0.3" stroke-linecap="round"/><path d="M414.4 398.2 Q413.3 401.0 412.8 402.4 Q412.2 403.8 411.6 405.2 Q411.0 406.5 410.3 407.9 Q409.6 409.2 408.9 410.5 Q408.1 411.8 407.3 413.0 Q406.5 414.3 405.7 415.5 Q404.8 416.7 403.9 417.9 Q403.0 419.1 402.0 420.3 Q401.0 421.5 400.0 422.6 Q399.0 423.8 398.0 425.0 Q396.9 426.1 395.9 427.3 Q394.9 428.5 393.9 429.7 Q392.9 430.9 392.0 432.1 Q391.0 433.3 390.1 434.6 Q389.3 435.8 388.5 437.1 Q387.7 438.4 387.0 439.8 Q386.3 441.1 385.7 442.5 Q385.1 443.9 384.6 445.3 Q384.1 446.8 383.7 448.2 Q383.3 449.7 383.1 451.2 Q382.8 452.7 382.6 454.3 Q382.4 455.8 382.2 457.4 Q382.1 458.9 381.9 460.5 Q381.8 462.0 381.7 463.6 Q381.6 465.1 381.5 466.7 Q381.3 468.2 381.1 469.7 Q380.9 471.2 380.7 472.7 Q380.4 474.2 380.0 475.6 Q379.7 477.1 379.2 478.5 Q378.8 479.9 378.2 481.3 Q377.6 482.7 377.0 484.0 Q376.3 485.4 375.6 486.7 L374.8 488.1" fill="none" stroke="#6e9a86" stroke-width="3.6" opacity="0.3" stroke-linecap="round"/><path d="M417.4 398.2 Q416.3 401.0 415.8 402.4 Q415.2 403.8 414.6 405.2 Q414.0 406.5 413.3 407.9 Q412.6 409.2 411.9 410.5 Q411.1 411.8 410.3 413.0 Q409.5 414.3 408.7 415.5 Q407.8 416.7 406.9 417.9 Q406.0 419.1 405.0 420.3 Q404.0 421.5 403.0 422.6 Q402.0 423.8 401.0 425.0 Q399.9 426.1 398.9 427.3 Q397.9 428.5 396.9 429.7 Q395.9 430.9 395.0 432.1 Q394.0 433.3 393.1 434.6 Q392.3 435.8 391.5 437.1 Q390.7 438.4 390.0 439.8 Q389.3 441.1 388.7 442.5 Q388.1 443.9 387.6 445.3 Q387.1 446.8 386.7 448.2 Q386.3 449.7 386.1 451.2 Q385.8 452.7 385.6 454.3 Q385.4 455.8 385.2 457.4 Q385.1 458.9 384.9 460.5 Q384.8 462.0 384.7 463.6 Q384.6 465.1 384.5 466.7 Q384.3 468.2 384.1 469.7 Q383.9 471.2 383.7 472.7 Q383.4 474.2 383.0 475.6 Q382.7 477.1 382.2 478.5 Q381.8 479.9 381.2 481.3 Q380.6 482.7 380.0 484.0 Q379.3 485.4 378.6 486.7 L377.8 488.1" fill="none" stroke="#bfe6d2" stroke-width="2.9" opacity="0.3" stroke-linecap="round"/><path d="M500.0 333.1 Q497.6 335.1 496.5 336.1 Q495.3 337.0 494.2 338.0 Q493.0 339.0 491.9 340.0 Q490.7 341.0 489.6 342.0 Q488.4 343.0 487.3 344.0 Q486.2 345.0 485.0 346.0 Q483.9 347.1 482.9 348.1 Q481.8 349.2 480.7 350.3 Q479.7 351.4 478.7 352.5 Q477.7 353.6 476.7 354.8 Q475.7 355.9 474.8 357.1 Q473.9 358.3 473.0 359.5 Q472.1 360.7 471.3 362.0 Q470.4 363.3 469.6 364.5 Q468.8 365.8 468.1 367.2 Q467.3 368.5 466.6 369.8 Q465.9 371.1 465.2 372.5 Q464.5 373.9 463.9 375.2 Q463.2 376.6 462.6 378.0 Q461.9 379.4 461.3 380.7 Q460.7 382.1 460.0 383.5 Q459.4 384.9 458.7 386.2 Q458.1 387.6 457.4 388.9 Q456.7 390.3 456.0 391.6 L455.3 392.9" fill="none" stroke="#6e9a86" stroke-width="4.8" opacity="0.3" stroke-linecap="round"/><path d="M503.0 333.1 Q500.6 335.1 499.5 336.1 Q498.3 337.0 497.2 338.0 Q496.0 339.0 494.9 340.0 Q493.7 341.0 492.6 342.0 Q491.4 343.0 490.3 344.0 Q489.2 345.0 488.0 346.0 Q486.9 347.1 485.9 348.1 Q484.8 349.2 483.7 350.3 Q482.7 351.4 481.7 352.5 Q480.7 353.6 479.7 354.8 Q478.7 355.9 477.8 357.1 Q476.9 358.3 476.0 359.5 Q475.1 360.7 474.3 362.0 Q473.4 363.3 472.6 364.5 Q471.8 365.8 471.1 367.2 Q470.3 368.5 469.6 369.8 Q468.9 371.1 468.2 372.5 Q467.5 373.9 466.9 375.2 Q466.2 376.6 465.6 378.0 Q464.9 379.4 464.3 380.7 Q463.7 382.1 463.0 383.5 Q462.4 384.9 461.7 386.2 Q461.1 387.6 460.4 388.9 Q459.7 390.3 459.0 391.6 L458.3 392.9" fill="none" stroke="#bfe6d2" stroke-width="2.0" opacity="0.3" stroke-linecap="round"/><path d="M439.7 548.1 Q439.5 551.1 439.5 552.6 Q439.6 554.2 439.7 555.7 Q439.8 557.2 440.0 558.7 Q440.1 560.2 440.4 561.8 Q440.6 563.3 440.8 564.8 Q441.0 566.4 441.2 567.9 Q441.4 569.4 441.5 570.9 Q441.7 572.5 441.7 574.0 Q441.8 575.5 441.7 577.0 Q441.7 578.5 441.5 580.0 Q441.3 581.5 441.0 582.9 Q440.8 584.4 440.4 585.9 Q440.0 587.4 439.5 588.8 Q439.1 590.3 438.6 591.7 Q438.1 593.2 437.6 594.7 Q437.0 596.1 436.5 597.6 Q436.0 599.0 435.6 600.5 Q435.1 601.9 434.7 603.4 Q434.4 604.9 434.1 606.4 Q433.8 607.8 433.6 609.3 Q433.5 610.8 433.4 612.3 Q433.3 613.8 433.4 615.3 Q433.4 616.9 433.6 618.4 Q433.7 619.9 433.9 621.4 Q434.1 622.9 434.3 624.5 L434.5 626.0" fill="none" stroke="#6e9a86" stroke-width="5.1" opacity="0.3" stroke-linecap="round"/><path d="M442.7 548.1 Q442.5 551.1 442.5 552.6 Q442.6 554.2 442.7 555.7 Q442.8 557.2 443.0 558.7 Q443.1 560.2 443.4 561.8 Q443.6 563.3 443.8 564.8 Q444.0 566.4 444.2 567.9 Q444.4 569.4 444.5 570.9 Q444.7 572.5 444.7 574.0 Q444.8 575.5 444.7 577.0 Q444.7 578.5 444.5 580.0 Q444.3 581.5 444.0 582.9 Q443.8 584.4 443.4 585.9 Q443.0 587.4 442.5 588.8 Q442.1 590.3 441.6 591.7 Q441.1 593.2 440.6 594.7 Q440.0 596.1 439.5 597.6 Q439.0 599.0 438.6 600.5 Q438.1 601.9 437.7 603.4 Q437.4 604.9 437.1 606.4 Q436.8 607.8 436.6 609.3 Q436.5 610.8 436.4 612.3 Q436.3 613.8 436.4 615.3 Q436.4 616.9 436.6 618.4 Q436.7 619.9 436.9 621.4 Q437.1 622.9 437.3 624.5 L437.5 626.0" fill="none" stroke="#bfe6d2" stroke-width="2.1" opacity="0.3" stroke-linecap="round"/><path d="M485.5 407.7 Q483.6 410.1 482.8 411.4 Q482.0 412.7 481.2 414.0 Q480.5 415.3 479.8 416.7 Q479.2 418.0 478.6 419.4 Q478.1 420.8 477.6 422.3 Q477.1 423.8 476.7 425.2 Q476.3 426.7 476.0 428.2 Q475.7 429.8 475.4 431.3 Q475.1 432.8 474.8 434.3 Q474.6 435.9 474.3 437.4 Q474.1 438.9 473.8 440.4 Q473.5 441.9 473.2 443.4 Q472.9 444.9 472.5 446.4 Q472.1 447.8 471.6 449.2 Q471.2 450.7 470.6 452.0 Q470.1 453.4 469.4 454.8 Q468.8 456.1 468.1 457.4 Q467.3 458.7 466.5 460.0 Q465.7 461.3 464.9 462.6 Q464.0 463.9 463.1 465.1 Q462.2 466.4 461.3 467.7 Q460.4 468.9 459.5 470.2 Q458.6 471.5 457.7 472.8 Q456.9 474.1 456.1 475.5 Q455.3 476.8 454.7 478.2 Q454.0 479.6 453.5 481.0 Q452.9 482.4 452.5 483.9 Q452.1 485.3 451.8 486.8 Q451.6 488.3 451.4 489.8 Q451.3 491.3 451.2 492.9 Q451.2 494.4 451.2 496.0 Q451.3 497.6 451.3 499.1 Q451.4 500.7 451.5 502.3 Q451.7 503.8 451.7 505.4 L451.8 506.9" fill="none" stroke="#6e9a86" stroke-width="3.8" opacity="0.3" stroke-linecap="round"/><path d="M488.5 407.7 Q486.6 410.1 485.8 411.4 Q485.0 412.7 484.2 414.0 Q483.5 415.3 482.8 416.7 Q482.2 418.0 481.6 419.4 Q481.1 420.8 480.6 422.3 Q480.1 423.8 479.7 425.2 Q479.3 426.7 479.0 428.2 Q478.7 429.8 478.4 431.3 Q478.1 432.8 477.8 434.3 Q477.6 435.9 477.3 437.4 Q477.1 438.9 476.8 440.4 Q476.5 441.9 476.2 443.4 Q475.9 444.9 475.5 446.4 Q475.1 447.8 474.6 449.2 Q474.2 450.7 473.6 452.0 Q473.1 453.4 472.4 454.8 Q471.8 456.1 471.1 457.4 Q470.3 458.7 469.5 460.0 Q468.7 461.3 467.9 462.6 Q467.0 463.9 466.1 465.1 Q465.2 466.4 464.3 467.7 Q463.4 468.9 462.5 470.2 Q461.6 471.5 460.7 472.8 Q459.9 474.1 459.1 475.5 Q458.3 476.8 457.7 478.2 Q457.0 479.6 456.5 481.0 Q455.9 482.4 455.5 483.9 Q455.1 485.3 454.8 486.8 Q454.6 488.3 454.4 489.8 Q454.3 491.3 454.2 492.9 Q454.2 494.4 454.2 496.0 Q454.3 497.6 454.3 499.1 Q454.4 500.7 454.5 502.3 Q454.7 503.8 454.7 505.4 L454.8 506.9" fill="none" stroke="#bfe6d2" stroke-width="2.5" opacity="0.3" stroke-linecap="round"/><path d="M353.8 417.2 Q352.9 420.0 352.4 421.4 Q351.9 422.8 351.3 424.2 Q350.7 425.6 350.0 426.9 Q349.4 428.2 348.6 429.5 Q347.9 430.8 347.1 432.1 Q346.3 433.4 345.4 434.6 Q344.5 435.8 343.6 437.0 Q342.7 438.3 341.7 439.5 Q340.7 440.7 339.8 441.9 Q338.8 443.1 337.8 444.3 Q336.8 445.5 335.9 446.8 Q335.0 448.0 334.1 449.3 Q333.2 450.6 332.4 451.9 Q331.6 453.2 330.9 454.5 Q330.2 455.9 329.6 457.3 Q329.0 458.7 328.5 460.1 Q328.0 461.5 327.7 463.0 Q327.3 464.5 327.1 466.0 Q326.8 467.5 326.7 469.1 Q326.5 470.6 326.4 472.2 Q326.4 473.7 326.3 475.3 Q326.3 476.8 326.3 478.4 Q326.2 480.0 326.2 481.5 Q326.1 483.1 326.0 484.6 Q326.0 486.1 325.8 487.6 Q325.6 489.1 325.4 490.6 Q325.1 492.0 324.7 493.5 Q324.3 494.9 323.9 496.3 Q323.4 497.7 322.8 499.1 Q322.2 500.5 321.5 501.9 Q320.8 503.3 320.1 504.6 L319.3 506.0" fill="none" stroke="#6e9a86" stroke-width="4.4" opacity="0.3" stroke-linecap="round"/><path d="M356.8 417.2 Q355.9 420.0 355.4 421.4 Q354.9 422.8 354.3 424.2 Q353.7 425.6 353.0 426.9 Q352.4 428.2 351.6 429.5 Q350.9 430.8 350.1 432.1 Q349.3 433.4 348.4 434.6 Q347.5 435.8 346.6 437.0 Q345.7 438.3 344.7 439.5 Q343.7 440.7 342.8 441.9 Q341.8 443.1 340.8 444.3 Q339.8 445.5 338.9 446.8 Q338.0 448.0 337.1 449.3 Q336.2 450.6 335.4 451.9 Q334.6 453.2 333.9 454.5 Q333.2 455.9 332.6 457.3 Q332.0 458.7 331.5 460.1 Q331.0 461.5 330.7 463.0 Q330.3 464.5 330.1 466.0 Q329.8 467.5 329.7 469.1 Q329.5 470.6 329.4 472.2 Q329.4 473.7 329.3 475.3 Q329.3 476.8 329.3 478.4 Q329.2 480.0 329.2 481.5 Q329.1 483.1 329.0 484.6 Q329.0 486.1 328.8 487.6 Q328.6 489.1 328.4 490.6 Q328.1 492.0 327.7 493.5 Q327.3 494.9 326.9 496.3 Q326.4 497.7 325.8 499.1 Q325.2 500.5 324.5 501.9 Q323.8 503.3 323.1 504.6 L322.3 506.0" fill="none" stroke="#bfe6d2" stroke-width="2.3" opacity="0.3" stroke-linecap="round"/><path d="M374.7 482.9 Q373.6 485.7 373.0 487.1 Q372.4 488.5 371.8 489.8 Q371.2 491.2 370.6 492.6 Q369.9 494.0 369.3 495.4 Q368.7 496.8 368.1 498.2 Q367.5 499.6 367.0 501.0 Q366.5 502.4 366.0 503.9 Q365.5 505.3 365.1 506.7 Q364.7 508.2 364.4 509.7 Q364.1 511.1 363.8 512.6 Q363.6 514.1 363.4 515.6 Q363.3 517.1 363.2 518.6 Q363.1 520.2 363.0 521.7 Q363.0 523.2 363.0 524.7 Q363.0 526.2 363.0 527.8 Q363.0 529.3 363.0 530.8 Q363.0 532.3 363.0 533.8 Q363.0 535.3 362.9 536.8 Q362.8 538.3 362.6 539.8 Q362.5 541.3 362.3 542.8 Q362.1 544.2 361.8 545.7 Q361.5 547.2 361.2 548.7 Q360.9 550.1 360.5 551.6 Q360.1 553.1 359.7 554.5 Q359.3 556.0 358.9 557.5 Q358.5 558.9 358.1 560.4 Q357.7 561.9 357.4 563.3 Q357.0 564.8 356.7 566.3 Q356.4 567.8 356.1 569.3 Q355.9 570.7 355.8 572.2 Q355.6 573.7 355.5 575.2 Q355.5 576.7 355.5 578.2 Q355.5 579.7 355.5 581.2 L355.6 582.8" fill="none" stroke="#6e9a86" stroke-width="5.3" opacity="0.3" stroke-linecap="round"/><path d="M377.7 482.9 Q376.6 485.7 376.0 487.1 Q375.4 488.5 374.8 489.8 Q374.2 491.2 373.6 492.6 Q372.9 494.0 372.3 495.4 Q371.7 496.8 371.1 498.2 Q370.5 499.6 370.0 501.0 Q369.5 502.4 369.0 503.9 Q368.5 505.3 368.1 506.7 Q367.7 508.2 367.4 509.7 Q367.1 511.1 366.8 512.6 Q366.6 514.1 366.4 515.6 Q366.3 517.1 366.2 518.6 Q366.1 520.2 366.0 521.7 Q366.0 523.2 366.0 524.7 Q366.0 526.2 366.0 527.8 Q366.0 529.3 366.0 530.8 Q366.0 532.3 366.0 533.8 Q366.0 535.3 365.9 536.8 Q365.8 538.3 365.6 539.8 Q365.5 541.3 365.3 542.8 Q365.1 544.2 364.8 545.7 Q364.5 547.2 364.2 548.7 Q363.9 550.1 363.5 551.6 Q363.1 553.1 362.7 554.5 Q362.3 556.0 361.9 557.5 Q361.5 558.9 361.1 560.4 Q360.7 561.9 360.4 563.3 Q360.0 564.8 359.7 566.3 Q359.4 567.8 359.1 569.3 Q358.9 570.7 358.8 572.2 Q358.6 573.7 358.5 575.2 Q358.5 576.7 358.5 578.2 Q358.5 579.7 358.5 581.2 L358.6 582.8" fill="none" stroke="#bfe6d2" stroke-width="2.0" opacity="0.3" stroke-linecap="round"/><path d="M425.7 482.7 Q424.3 485.4 423.6 486.8 Q423.0 488.2 422.5 489.6 Q422.0 491.0 421.6 492.5 Q421.2 493.9 420.9 495.4 Q420.6 496.9 420.5 498.4 Q420.3 500.0 420.3 501.5 Q420.2 503.0 420.3 504.6 Q420.3 506.1 420.4 507.7 Q420.4 509.2 420.6 510.8 Q420.7 512.3 420.7 513.9 Q420.8 515.4 420.9 517.0 Q420.9 518.5 420.9 520.0 Q420.8 521.5 420.7 523.0 Q420.5 524.5 420.3 525.9 L420.0 527.4" fill="none" stroke="#6e9a86" stroke-width="3.4" opacity="0.3" stroke-linecap="round"/><path d="M428.7 482.7 Q427.3 485.4 426.6 486.8 Q426.0 488.2 425.5 489.6 Q425.0 491.0 424.6 492.5 Q424.2 493.9 423.9 495.4 Q423.6 496.9 423.5 498.4 Q423.3 500.0 423.3 501.5 Q423.2 503.0 423.3 504.6 Q423.3 506.1 423.4 507.7 Q423.4 509.2 423.6 510.8 Q423.7 512.3 423.7 513.9 Q423.8 515.4 423.9 517.0 Q423.9 518.5 423.9 520.0 Q423.8 521.5 423.7 523.0 Q423.5 524.5 423.3 525.9 L423.0 527.4" fill="none" stroke="#bfe6d2" stroke-width="2.5" opacity="0.3" stroke-linecap="round"/><path d="M483.0 416.2 Q481.7 418.9 481.1 420.3 Q480.5 421.7 480.0 423.1 Q479.5 424.5 479.0 426.0 Q478.6 427.4 478.2 428.9 Q477.7 430.4 477.3 431.9 Q477.0 433.3 476.6 434.8 Q476.2 436.3 475.8 437.8 Q475.5 439.2 475.1 440.7 Q474.7 442.2 474.3 443.6 Q473.8 445.0 473.4 446.5 Q472.9 447.9 472.4 449.3 Q471.9 450.7 471.3 452.1 Q470.7 453.4 470.1 454.8 Q469.4 456.1 468.8 457.5 Q468.1 458.8 467.3 460.1 Q466.6 461.4 465.8 462.8 Q465.0 464.1 464.3 465.4 Q463.5 466.7 462.7 468.0 Q461.9 469.3 461.1 470.6 Q460.4 472.0 459.7 473.3 Q458.9 474.7 458.3 476.1 L457.6 477.4" fill="none" stroke="#6e9a86" stroke-width="4.6" opacity="0.3" stroke-linecap="round"/><path d="M486.0 416.2 Q484.7 418.9 484.1 420.3 Q483.5 421.7 483.0 423.1 Q482.5 424.5 482.0 426.0 Q481.6 427.4 481.2 428.9 Q480.7 430.4 480.3 431.9 Q480.0 433.3 479.6 434.8 Q479.2 436.3 478.8 437.8 Q478.5 439.2 478.1 440.7 Q477.7 442.2 477.3 443.6 Q476.8 445.0 476.4 446.5 Q475.9 447.9 475.4 449.3 Q474.9 450.7 474.3 452.1 Q473.7 453.4 473.1 454.8 Q472.4 456.1 471.8 457.5 Q471.1 458.8 470.3 460.1 Q469.6 461.4 468.8 462.8 Q468.0 464.1 467.3 465.4 Q466.5 466.7 465.7 468.0 Q464.9 469.3 464.1 470.6 Q463.4 472.0 462.7 473.3 Q461.9 474.7 461.3 476.1 L460.6 477.4" fill="none" stroke="#bfe6d2" stroke-width="2.2" opacity="0.3" stroke-linecap="round"/><path d="M378.6 487.6 Q377.1 490.3 376.4 491.7 Q375.6 493.0 374.9 494.4 Q374.2 495.7 373.5 497.1 Q372.8 498.5 372.2 499.9 Q371.6 501.3 371.1 502.7 Q370.6 504.2 370.2 505.6 Q369.8 507.1 369.5 508.6 Q369.2 510.0 369.0 511.5 Q368.8 513.1 368.7 514.6 Q368.6 516.1 368.6 517.6 Q368.6 519.2 368.7 520.7 Q368.8 522.2 368.9 523.8 Q369.0 525.3 369.1 526.9 Q369.2 528.4 369.3 529.9 Q369.4 531.4 369.4 533.0 Q369.5 534.5 369.4 536.0 Q369.4 537.5 369.2 539.0 Q369.1 540.4 368.8 541.9 Q368.6 543.4 368.2 544.8 Q367.9 546.3 367.5 547.8 Q367.0 549.2 366.5 550.7 Q366.0 552.1 365.5 553.6 Q365.0 555.0 364.5 556.5 Q363.9 557.9 363.4 559.4 Q362.9 560.9 362.5 562.3 Q362.0 563.8 361.7 565.3 Q361.3 566.7 361.1 568.2 L360.8 569.7" fill="none" stroke="#6e9a86" stroke-width="5.6" opacity="0.3" stroke-linecap="round"/><path d="M381.6 487.6 Q380.1 490.3 379.4 491.7 Q378.6 493.0 377.9 494.4 Q377.2 495.7 376.5 497.1 Q375.8 498.5 375.2 499.9 Q374.6 501.3 374.1 502.7 Q373.6 504.2 373.2 505.6 Q372.8 507.1 372.5 508.6 Q372.2 510.0 372.0 511.5 Q371.8 513.1 371.7 514.6 Q371.6 516.1 371.6 517.6 Q371.6 519.2 371.7 520.7 Q371.8 522.2 371.9 523.8 Q372.0 525.3 372.1 526.9 Q372.2 528.4 372.3 529.9 Q372.4 531.4 372.4 533.0 Q372.5 534.5 372.4 536.0 Q372.4 537.5 372.2 539.0 Q372.1 540.4 371.8 541.9 Q371.6 543.4 371.2 544.8 Q370.9 546.3 370.5 547.8 Q370.0 549.2 369.5 550.7 Q369.0 552.1 368.5 553.6 Q368.0 555.0 367.5 556.5 Q366.9 557.9 366.4 559.4 Q365.9 560.9 365.5 562.3 Q365.0 563.8 364.7 565.3 Q364.3 566.7 364.1 568.2 L363.8 569.7" fill="none" stroke="#bfe6d2" stroke-width="2.6" opacity="0.3" stroke-linecap="round"/><path d="M593.9 343.6 Q595.2 346.5 595.7 347.9 Q596.3 349.4 596.7 350.8 Q597.1 352.3 597.4 353.8 Q597.6 355.3 597.7 356.8 Q597.8 358.3 597.7 359.9 Q597.7 361.4 597.5 363.0 Q597.3 364.5 597.0 366.1 Q596.8 367.7 596.5 369.3 Q596.2 370.8 596.0 372.4 Q595.7 374.0 595.5 375.5 Q595.4 377.1 595.3 378.6 Q595.3 380.2 595.4 381.7 Q595.5 383.2 595.7 384.7 Q596.0 386.2 596.4 387.7 Q596.9 389.1 597.4 390.6 Q598.0 392.0 598.7 393.5 Q599.3 394.9 600.1 396.3 Q600.8 397.8 601.5 399.2 Q602.3 400.6 602.9 402.0 Q603.6 403.5 604.2 404.9 Q604.8 406.4 605.2 407.8 Q605.6 409.3 605.9 410.8 Q606.2 412.3 606.3 413.8 Q606.4 415.3 606.4 416.9 Q606.3 418.4 606.2 420.0 Q606.0 421.5 605.8 423.1 Q605.5 424.7 605.2 426.2 Q605.0 427.8 604.7 429.4 Q604.4 431.0 604.2 432.5 L604.0 434.1" fill="none" stroke="#6e9a86" stroke-width="5.7" opacity="0.3" stroke-linecap="round"/><path d="M596.9 343.6 Q598.2 346.5 598.7 347.9 Q599.3 349.4 599.7 350.8 Q600.1 352.3 600.4 353.8 Q600.6 355.3 600.7 356.8 Q600.8 358.3 600.7 359.9 Q600.7 361.4 600.5 363.0 Q600.3 364.5 600.0 366.1 Q599.8 367.7 599.5 369.3 Q599.2 370.8 599.0 372.4 Q598.7 374.0 598.5 375.5 Q598.4 377.1 598.3 378.6 Q598.3 380.2 598.4 381.7 Q598.5 383.2 598.7 384.7 Q599.0 386.2 599.4 387.7 Q599.9 389.1 600.4 390.6 Q601.0 392.0 601.7 393.5 Q602.3 394.9 603.1 396.3 Q603.8 397.8 604.5 399.2 Q605.3 400.6 605.9 402.0 Q606.6 403.5 607.2 404.9 Q607.8 406.4 608.2 407.8 Q608.6 409.3 608.9 410.8 Q609.2 412.3 609.3 413.8 Q609.4 415.3 609.4 416.9 Q609.3 418.4 609.2 420.0 Q609.0 421.5 608.8 423.1 Q608.5 424.7 608.2 426.2 Q608.0 427.8 607.7 429.4 Q607.4 431.0 607.2 432.5 L607.0 434.1" fill="none" stroke="#bfe6d2" stroke-width="2.3" opacity="0.3" stroke-linecap="round"/><path d="M416.8 592.5 Q415.8 595.4 415.2 596.8 Q414.6 598.3 413.9 599.7 Q413.2 601.2 412.6 602.6 Q411.9 604.1 411.3 605.5 Q410.6 606.9 410.1 608.4 Q409.5 609.8 409.1 611.3 Q408.7 612.8 408.4 614.3 Q408.1 615.7 408.0 617.2 Q407.8 618.7 407.9 620.2 Q407.9 621.7 408.1 623.3 Q408.2 624.8 408.5 626.3 Q408.8 627.9 409.2 629.4 Q409.5 630.9 409.9 632.5 Q410.3 634.0 410.6 635.6 Q411.0 637.1 411.3 638.7 Q411.5 640.2 411.7 641.7 Q411.9 643.2 411.9 644.8 L412.0 646.3" fill="none" stroke="#6e9a86" stroke-width="5.7" opacity="0.3" stroke-linecap="round"/><path d="M419.8 592.5 Q418.8 595.4 418.2 596.8 Q417.6 598.3 416.9 599.7 Q416.2 601.2 415.6 602.6 Q414.9 604.1 414.3 605.5 Q413.6 606.9 413.1 608.4 Q412.5 609.8 412.1 611.3 Q411.7 612.8 411.4 614.3 Q411.1 615.7 411.0 617.2 Q410.8 618.7 410.9 620.2 Q410.9 621.7 411.1 623.3 Q411.2 624.8 411.5 626.3 Q411.8 627.9 412.2 629.4 Q412.5 630.9 412.9 632.5 Q413.3 634.0 413.6 635.6 Q414.0 637.1 414.3 638.7 Q414.5 640.2 414.7 641.7 Q414.9 643.2 414.9 644.8 L415.0 646.3" fill="none" stroke="#bfe6d2" stroke-width="2.1" opacity="0.3" stroke-linecap="round"/><path d="M389.5 521.7 Q389.4 524.7 389.3 526.2 Q389.3 527.7 389.2 529.2 Q389.0 530.7 388.9 532.2 Q388.7 533.6 388.5 535.1 Q388.2 536.6 387.9 538.1 Q387.6 539.5 387.3 541.0 Q387.0 542.5 386.6 543.9 Q386.2 545.4 385.8 546.8 Q385.4 548.3 384.9 549.8 Q384.5 551.2 384.1 552.7 Q383.8 554.2 383.4 555.6 Q383.0 557.1 382.7 558.6 Q382.4 560.1 382.2 561.6 Q382.0 563.0 381.8 564.5 Q381.6 566.0 381.5 567.5 Q381.5 569.0 381.5 570.5 Q381.4 572.0 381.5 573.5 Q381.5 575.1 381.6 576.6 L381.7 578.1" fill="none" stroke="#6e9a86" stroke-width="5.5" opacity="0.3" stroke-linecap="round"/><path d="M392.5 521.7 Q392.4 524.7 392.3 526.2 Q392.3 527.7 392.2 529.2 Q392.0 530.7 391.9 532.2 Q391.7 533.6 391.5 535.1 Q391.2 536.6 390.9 538.1 Q390.6 539.5 390.3 541.0 Q390.0 542.5 389.6 543.9 Q389.2 545.4 388.8 546.8 Q388.4 548.3 387.9 549.8 Q387.5 551.2 387.1 552.7 Q386.8 554.2 386.4 555.6 Q386.0 557.1 385.7 558.6 Q385.4 560.1 385.2 561.6 Q385.0 563.0 384.8 564.5 Q384.6 566.0 384.5 567.5 Q384.5 569.0 384.5 570.5 Q384.4 572.0 384.5 573.5 Q384.5 575.1 384.6 576.6 L384.7 578.1" fill="none" stroke="#bfe6d2" stroke-width="2.4" opacity="0.3" stroke-linecap="round"/><path d="M573.3 305.0 Q573.3 308.0 573.1 309.6 Q573.0 311.2 572.8 312.7 Q572.6 314.3 572.3 315.9 Q572.1 317.4 571.8 319.0 Q571.6 320.6 571.5 322.1 Q571.3 323.7 571.3 325.2 Q571.2 326.7 571.3 328.3 Q571.4 329.8 571.7 331.3 Q571.9 332.8 572.3 334.3 Q572.7 335.7 573.2 337.2 Q573.8 338.6 574.4 340.1 Q575.0 341.5 575.7 343.0 Q576.4 344.4 577.1 345.8 Q577.8 347.2 578.4 348.7 Q579.1 350.1 579.6 351.6 Q580.2 353.0 580.6 354.5 Q581.1 356.0 581.4 357.4 Q581.6 358.9 581.8 360.4 Q581.9 362.0 581.9 363.5 Q581.9 365.0 581.8 366.6 Q581.7 368.1 581.5 369.7 L581.3 371.3" fill="none" stroke="#6e9a86" stroke-width="3.1" opacity="0.3" stroke-linecap="round"/><path d="M576.3 305.0 Q576.3 308.0 576.1 309.6 Q576.0 311.2 575.8 312.7 Q575.6 314.3 575.3 315.9 Q575.1 317.4 574.8 319.0 Q574.6 320.6 574.5 322.1 Q574.3 323.7 574.3 325.2 Q574.2 326.7 574.3 328.3 Q574.4 329.8 574.7 331.3 Q574.9 332.8 575.3 334.3 Q575.7 335.7 576.2 337.2 Q576.8 338.6 577.4 340.1 Q578.0 341.5 578.7 343.0 Q579.4 344.4 580.1 345.8 Q580.8 347.2 581.4 348.7 Q582.1 350.1 582.6 351.6 Q583.2 353.0 583.6 354.5 Q584.1 356.0 584.4 357.4 Q584.6 358.9 584.8 360.4 Q584.9 362.0 584.9 363.5 Q584.9 365.0 584.8 366.6 Q584.7 368.1 584.5 369.7 L584.3 371.3" fill="none" stroke="#bfe6d2" stroke-width="2.2" opacity="0.3" stroke-linecap="round"/><path d="M474.5 532.6 Q473.7 535.5 473.4 537.0 Q473.2 538.5 473.1 540.0 Q472.9 541.5 473.0 543.0 Q473.0 544.6 473.1 546.1 Q473.2 547.6 473.5 549.2 Q473.7 550.7 474.0 552.2 Q474.2 553.8 474.5 555.3 Q474.8 556.8 475.0 558.4 Q475.3 559.9 475.5 561.4 Q475.6 563.0 475.7 564.5 Q475.8 566.0 475.7 567.5 Q475.7 569.0 475.5 570.5 Q475.3 572.0 475.0 573.4 Q474.7 574.9 474.3 576.4 Q473.9 577.9 473.4 579.3 Q472.9 580.8 472.3 582.2 Q471.7 583.7 471.2 585.1 Q470.6 586.6 470.0 588.0 Q469.5 589.5 469.0 590.9 Q468.5 592.4 468.0 593.9 Q467.6 595.3 467.3 596.8 Q467.0 598.3 466.9 599.8 Q466.7 601.3 466.7 602.8 Q466.6 604.3 466.7 605.8 L466.8 607.3" fill="none" stroke="#6e9a86" stroke-width="3.6" opacity="0.3" stroke-linecap="round"/><path d="M477.5 532.6 Q476.7 535.5 476.4 537.0 Q476.2 538.5 476.1 540.0 Q475.9 541.5 476.0 543.0 Q476.0 544.6 476.1 546.1 Q476.2 547.6 476.5 549.2 Q476.7 550.7 477.0 552.2 Q477.2 553.8 477.5 555.3 Q477.8 556.8 478.0 558.4 Q478.3 559.9 478.5 561.4 Q478.6 563.0 478.7 564.5 Q478.8 566.0 478.7 567.5 Q478.7 569.0 478.5 570.5 Q478.3 572.0 478.0 573.4 Q477.7 574.9 477.3 576.4 Q476.9 577.9 476.4 579.3 Q475.9 580.8 475.3 582.2 Q474.7 583.7 474.2 585.1 Q473.6 586.6 473.0 588.0 Q472.5 589.5 472.0 590.9 Q471.5 592.4 471.0 593.9 Q470.6 595.3 470.3 596.8 Q470.0 598.3 469.9 599.8 Q469.7 601.3 469.7 602.8 Q469.6 604.3 469.7 605.8 L469.8 607.3" fill="none" stroke="#bfe6d2" stroke-width="2.1" opacity="0.3" stroke-linecap="round"/><path d="M498.4 313.5 Q496.4 315.7 495.4 316.9 Q494.5 318.0 493.5 319.1 Q492.5 320.3 491.5 321.4 Q490.5 322.5 489.5 323.6 Q488.5 324.7 487.4 325.8 Q486.4 326.9 485.4 328.0 Q484.4 329.0 483.3 330.1 Q482.3 331.2 481.2 332.2 Q480.2 333.3 479.1 334.3 Q478.0 335.4 476.9 336.4 Q475.9 337.5 474.8 338.5 Q473.7 339.5 472.6 340.6 Q471.5 341.6 470.4 342.6 Q469.3 343.6 468.2 344.7 Q467.1 345.7 466.0 346.7 Q464.9 347.8 463.8 348.8 L462.7 349.9" fill="none" stroke="#6e9a86" stroke-width="5.5" opacity="0.3" stroke-linecap="round"/><path d="M501.4 313.5 Q499.4 315.7 498.4 316.9 Q497.5 318.0 496.5 319.1 Q495.5 320.3 494.5 321.4 Q493.5 322.5 492.5 323.6 Q491.5 324.7 490.4 325.8 Q489.4 326.9 488.4 328.0 Q487.4 329.0 486.3 330.1 Q485.3 331.2 484.2 332.2 Q483.2 333.3 482.1 334.3 Q481.0 335.4 479.9 336.4 Q478.9 337.5 477.8 338.5 Q476.7 339.5 475.6 340.6 Q474.5 341.6 473.4 342.6 Q472.3 343.6 471.2 344.7 Q470.1 345.7 469.0 346.7 Q467.9 347.8 466.8 348.8 L465.7 349.9" fill="none" stroke="#bfe6d2" stroke-width="3.0" opacity="0.3" stroke-linecap="round"/><path d="M460.7 535.1 Q459.9 538.0 459.6 539.5 Q459.3 541.0 459.1 542.4 Q458.9 543.9 458.9 545.5 Q458.8 547.0 458.8 548.5 Q458.9 550.0 459.0 551.5 Q459.1 553.1 459.3 554.6 Q459.5 556.1 459.8 557.6 Q460.0 559.2 460.2 560.7 Q460.4 562.2 460.5 563.7 Q460.7 565.3 460.8 566.8 Q460.9 568.3 460.9 569.8 Q460.9 571.3 460.8 572.8 Q460.7 574.3 460.5 575.8 Q460.2 577.3 459.9 578.8 Q459.6 580.2 459.2 581.7 Q458.8 583.2 458.3 584.6 Q457.8 586.1 457.3 587.5 Q456.8 589.0 456.3 590.5 Q455.8 591.9 455.3 593.4 L454.8 594.8" fill="none" stroke="#6e9a86" stroke-width="4.5" opacity="0.3" stroke-linecap="round"/><path d="M463.7 535.1 Q462.9 538.0 462.6 539.5 Q462.3 541.0 462.1 542.4 Q461.9 543.9 461.9 545.5 Q461.8 547.0 461.8 548.5 Q461.9 550.0 462.0 551.5 Q462.1 553.1 462.3 554.6 Q462.5 556.1 462.8 557.6 Q463.0 559.2 463.2 560.7 Q463.4 562.2 463.5 563.7 Q463.7 565.3 463.8 566.8 Q463.9 568.3 463.9 569.8 Q463.9 571.3 463.8 572.8 Q463.7 574.3 463.5 575.8 Q463.2 577.3 462.9 578.8 Q462.6 580.2 462.2 581.7 Q461.8 583.2 461.3 584.6 Q460.8 586.1 460.3 587.5 Q459.8 589.0 459.3 590.5 Q458.8 591.9 458.3 593.4 L457.8 594.8" fill="none" stroke="#bfe6d2" stroke-width="2.4" opacity="0.3" stroke-linecap="round"/><path d="M510.1 266.8 Q507.6 268.6 506.4 269.4 Q505.2 270.3 503.9 271.2 Q502.7 272.0 501.4 272.8 Q500.2 273.7 498.9 274.5 Q497.6 275.3 496.4 276.2 Q495.1 277.0 493.8 277.8 Q492.5 278.6 491.2 279.4 Q490.0 280.3 488.7 281.1 Q487.4 281.9 486.2 282.7 Q484.9 283.5 483.6 284.4 Q482.4 285.2 481.1 286.1 Q479.8 286.9 478.6 287.8 Q477.4 288.6 476.1 289.5 Q474.9 290.4 473.7 291.3 Q472.5 292.2 471.3 293.1 Q470.1 294.0 468.9 295.0 Q467.7 295.9 466.6 296.9 Q465.5 297.9 464.4 298.9 Q463.2 300.0 462.2 301.0 Q461.1 302.1 460.0 303.1 Q459.0 304.2 457.9 305.3 Q456.9 306.4 455.9 307.6 Q454.9 308.7 454.0 309.9 Q453.0 311.1 452.1 312.2 Q451.1 313.4 450.2 314.7 Q449.3 315.9 448.4 317.1 Q447.5 318.3 446.6 319.6 Q445.8 320.8 444.9 322.1 L444.0 323.3" fill="none" stroke="#6e9a86" stroke-width="3.5" opacity="0.3" stroke-linecap="round"/><path d="M513.1 266.8 Q510.6 268.6 509.4 269.4 Q508.2 270.3 506.9 271.2 Q505.7 272.0 504.4 272.8 Q503.2 273.7 501.9 274.5 Q500.6 275.3 499.4 276.2 Q498.1 277.0 496.8 277.8 Q495.5 278.6 494.2 279.4 Q493.0 280.3 491.7 281.1 Q490.4 281.9 489.2 282.7 Q487.9 283.5 486.6 284.4 Q485.4 285.2 484.1 286.1 Q482.8 286.9 481.6 287.8 Q480.4 288.6 479.1 289.5 Q477.9 290.4 476.7 291.3 Q475.5 292.2 474.3 293.1 Q473.1 294.0 471.9 295.0 Q470.7 295.9 469.6 296.9 Q468.5 297.9 467.4 298.9 Q466.2 300.0 465.2 301.0 Q464.1 302.1 463.0 303.1 Q462.0 304.2 460.9 305.3 Q459.9 306.4 458.9 307.6 Q457.9 308.7 457.0 309.9 Q456.0 311.1 455.1 312.2 Q454.1 313.4 453.2 314.7 Q452.3 315.9 451.4 317.1 Q450.5 318.3 449.6 319.6 Q448.8 320.8 447.9 322.1 L447.0 323.3" fill="none" stroke="#bfe6d2" stroke-width="2.5" opacity="0.3" stroke-linecap="round"/><path d="M398.0 588.3 Q398.0 591.4 397.8 592.8 Q397.6 594.3 397.3 595.8 Q397.0 597.3 396.5 598.8 Q396.1 600.2 395.6 601.7 Q395.0 603.1 394.4 604.6 Q393.9 606.0 393.2 607.5 Q392.6 608.9 392.0 610.4 Q391.5 611.8 390.9 613.3 Q390.4 614.7 390.0 616.2 Q389.6 617.7 389.3 619.1 Q389.0 620.6 388.8 622.1 Q388.6 623.6 388.6 625.1 Q388.6 626.6 388.7 628.1 Q388.8 629.6 389.0 631.2 Q389.2 632.7 389.4 634.2 Q389.7 635.8 390.0 637.3 Q390.3 638.8 390.6 640.4 Q390.9 641.9 391.2 643.4 Q391.4 645.0 391.6 646.5 Q391.8 648.0 391.8 649.5 Q391.9 651.0 391.8 652.5 Q391.7 654.0 391.5 655.5 Q391.3 657.0 390.9 658.5 Q390.5 660.0 390.1 661.4 Q389.6 662.9 389.1 664.3 Q388.5 665.8 387.9 667.2 Q387.3 668.7 386.7 670.1 Q386.1 671.6 385.5 673.0 Q384.9 674.5 384.4 675.9 L384.0 677.4" fill="none" stroke="#6e9a86" stroke-width="5.4" opacity="0.3" stroke-linecap="round"/><path d="M401.0 588.3 Q401.0 591.4 400.8 592.8 Q400.6 594.3 400.3 595.8 Q400.0 597.3 399.5 598.8 Q399.1 600.2 398.6 601.7 Q398.0 603.1 397.4 604.6 Q396.9 606.0 396.2 607.5 Q395.6 608.9 395.0 610.4 Q394.5 611.8 393.9 613.3 Q393.4 614.7 393.0 616.2 Q392.6 617.7 392.3 619.1 Q392.0 620.6 391.8 622.1 Q391.6 623.6 391.6 625.1 Q391.6 626.6 391.7 628.1 Q391.8 629.6 392.0 631.2 Q392.2 632.7 392.4 634.2 Q392.7 635.8 393.0 637.3 Q393.3 638.8 393.6 640.4 Q393.9 641.9 394.2 643.4 Q394.4 645.0 394.6 646.5 Q394.8 648.0 394.8 649.5 Q394.9 651.0 394.8 652.5 Q394.7 654.0 394.5 655.5 Q394.3 657.0 393.9 658.5 Q393.5 660.0 393.1 661.4 Q392.6 662.9 392.1 664.3 Q391.5 665.8 390.9 667.2 Q390.3 668.7 389.7 670.1 Q389.1 671.6 388.5 673.0 Q387.9 674.5 387.4 675.9 L387.0 677.4" fill="none" stroke="#bfe6d2" stroke-width="2.4" opacity="0.3" stroke-linecap="round"/><path d="M547.3 284.1 Q545.2 286.3 544.2 287.3 Q543.2 288.4 542.1 289.5 Q541.1 290.6 540.1 291.7 Q539.0 292.8 538.0 294.0 Q537.0 295.1 536.0 296.2 Q535.0 297.3 534.0 298.5 Q533.0 299.6 532.0 300.7 Q531.0 301.9 530.0 303.0 Q529.0 304.1 528.1 305.3 Q527.1 306.4 526.1 307.5 Q525.1 308.7 524.1 309.8 Q523.1 310.9 522.1 312.0 Q521.1 313.1 520.1 314.2 Q519.0 315.3 518.0 316.4 Q517.0 317.5 515.9 318.5 Q514.9 319.6 513.8 320.7 Q512.8 321.7 511.7 322.7 Q510.6 323.8 509.5 324.8 Q508.4 325.8 507.3 326.8 Q506.2 327.8 505.1 328.8 L504.0 329.8" fill="none" stroke="#6e9a86" stroke-width="3.0" opacity="0.3" stroke-linecap="round"/><path d="M550.3 284.1 Q548.2 286.3 547.2 287.3 Q546.2 288.4 545.1 289.5 Q544.1 290.6 543.1 291.7 Q542.0 292.8 541.0 294.0 Q540.0 295.1 539.0 296.2 Q538.0 297.3 537.0 298.5 Q536.0 299.6 535.0 300.7 Q534.0 301.9 533.0 303.0 Q532.0 304.1 531.1 305.3 Q530.1 306.4 529.1 307.5 Q528.1 308.7 527.1 309.8 Q526.1 310.9 525.1 312.0 Q524.1 313.1 523.1 314.2 Q522.0 315.3 521.0 316.4 Q520.0 317.5 518.9 318.5 Q517.9 319.6 516.8 320.7 Q515.8 321.7 514.7 322.7 Q513.6 323.8 512.5 324.8 Q511.4 325.8 510.3 326.8 Q509.2 327.8 508.1 328.8 L507.0 329.8" fill="none" stroke="#bfe6d2" stroke-width="2.4" opacity="0.3" stroke-linecap="round"/><path d="M388.4 600.3 Q387.6 603.2 387.2 604.7 Q386.7 606.1 386.3 607.6 Q385.8 609.0 385.3 610.5 Q384.9 612.0 384.4 613.4 Q384.0 614.9 383.6 616.4 Q383.2 617.8 382.8 619.3 Q382.5 620.8 382.3 622.3 Q382.1 623.7 381.9 625.2 Q381.8 626.7 381.8 628.2 Q381.7 629.7 381.8 631.3 Q381.8 632.8 381.9 634.3 Q382.1 635.8 382.2 637.3 Q382.4 638.9 382.6 640.4 Q382.7 641.9 382.9 643.4 Q383.1 645.0 383.2 646.5 Q383.3 648.0 383.4 649.5 Q383.4 651.0 383.4 652.5 Q383.3 654.0 383.2 655.5 Q383.1 657.0 382.8 658.5 Q382.6 660.0 382.3 661.5 Q382.0 662.9 381.6 664.4 Q381.2 665.9 380.7 667.3 Q380.3 668.8 379.8 670.3 Q379.3 671.7 378.9 673.2 Q378.4 674.6 378.0 676.1 Q377.5 677.6 377.1 679.0 Q376.8 680.5 376.5 682.0 L376.2 683.5" fill="none" stroke="#6e9a86" stroke-width="5.0" opacity="0.3" stroke-linecap="round"/><path d="M391.4 600.3 Q390.6 603.2 390.2 604.7 Q389.7 606.1 389.3 607.6 Q388.8 609.0 388.3 610.5 Q387.9 612.0 387.4 613.4 Q387.0 614.9 386.6 616.4 Q386.2 617.8 385.8 619.3 Q385.5 620.8 385.3 622.3 Q385.1 623.7 384.9 625.2 Q384.8 626.7 384.8 628.2 Q384.7 629.7 384.8 631.3 Q384.8 632.8 384.9 634.3 Q385.1 635.8 385.2 637.3 Q385.4 638.9 385.6 640.4 Q385.7 641.9 385.9 643.4 Q386.1 645.0 386.2 646.5 Q386.3 648.0 386.4 649.5 Q386.4 651.0 386.4 652.5 Q386.3 654.0 386.2 655.5 Q386.1 657.0 385.8 658.5 Q385.6 660.0 385.3 661.5 Q385.0 662.9 384.6 664.4 Q384.2 665.9 383.7 667.3 Q383.3 668.8 382.8 670.3 Q382.3 671.7 381.9 673.2 Q381.4 674.6 381.0 676.1 Q380.5 677.6 380.1 679.0 Q379.8 680.5 379.5 682.0 L379.2 683.5" fill="none" stroke="#bfe6d2" stroke-width="2.6" opacity="0.3" stroke-linecap="round"/><path d="M486.1 400.3 Q484.0 402.6 483.0 403.7 Q481.9 404.9 481.0 406.1 Q480.0 407.2 479.0 408.4 Q478.1 409.6 477.2 410.9 Q476.3 412.1 475.5 413.4 Q474.7 414.6 473.9 416.0 Q473.2 417.3 472.5 418.6 Q471.8 420.0 471.2 421.4 Q470.6 422.8 470.1 424.2 Q469.6 425.6 469.2 427.1 Q468.7 428.6 468.3 430.0 Q468.0 431.5 467.6 433.0 Q467.3 434.5 467.0 436.0 Q466.7 437.5 466.4 439.0 Q466.0 440.5 465.7 442.0 Q465.4 443.5 465.1 445.0 Q464.7 446.5 464.3 447.9 Q463.9 449.4 463.5 450.8 Q463.0 452.2 462.5 453.6 Q461.9 455.0 461.3 456.4 Q460.7 457.7 460.1 459.0 Q459.4 460.4 458.6 461.7 Q457.9 463.0 457.1 464.3 Q456.3 465.6 455.5 466.9 Q454.6 468.2 453.8 469.5 Q453.0 470.8 452.1 472.1 Q451.3 473.4 450.5 474.8 Q449.8 476.1 449.0 477.5 Q448.3 478.8 447.7 480.2 Q447.1 481.6 446.5 483.0 Q446.0 484.4 445.6 485.9 Q445.2 487.3 444.9 488.8 Q444.6 490.3 444.4 491.8 Q444.2 493.3 444.1 494.9 Q444.0 496.4 444.0 497.9 L443.9 499.5" fill="none" stroke="#6e9a86" stroke-width="5.1" opacity="0.3" stroke-linecap="round"/><path d="M489.1 400.3 Q487.0 402.6 486.0 403.7 Q484.9 404.9 484.0 406.1 Q483.0 407.2 482.0 408.4 Q481.1 409.6 480.2 410.9 Q479.3 412.1 478.5 413.4 Q477.7 414.6 476.9 416.0 Q476.2 417.3 475.5 418.6 Q474.8 420.0 474.2 421.4 Q473.6 422.8 473.1 424.2 Q472.6 425.6 472.2 427.1 Q471.7 428.6 471.3 430.0 Q471.0 431.5 470.6 433.0 Q470.3 434.5 470.0 436.0 Q469.7 437.5 469.4 439.0 Q469.0 440.5 468.7 442.0 Q468.4 443.5 468.1 445.0 Q467.7 446.5 467.3 447.9 Q466.9 449.4 466.5 450.8 Q466.0 452.2 465.5 453.6 Q464.9 455.0 464.3 456.4 Q463.7 457.7 463.1 459.0 Q462.4 460.4 461.6 461.7 Q460.9 463.0 460.1 464.3 Q459.3 465.6 458.5 466.9 Q457.6 468.2 456.8 469.5 Q456.0 470.8 455.1 472.1 Q454.3 473.4 453.5 474.8 Q452.8 476.1 452.0 477.5 Q451.3 478.8 450.7 480.2 Q450.1 481.6 449.5 483.0 Q449.0 484.4 448.6 485.9 Q448.2 487.3 447.9 488.8 Q447.6 490.3 447.4 491.8 Q447.2 493.3 447.1 494.9 Q447.0 496.4 447.0 497.9 L446.9 499.5" fill="none" stroke="#bfe6d2" stroke-width="2.8" opacity="0.3" stroke-linecap="round"/><path d="M395.9 405.2 Q394.6 408.0 393.9 409.3 Q393.3 410.6 392.6 412.0 Q391.9 413.3 391.2 414.6 Q390.5 415.9 389.7 417.2 Q389.0 418.5 388.2 419.8 Q387.4 421.0 386.6 422.3 Q385.7 423.6 384.9 424.8 Q384.1 426.1 383.2 427.3 Q382.4 428.6 381.5 429.8 Q380.6 431.1 379.8 432.3 Q378.9 433.6 378.1 434.9 Q377.3 436.1 376.5 437.4 Q375.7 438.7 374.9 440.0 L374.2 441.3" fill="none" stroke="#6e9a86" stroke-width="4.1" opacity="0.3" stroke-linecap="round"/><path d="M398.9 405.2 Q397.6 408.0 396.9 409.3 Q396.3 410.6 395.6 412.0 Q394.9 413.3 394.2 414.6 Q393.5 415.9 392.7 417.2 Q392.0 418.5 391.2 419.8 Q390.4 421.0 389.6 422.3 Q388.7 423.6 387.9 424.8 Q387.1 426.1 386.2 427.3 Q385.4 428.6 384.5 429.8 Q383.6 431.1 382.8 432.3 Q381.9 433.6 381.1 434.9 Q380.3 436.1 379.5 437.4 Q378.7 438.7 377.9 440.0 L377.2 441.3" fill="none" stroke="#bfe6d2" stroke-width="2.1" opacity="0.3" stroke-linecap="round"/><path d="M394.7 586.2 Q394.8 589.2 394.8 590.8 Q394.7 592.3 394.5 593.7 Q394.3 595.2 394.0 596.7 Q393.7 598.2 393.4 599.7 Q393.0 601.1 392.5 602.6 Q392.0 604.0 391.5 605.5 Q391.0 607.0 390.5 608.4 Q389.9 609.9 389.4 611.3 Q388.9 612.8 388.5 614.2 Q388.0 615.7 387.7 617.2 Q387.3 618.6 387.0 620.1 Q386.7 621.6 386.6 623.1 Q386.4 624.6 386.4 626.1 Q386.3 627.6 386.4 629.1 Q386.5 630.6 386.6 632.1 Q386.8 633.7 387.0 635.2 Q387.2 636.7 387.4 638.3 Q387.6 639.8 387.8 641.3 Q388.1 642.8 388.2 644.4 Q388.4 645.9 388.5 647.4 Q388.6 648.9 388.6 650.4 Q388.6 651.9 388.5 653.4 Q388.4 654.9 388.2 656.4 Q388.0 657.9 387.7 659.4 Q387.3 660.9 386.9 662.3 L386.5 663.8" fill="none" stroke="#6e9a86" stroke-width="5.9" opacity="0.3" stroke-linecap="round"/><path d="M397.7 586.2 Q397.8 589.2 397.8 590.8 Q397.7 592.3 397.5 593.7 Q397.3 595.2 397.0 596.7 Q396.7 598.2 396.4 599.7 Q396.0 601.1 395.5 602.6 Q395.0 604.0 394.5 605.5 Q394.0 607.0 393.5 608.4 Q392.9 609.9 392.4 611.3 Q391.9 612.8 391.5 614.2 Q391.0 615.7 390.7 617.2 Q390.3 618.6 390.0 620.1 Q389.7 621.6 389.6 623.1 Q389.4 624.6 389.4 626.1 Q389.3 627.6 389.4 629.1 Q389.5 630.6 389.6 632.1 Q389.8 633.7 390.0 635.2 Q390.2 636.7 390.4 638.3 Q390.6 639.8 390.8 641.3 Q391.1 642.8 391.2 644.4 Q391.4 645.9 391.5 647.4 Q391.6 648.9 391.6 650.4 Q391.6 651.9 391.5 653.4 Q391.4 654.9 391.2 656.4 Q391.0 657.9 390.7 659.4 Q390.3 660.9 389.9 662.3 L389.5 663.8" fill="none" stroke="#bfe6d2" stroke-width="2.6" opacity="0.3" stroke-linecap="round"/><path d="M578.0 287.3 Q579.3 290.2 579.9 291.6 Q580.5 293.1 580.9 294.5 Q581.4 296.0 581.7 297.5 Q582.0 299.0 582.1 300.5 Q582.2 302.0 582.2 303.5 Q582.2 305.1 582.0 306.6 Q581.9 308.2 581.7 309.8 Q581.4 311.3 581.2 312.9 Q580.9 314.5 580.7 316.0 Q580.4 317.6 580.2 319.2 Q580.0 320.7 580.0 322.3 Q579.9 323.8 579.9 325.4 Q580.0 326.9 580.2 328.4 Q580.5 329.9 580.9 331.4 Q581.2 332.8 581.8 334.3 Q582.3 335.7 582.9 337.2 Q583.6 338.6 584.3 340.0 Q585.0 341.5 585.7 342.9 Q586.4 344.3 587.1 345.8 Q587.7 347.2 588.3 348.6 Q588.9 350.1 589.4 351.5 Q589.9 353.0 590.2 354.5 Q590.5 356.0 590.7 357.5 Q590.8 359.0 590.8 360.5 Q590.8 362.1 590.7 363.6 Q590.6 365.2 590.4 366.7 L590.2 368.3" fill="none" stroke="#6e9a86" stroke-width="3.1" opacity="0.3" stroke-linecap="round"/><path d="M581.0 287.3 Q582.3 290.2 582.9 291.6 Q583.5 293.1 583.9 294.5 Q584.4 296.0 584.7 297.5 Q585.0 299.0 585.1 300.5 Q585.2 302.0 585.2 303.5 Q585.2 305.1 585.0 306.6 Q584.9 308.2 584.7 309.8 Q584.4 311.3 584.2 312.9 Q583.9 314.5 583.7 316.0 Q583.4 317.6 583.2 319.2 Q583.0 320.7 583.0 322.3 Q582.9 323.8 582.9 325.4 Q583.0 326.9 583.2 328.4 Q583.5 329.9 583.9 331.4 Q584.2 332.8 584.8 334.3 Q585.3 335.7 585.9 337.2 Q586.6 338.6 587.3 340.0 Q588.0 341.5 588.7 342.9 Q589.4 344.3 590.1 345.8 Q590.7 347.2 591.3 348.6 Q591.9 350.1 592.4 351.5 Q592.9 353.0 593.2 354.5 Q593.5 356.0 593.7 357.5 Q593.8 359.0 593.8 360.5 Q593.8 362.1 593.7 363.6 Q593.6 365.2 593.4 366.7 L593.2 368.3" fill="none" stroke="#bfe6d2" stroke-width="2.9" opacity="0.3" stroke-linecap="round"/><path d="M364.1 430.5 Q362.4 433.0 361.5 434.2 Q360.6 435.4 359.7 436.7 Q358.8 437.9 357.9 439.1 Q357.0 440.4 356.1 441.7 Q355.3 442.9 354.5 444.2 Q353.6 445.5 352.9 446.8 Q352.1 448.2 351.5 449.5 Q350.8 450.9 350.2 452.3 Q349.6 453.7 349.1 455.1 Q348.6 456.5 348.2 458.0 Q347.8 459.4 347.5 460.9 Q347.2 462.4 346.9 463.9 Q346.7 465.4 346.5 466.9 Q346.3 468.5 346.1 470.0 Q345.9 471.5 345.8 473.0 Q345.6 474.6 345.4 476.1 L345.3 477.6" fill="none" stroke="#6e9a86" stroke-width="4.8" opacity="0.3" stroke-linecap="round"/><path d="M367.1 430.5 Q365.4 433.0 364.5 434.2 Q363.6 435.4 362.7 436.7 Q361.8 437.9 360.9 439.1 Q360.0 440.4 359.1 441.7 Q358.3 442.9 357.5 444.2 Q356.6 445.5 355.9 446.8 Q355.1 448.2 354.5 449.5 Q353.8 450.9 353.2 452.3 Q352.6 453.7 352.1 455.1 Q351.6 456.5 351.2 458.0 Q350.8 459.4 350.5 460.9 Q350.2 462.4 349.9 463.9 Q349.7 465.4 349.5 466.9 Q349.3 468.5 349.1 470.0 Q348.9 471.5 348.8 473.0 Q348.6 474.6 348.4 476.1 L348.3 477.6" fill="none" stroke="#bfe6d2" stroke-width="2.1" opacity="0.3" stroke-linecap="round"/><path d="M481.9 474.6 Q481.0 477.5 480.6 478.9 Q480.2 480.4 479.9 481.9 Q479.6 483.4 479.4 484.9 Q479.2 486.4 479.0 487.9 Q478.9 489.4 478.8 490.9 Q478.6 492.5 478.5 494.0 Q478.4 495.5 478.3 497.0 Q478.2 498.5 478.1 500.0 Q478.0 501.5 477.8 503.0 Q477.6 504.5 477.4 506.0 Q477.1 507.5 476.8 508.9 Q476.5 510.4 476.1 511.8 Q475.7 513.3 475.3 514.7 Q474.9 516.2 474.4 517.6 Q473.9 519.0 473.3 520.4 Q472.8 521.9 472.2 523.3 Q471.7 524.7 471.1 526.1 Q470.6 527.6 470.1 529.0 Q469.5 530.4 469.1 531.9 Q468.6 533.4 468.3 534.8 L467.9 536.3" fill="none" stroke="#6e9a86" stroke-width="5.0" opacity="0.3" stroke-linecap="round"/><path d="M484.9 474.6 Q484.0 477.5 483.6 478.9 Q483.2 480.4 482.9 481.9 Q482.6 483.4 482.4 484.9 Q482.2 486.4 482.0 487.9 Q481.9 489.4 481.8 490.9 Q481.6 492.5 481.5 494.0 Q481.4 495.5 481.3 497.0 Q481.2 498.5 481.1 500.0 Q481.0 501.5 480.8 503.0 Q480.6 504.5 480.4 506.0 Q480.1 507.5 479.8 508.9 Q479.5 510.4 479.1 511.8 Q478.7 513.3 478.3 514.7 Q477.9 516.2 477.4 517.6 Q476.9 519.0 476.3 520.4 Q475.8 521.9 475.2 523.3 Q474.7 524.7 474.1 526.1 Q473.6 527.6 473.1 529.0 Q472.5 530.4 472.1 531.9 Q471.6 533.4 471.3 534.8 L470.9 536.3" fill="none" stroke="#bfe6d2" stroke-width="2.6" opacity="0.3" stroke-linecap="round"/><path d="M404.1 518.1 Q403.9 521.1 403.8 522.6 Q403.7 524.1 403.6 525.6 Q403.4 527.1 403.2 528.5 Q403.0 530.0 402.7 531.5 Q402.5 533.0 402.2 534.4 Q401.9 535.9 401.5 537.4 Q401.2 538.8 400.8 540.3 Q400.4 541.7 400.0 543.2 Q399.6 544.7 399.2 546.1 Q398.8 547.6 398.4 549.1 Q398.0 550.5 397.7 552.0 Q397.4 553.5 397.1 555.0 Q396.8 556.5 396.6 557.9 Q396.4 559.4 396.2 560.9 Q396.1 562.4 396.0 563.9 Q395.9 565.4 395.9 566.9 Q395.9 568.4 395.9 569.9 Q395.9 571.4 396.0 573.0 Q396.1 574.5 396.2 576.0 L396.2 577.5" fill="none" stroke="#6e9a86" stroke-width="3.7" opacity="0.3" stroke-linecap="round"/><path d="M407.1 518.1 Q406.9 521.1 406.8 522.6 Q406.7 524.1 406.6 525.6 Q406.4 527.1 406.2 528.5 Q406.0 530.0 405.7 531.5 Q405.5 533.0 405.2 534.4 Q404.9 535.9 404.5 537.4 Q404.2 538.8 403.8 540.3 Q403.4 541.7 403.0 543.2 Q402.6 544.7 402.2 546.1 Q401.8 547.6 401.4 549.1 Q401.0 550.5 400.7 552.0 Q400.4 553.5 400.1 555.0 Q399.8 556.5 399.6 557.9 Q399.4 559.4 399.2 560.9 Q399.1 562.4 399.0 563.9 Q398.9 565.4 398.9 566.9 Q398.9 568.4 398.9 569.9 Q398.9 571.4 399.0 573.0 Q399.1 574.5 399.2 576.0 L399.2 577.5" fill="none" stroke="#bfe6d2" stroke-width="2.0" opacity="0.3" stroke-linecap="round"/><path d="M363.4 531.9 Q363.7 535.0 363.7 536.5 Q363.8 538.0 363.7 539.5 Q363.7 541.0 363.5 542.5 Q363.3 543.9 362.9 545.4 Q362.6 546.9 362.1 548.3 Q361.7 549.8 361.1 551.2 Q360.6 552.7 360.0 554.1 Q359.4 555.6 358.7 557.0 Q358.1 558.4 357.4 559.9 Q356.8 561.3 356.2 562.8 Q355.7 564.2 355.2 565.7 Q354.8 567.2 354.4 568.6 Q354.1 570.1 353.9 571.6 Q353.7 573.1 353.7 574.6 Q353.6 576.1 353.7 577.6 Q353.8 579.1 354.0 580.6 Q354.3 582.2 354.6 583.7 Q354.9 585.3 355.2 586.8 Q355.5 588.3 355.9 589.9 Q356.2 591.4 356.5 593.0 Q356.8 594.5 357.0 596.0 L357.2 597.5" fill="none" stroke="#6e9a86" stroke-width="5.2" opacity="0.3" stroke-linecap="round"/><path d="M366.4 531.9 Q366.7 535.0 366.7 536.5 Q366.8 538.0 366.7 539.5 Q366.7 541.0 366.5 542.5 Q366.3 543.9 365.9 545.4 Q365.6 546.9 365.1 548.3 Q364.7 549.8 364.1 551.2 Q363.6 552.7 363.0 554.1 Q362.4 555.6 361.7 557.0 Q361.1 558.4 360.4 559.9 Q359.8 561.3 359.2 562.8 Q358.7 564.2 358.2 565.7 Q357.8 567.2 357.4 568.6 Q357.1 570.1 356.9 571.6 Q356.7 573.1 356.7 574.6 Q356.6 576.1 356.7 577.6 Q356.8 579.1 357.0 580.6 Q357.3 582.2 357.6 583.7 Q357.9 585.3 358.2 586.8 Q358.5 588.3 358.9 589.9 Q359.2 591.4 359.5 593.0 Q359.8 594.5 360.0 596.0 L360.2 597.5" fill="none" stroke="#bfe6d2" stroke-width="2.1" opacity="0.3" stroke-linecap="round"/><path d="M450.3 431.3 Q449.4 434.1 448.9 435.6 Q448.5 437.1 448.1 438.5 Q447.7 440.0 447.3 441.5 Q446.9 442.9 446.6 444.4 Q446.2 445.9 445.8 447.3 Q445.5 448.8 445.1 450.3 Q444.7 451.7 444.3 453.2 Q443.8 454.6 443.4 456.0 Q442.9 457.4 442.4 458.8 Q441.9 460.2 441.3 461.6 Q440.7 463.0 440.1 464.4 Q439.5 465.7 438.8 467.1 Q438.2 468.4 437.5 469.8 Q436.8 471.1 436.1 472.5 Q435.4 473.8 434.6 475.1 Q433.9 476.5 433.2 477.8 Q432.5 479.2 431.9 480.6 Q431.2 481.9 430.6 483.3 Q430.0 484.7 429.4 486.1 Q428.9 487.5 428.4 489.0 Q427.9 490.4 427.6 491.9 Q427.2 493.3 426.9 494.8 Q426.6 496.3 426.4 497.8 Q426.2 499.3 426.0 500.8 Q425.9 502.3 425.8 503.8 Q425.7 505.4 425.6 506.9 Q425.6 508.4 425.6 509.9 Q425.5 511.5 425.5 513.0 Q425.4 514.5 425.3 516.0 Q425.2 517.5 425.1 519.0 Q425.0 520.5 424.8 522.0 Q424.6 523.4 424.3 524.9 Q424.0 526.4 423.7 527.8 Q423.3 529.3 422.9 530.7 Q422.5 532.2 422.1 533.6 L421.6 535.1" fill="none" stroke="#6e9a86" stroke-width="4.6" opacity="0.3" stroke-linecap="round"/><path d="M453.3 431.3 Q452.4 434.1 451.9 435.6 Q451.5 437.1 451.1 438.5 Q450.7 440.0 450.3 441.5 Q449.9 442.9 449.6 444.4 Q449.2 445.9 448.8 447.3 Q448.5 448.8 448.1 450.3 Q447.7 451.7 447.3 453.2 Q446.8 454.6 446.4 456.0 Q445.9 457.4 445.4 458.8 Q444.9 460.2 444.3 461.6 Q443.7 463.0 443.1 464.4 Q442.5 465.7 441.8 467.1 Q441.2 468.4 440.5 469.8 Q439.8 471.1 439.1 472.5 Q438.4 473.8 437.6 475.1 Q436.9 476.5 436.2 477.8 Q435.5 479.2 434.9 480.6 Q434.2 481.9 433.6 483.3 Q433.0 484.7 432.4 486.1 Q431.9 487.5 431.4 489.0 Q430.9 490.4 430.6 491.9 Q430.2 493.3 429.9 494.8 Q429.6 496.3 429.4 497.8 Q429.2 499.3 429.0 500.8 Q428.9 502.3 428.8 503.8 Q428.7 505.4 428.6 506.9 Q428.6 508.4 428.6 509.9 Q428.5 511.5 428.5 513.0 Q428.4 514.5 428.3 516.0 Q428.2 517.5 428.1 519.0 Q428.0 520.5 427.8 522.0 Q427.6 523.4 427.3 524.9 Q427.0 526.4 426.7 527.8 Q426.3 529.3 425.9 530.7 Q425.5 532.2 425.1 533.6 L424.6 535.1" fill="none" stroke="#bfe6d2" stroke-width="2.9" opacity="0.3" stroke-linecap="round"/><path d="M508.7 300.9 Q506.8 303.2 505.8 304.4 Q504.8 305.5 503.9 306.7 Q502.9 307.9 501.9 309.0 Q501.0 310.2 500.0 311.3 Q499.0 312.5 498.1 313.7 Q497.1 314.8 496.2 316.0 Q495.2 317.1 494.2 318.3 Q493.3 319.4 492.3 320.6 Q491.3 321.7 490.3 322.8 Q489.3 323.9 488.3 325.0 Q487.3 326.1 486.3 327.2 Q485.3 328.3 484.2 329.4 Q483.2 330.5 482.1 331.5 Q481.1 332.6 480.0 333.6 Q478.9 334.7 477.9 335.7 Q476.8 336.7 475.7 337.7 Q474.5 338.7 473.4 339.7 Q472.3 340.8 471.2 341.8 Q470.0 342.8 468.9 343.8 Q467.8 344.8 466.6 345.8 Q465.5 346.8 464.4 347.8 Q463.2 348.8 462.1 349.8 Q461.0 350.8 459.9 351.9 Q458.8 352.9 457.7 354.0 Q456.6 355.0 455.6 356.1 Q454.5 357.2 453.5 358.3 L452.5 359.4" fill="none" stroke="#6e9a86" stroke-width="3.6" opacity="0.3" stroke-linecap="round"/><path d="M511.7 300.9 Q509.8 303.2 508.8 304.4 Q507.8 305.5 506.9 306.7 Q505.9 307.9 504.9 309.0 Q504.0 310.2 503.0 311.3 Q502.0 312.5 501.1 313.7 Q500.1 314.8 499.2 316.0 Q498.2 317.1 497.2 318.3 Q496.3 319.4 495.3 320.6 Q494.3 321.7 493.3 322.8 Q492.3 323.9 491.3 325.0 Q490.3 326.1 489.3 327.2 Q488.3 328.3 487.2 329.4 Q486.2 330.5 485.1 331.5 Q484.1 332.6 483.0 333.6 Q481.9 334.7 480.9 335.7 Q479.8 336.7 478.7 337.7 Q477.5 338.7 476.4 339.7 Q475.3 340.8 474.2 341.8 Q473.0 342.8 471.9 343.8 Q470.8 344.8 469.6 345.8 Q468.5 346.8 467.4 347.8 Q466.2 348.8 465.1 349.8 Q464.0 350.8 462.9 351.9 Q461.8 352.9 460.7 354.0 Q459.6 355.0 458.6 356.1 Q457.5 357.2 456.5 358.3 L455.5 359.4" fill="none" stroke="#bfe6d2" stroke-width="2.1" opacity="0.3" stroke-linecap="round"/><path d="M483.0 303.5 Q481.1 305.8 480.1 306.9 Q479.2 308.1 478.2 309.3 Q477.3 310.5 476.4 311.7 Q475.5 312.9 474.5 314.1 Q473.6 315.3 472.7 316.5 Q471.8 317.7 470.9 319.0 Q470.0 320.2 469.1 321.4 Q468.2 322.6 467.3 323.8 Q466.4 325.0 465.5 326.2 Q464.6 327.4 463.6 328.5 Q462.7 329.7 461.8 330.9 Q460.8 332.0 459.8 333.2 Q458.9 334.3 457.9 335.4 Q456.9 336.6 455.9 337.6 Q454.9 338.7 453.8 339.8 Q452.8 340.9 451.7 341.9 Q450.7 343.0 449.6 344.0 Q448.5 345.1 447.4 346.1 Q446.3 347.1 445.2 348.1 L444.0 349.1" fill="none" stroke="#4b6f5f" stroke-width="1.1" opacity="0.59" stroke-linecap="round"/><path d="M345.4 581.1 Q345.6 584.2 345.8 585.7 Q346.1 587.3 346.3 588.8 Q346.6 590.3 346.8 591.9 Q347.1 593.4 347.3 594.9 Q347.6 596.4 347.7 598.0 Q347.9 599.5 347.9 601.0 Q348.0 602.5 348.0 604.0 Q347.9 605.5 347.7 607.0 Q347.6 608.5 347.3 610.0 Q347.0 611.5 346.6 612.9 Q346.2 614.4 345.7 615.9 Q345.2 617.3 344.6 618.8 Q344.1 620.2 343.5 621.7 Q343.0 623.1 342.4 624.6 Q341.9 626.0 341.4 627.5 Q340.9 628.9 340.5 630.4 Q340.1 631.9 339.8 633.4 Q339.5 634.8 339.4 636.3 Q339.2 637.8 339.1 639.3 Q339.1 640.8 339.2 642.3 Q339.2 643.9 339.4 645.4 Q339.6 646.9 339.8 648.4 Q340.0 650.0 340.3 651.5 Q340.6 653.0 340.8 654.6 Q341.1 656.1 341.3 657.6 Q341.5 659.2 341.6 660.7 Q341.8 662.2 341.8 663.7 L341.8 665.2" fill="none" stroke="#4b6f5f" stroke-width="1.1" opacity="0.60" stroke-linecap="round"/><path d="M555.9 328.7 Q555.8 331.8 555.9 333.3 Q556.0 334.9 556.3 336.3 Q556.6 337.8 557.1 339.3 Q557.6 340.8 558.2 342.2 Q558.8 343.6 559.6 345.1 Q560.3 346.5 561.1 347.9 Q561.9 349.3 562.6 350.7 Q563.4 352.2 564.1 353.6 Q564.8 355.0 565.4 356.4 Q566.0 357.9 566.5 359.4 Q566.9 360.8 567.2 362.3 Q567.4 363.8 567.5 365.3 Q567.6 366.9 567.5 368.4 Q567.4 370.0 567.2 371.5 L567.0 373.1" fill="none" stroke="#4b6f5f" stroke-width="1.4" opacity="0.81" stroke-linecap="round"/><path d="M400.9 413.9 Q399.3 416.4 398.5 417.7 Q397.7 418.9 396.9 420.2 Q396.0 421.5 395.2 422.7 Q394.4 424.0 393.5 425.2 Q392.7 426.5 391.8 427.7 Q391.0 429.0 390.1 430.2 Q389.3 431.5 388.5 432.8 Q387.7 434.1 386.9 435.4 Q386.1 436.7 385.4 438.0 Q384.7 439.3 384.0 440.7 Q383.4 442.0 382.7 443.4 Q382.1 444.8 381.6 446.2 Q381.0 447.6 380.5 449.0 Q380.0 450.4 379.6 451.9 Q379.2 453.3 378.8 454.8 Q378.4 456.3 378.1 457.7 Q377.7 459.2 377.4 460.7 Q377.1 462.2 376.8 463.7 Q376.5 465.2 376.2 466.6 Q375.9 468.1 375.6 469.6 Q375.3 471.1 374.9 472.5 Q374.6 474.0 374.2 475.4 Q373.8 476.9 373.4 478.3 L372.9 479.7" fill="none" stroke="#4b6f5f" stroke-width="1.2" opacity="0.53" stroke-linecap="round"/><path d="M338.4 503.4 Q337.0 506.2 336.3 507.6 Q335.6 509.0 335.0 510.4 Q334.4 511.8 333.9 513.3 Q333.4 514.7 333.1 516.2 Q332.7 517.6 332.4 519.1 Q332.2 520.6 332.1 522.1 Q331.9 523.6 331.9 525.2 Q331.9 526.7 332.0 528.2 Q332.1 529.8 332.2 531.3 Q332.4 532.8 332.6 534.4 Q332.8 535.9 332.9 537.5 Q333.1 539.0 333.3 540.5 Q333.4 542.0 333.5 543.6 Q333.6 545.1 333.6 546.6 Q333.6 548.1 333.5 549.6 Q333.4 551.0 333.1 552.5 Q332.9 554.0 332.5 555.5 Q332.2 557.0 331.7 558.4 Q331.3 559.9 330.8 561.3 Q330.3 562.8 329.7 564.2 Q329.1 565.7 328.6 567.1 L328.0 568.6" fill="none" stroke="#4b6f5f" stroke-width="1.1" opacity="0.67" stroke-linecap="round"/><path d="M377.0 382.0 Q375.2 384.5 374.4 385.8 Q373.6 387.0 372.8 388.4 Q372.1 389.7 371.4 391.0 Q370.7 392.4 370.1 393.8 Q369.5 395.2 369.0 396.6 Q368.4 398.1 367.9 399.5 Q367.4 401.0 367.0 402.5 Q366.5 403.9 366.1 405.4 Q365.6 406.9 365.2 408.4 Q364.8 409.8 364.3 411.3 Q363.9 412.8 363.4 414.2 Q363.0 415.6 362.4 417.0 Q361.9 418.5 361.4 419.8 Q360.8 421.2 360.2 422.6 Q359.5 423.9 358.8 425.2 Q358.1 426.5 357.4 427.8 Q356.6 429.1 355.8 430.4 Q354.9 431.6 354.0 432.8 Q353.1 434.1 352.2 435.3 Q351.2 436.5 350.3 437.7 Q349.3 438.9 348.3 440.1 Q347.4 441.3 346.4 442.5 Q345.5 443.8 344.5 445.0 Q343.6 446.3 342.8 447.5 Q341.9 448.8 341.1 450.1 Q340.4 451.5 339.7 452.8 L339.0 454.2" fill="none" stroke="#4b6f5f" stroke-width="0.9" opacity="0.54" stroke-linecap="round"/><path d="M561.8 337.0 Q562.6 340.0 563.0 341.4 Q563.5 342.9 564.0 344.4 Q564.5 345.8 565.1 347.3 Q565.6 348.7 566.2 350.2 Q566.7 351.6 567.2 353.1 Q567.7 354.5 568.2 356.0 Q568.6 357.5 568.9 359.0 Q569.3 360.4 569.5 361.9 Q569.7 363.4 569.9 365.0 Q570.0 366.5 570.0 368.0 Q570.0 369.5 570.0 371.1 Q570.0 372.6 569.9 374.2 Q569.8 375.7 569.7 377.3 Q569.6 378.8 569.5 380.3 Q569.4 381.9 569.4 383.4 Q569.3 385.0 569.4 386.5 Q569.5 388.0 569.6 389.5 Q569.8 391.0 570.0 392.5 L570.3 394.0" fill="none" stroke="#4b6f5f" stroke-width="1.4" opacity="0.63" stroke-linecap="round"/><path d="M419.5 458.3 Q419.0 461.3 418.6 462.7 Q418.3 464.2 417.8 465.6 Q417.4 467.0 416.9 468.4 Q416.4 469.8 415.7 471.2 Q415.1 472.5 414.4 473.9 Q413.7 475.2 412.9 476.5 Q412.1 477.8 411.2 479.1 Q410.4 480.4 409.5 481.7 Q408.6 483.0 407.8 484.4 Q406.9 485.7 406.1 487.0 Q405.3 488.3 404.5 489.7 Q403.8 491.1 403.2 492.5 Q402.5 493.9 402.0 495.3 Q401.5 496.7 401.1 498.2 Q400.7 499.7 400.5 501.2 Q400.3 502.7 400.2 504.2 Q400.1 505.7 400.1 507.3 Q400.1 508.8 400.2 510.4 Q400.3 511.9 400.5 513.5 Q400.7 515.1 400.9 516.6 Q401.0 518.2 401.2 519.7 Q401.4 521.3 401.5 522.8 Q401.6 524.3 401.6 525.9 Q401.6 527.4 401.5 528.8 Q401.3 530.3 401.1 531.8 Q400.9 533.3 400.5 534.7 L400.1 536.2" fill="none" stroke="#4b6f5f" stroke-width="1.1" opacity="0.63" stroke-linecap="round"/><path d="M340.4 574.9 Q340.1 577.9 340.0 579.4 Q339.9 580.9 339.9 582.4 Q339.9 583.9 339.9 585.4 Q339.9 586.9 340.0 588.4 Q340.1 589.9 340.2 591.5 Q340.3 593.0 340.4 594.5 Q340.5 596.0 340.6 597.5 Q340.6 599.0 340.7 600.6 Q340.7 602.1 340.6 603.6 Q340.6 605.1 340.5 606.6 L340.4 608.1" fill="none" stroke="#4b6f5f" stroke-width="1.2" opacity="0.67" stroke-linecap="round"/><path d="M565.8 287.4 Q567.1 290.3 567.8 291.7 Q568.4 293.1 569.0 294.6 Q569.5 296.0 570.0 297.5 Q570.4 299.0 570.7 300.5 Q571.0 302.0 571.1 303.5 Q571.3 305.0 571.3 306.5 Q571.3 308.1 571.2 309.6 Q571.0 311.2 570.8 312.7 Q570.6 314.3 570.4 315.9 Q570.2 317.4 570.0 319.0 Q569.7 320.6 569.6 322.1 Q569.4 323.7 569.4 325.2 Q569.3 326.8 569.4 328.3 L569.4 329.8" fill="none" stroke="#4b6f5f" stroke-width="0.9" opacity="0.61" stroke-linecap="round"/><path d="M429.8 521.7 Q429.2 524.6 428.9 526.0 Q428.6 527.5 428.2 529.0 Q427.8 530.4 427.4 531.9 Q426.9 533.3 426.5 534.8 Q426.0 536.2 425.6 537.7 Q425.1 539.1 424.7 540.6 Q424.2 542.0 423.8 543.5 Q423.4 545.0 423.1 546.4 Q422.7 547.9 422.5 549.4 Q422.2 550.9 422.0 552.4 Q421.9 553.9 421.8 555.4 Q421.7 556.9 421.6 558.4 Q421.6 559.9 421.6 561.4 Q421.7 562.9 421.8 564.4 Q421.8 565.9 422.0 567.4 Q422.1 569.0 422.2 570.5 Q422.3 572.0 422.4 573.5 L422.5 575.0" fill="none" stroke="#4b6f5f" stroke-width="1.3" opacity="0.70" stroke-linecap="round"/><path d="M576.3 369.5 Q576.0 372.6 575.9 374.2 Q575.7 375.7 575.6 377.3 Q575.5 378.8 575.4 380.4 Q575.3 381.9 575.3 383.5 Q575.3 385.0 575.4 386.5 Q575.4 388.1 575.7 389.6 Q575.9 391.1 576.2 392.5 Q576.6 394.0 577.0 395.5 Q577.4 397.0 578.0 398.4 Q578.5 399.9 579.1 401.3 Q579.7 402.8 580.3 404.2 Q580.9 405.6 581.5 407.1 Q582.0 408.5 582.5 410.0 Q583.1 411.5 583.5 412.9 Q583.9 414.4 584.2 415.9 Q584.5 417.4 584.7 418.9 L584.9 420.4" fill="none" stroke="#4b6f5f" stroke-width="1.5" opacity="0.81" stroke-linecap="round"/><path d="M390.6 389.4 Q389.3 392.1 388.7 393.5 Q388.1 394.9 387.5 396.3 Q386.9 397.7 386.4 399.1 Q385.8 400.5 385.2 401.9 Q384.7 403.3 384.1 404.7 Q383.6 406.2 383.0 407.5 Q382.4 408.9 381.8 410.3 Q381.3 411.7 380.6 413.1 Q380.0 414.4 379.4 415.8 Q378.7 417.1 378.0 418.4 Q377.3 419.7 376.5 421.0 Q375.8 422.3 375.0 423.6 Q374.2 424.9 373.4 426.1 Q372.6 427.4 371.7 428.6 Q370.9 429.9 370.0 431.1 Q369.1 432.4 368.2 433.6 Q367.3 434.8 366.5 436.1 L365.6 437.3" fill="none" stroke="#4b6f5f" stroke-width="1.1" opacity="0.64" stroke-linecap="round"/><path d="M374.4 463.0 Q374.0 466.0 373.8 467.5 Q373.6 469.1 373.4 470.6 Q373.2 472.1 372.9 473.5 Q372.6 475.0 372.3 476.5 Q371.9 477.9 371.5 479.3 Q371.1 480.8 370.6 482.2 Q370.1 483.6 369.5 485.0 Q368.9 486.4 368.3 487.7 Q367.6 489.1 366.9 490.5 Q366.2 491.8 365.5 493.2 Q364.8 494.5 364.1 495.9 Q363.3 497.3 362.6 498.6 Q361.9 500.0 361.3 501.4 Q360.6 502.8 360.1 504.2 Q359.5 505.6 359.0 507.1 Q358.5 508.5 358.2 510.0 Q357.8 511.5 357.6 512.9 Q357.3 514.4 357.2 515.9 Q357.1 517.5 357.1 519.0 Q357.0 520.5 357.1 522.1 Q357.1 523.6 357.2 525.1 Q357.3 526.7 357.5 528.2 Q357.6 529.8 357.7 531.3 Q357.9 532.8 357.9 534.3 Q358.0 535.9 358.0 537.4 Q358.1 538.9 358.0 540.4 Q357.9 541.9 357.7 543.3 L357.6 544.8" fill="none" stroke="#4b6f5f" stroke-width="1.4" opacity="0.70" stroke-linecap="round"/><path d="M369.9 533.5 Q369.8 536.5 369.6 537.9 Q369.5 539.4 369.3 540.9 Q369.0 542.4 368.7 543.8 Q368.5 545.3 368.1 546.8 Q367.7 548.2 367.3 549.7 Q366.9 551.2 366.4 552.6 Q366.0 554.1 365.5 555.6 Q365.1 557.0 364.6 558.5 Q364.2 559.9 363.8 561.4 Q363.4 562.9 363.1 564.3 Q362.7 565.8 362.5 567.3 Q362.2 568.8 362.1 570.3 Q361.9 571.8 361.9 573.3 Q361.8 574.8 361.8 576.3 Q361.8 577.8 361.9 579.3 Q362.0 580.8 362.2 582.3 Q362.3 583.9 362.5 585.4 Q362.6 586.9 362.8 588.4 Q362.9 590.0 363.0 591.5 Q363.2 593.0 363.2 594.5 Q363.3 596.0 363.3 597.5 Q363.2 599.0 363.1 600.5 Q363.0 602.0 362.8 603.5 Q362.6 605.0 362.3 606.5 Q362.0 608.0 361.7 609.4 Q361.3 610.9 360.9 612.4 Q360.4 613.8 360.0 615.3 Q359.5 616.8 359.1 618.2 Q358.6 619.7 358.2 621.1 L357.8 622.6" fill="none" stroke="#4b6f5f" stroke-width="0.8" opacity="0.68" stroke-linecap="round"/><path d="M488.4 463.9 Q486.8 466.5 486.1 467.8 Q485.3 469.2 484.7 470.6 Q484.1 472.0 483.6 473.4 Q483.0 474.8 482.6 476.2 Q482.2 477.7 481.9 479.2 Q481.6 480.7 481.4 482.2 Q481.2 483.7 481.0 485.2 Q480.9 486.8 480.9 488.3 Q480.8 489.9 480.8 491.4 Q480.8 493.0 480.8 494.5 Q480.8 496.0 480.7 497.6 Q480.7 499.1 480.6 500.6 Q480.5 502.1 480.4 503.6 Q480.2 505.1 480.0 506.6 Q479.8 508.1 479.4 509.5 Q479.1 511.0 478.6 512.4 Q478.2 513.8 477.7 515.2 Q477.2 516.7 476.5 518.1 Q475.9 519.5 475.3 520.9 Q474.7 522.3 474.0 523.7 Q473.3 525.1 472.7 526.5 Q472.0 527.9 471.4 529.4 Q470.9 530.8 470.3 532.2 Q469.8 533.7 469.5 535.2 Q469.1 536.6 468.8 538.1 Q468.5 539.6 468.4 541.1 Q468.3 542.6 468.3 544.1 Q468.3 545.7 468.4 547.2 Q468.5 548.7 468.7 550.3 Q468.9 551.8 469.2 553.3 Q469.5 554.9 469.7 556.4 L470.0 557.9" fill="none" stroke="#4b6f5f" stroke-width="1.4" opacity="0.52" stroke-linecap="round"/><path d="M340.8 489.1 Q339.9 491.9 339.4 493.3 Q338.8 494.7 338.2 496.1 Q337.5 497.5 336.8 498.8 Q336.1 500.2 335.4 501.5 Q334.6 502.9 333.9 504.3 Q333.1 505.6 332.4 507.0 Q331.7 508.4 331.0 509.8 Q330.3 511.2 329.7 512.6 Q329.1 514.0 328.7 515.5 Q328.2 516.9 327.9 518.4 Q327.5 519.9 327.3 521.4 Q327.1 522.9 327.1 524.4 L327.0 525.9" fill="none" stroke="#4b6f5f" stroke-width="1.3" opacity="0.59" stroke-linecap="round"/><path d="M385.7 535.9 Q385.2 538.9 384.8 540.3 Q384.4 541.8 383.9 543.2 Q383.4 544.7 382.8 546.1 Q382.3 547.5 381.7 549.0 Q381.1 550.4 380.5 551.9 Q379.9 553.3 379.3 554.8 Q378.7 556.2 378.2 557.7 Q377.7 559.1 377.3 560.6 Q377.0 562.1 376.7 563.6 Q376.4 565.0 376.3 566.5 Q376.2 568.0 376.2 569.5 Q376.2 571.0 376.3 572.6 Q376.5 574.1 376.7 575.6 Q376.9 577.1 377.2 578.7 Q377.5 580.2 377.8 581.8 Q378.1 583.3 378.4 584.8 Q378.7 586.4 378.9 587.9 Q379.1 589.4 379.2 590.9 Q379.4 592.5 379.4 594.0 Q379.4 595.5 379.3 597.0 Q379.1 598.5 378.9 600.0 L378.6 601.4" fill="none" stroke="#4b6f5f" stroke-width="1.1" opacity="0.62" stroke-linecap="round"/><path d="M475.4 454.4 Q473.9 457.1 473.2 458.3 Q472.4 459.6 471.5 460.9 Q470.7 462.2 469.8 463.5 Q469.0 464.8 468.1 466.1 Q467.2 467.3 466.4 468.7 Q465.6 470.0 464.8 471.3 Q464.0 472.6 463.2 474.0 Q462.5 475.3 461.9 476.7 Q461.3 478.1 460.8 479.5 Q460.2 480.9 459.8 482.4 Q459.4 483.8 459.1 485.3 Q458.9 486.8 458.7 488.3 Q458.5 489.9 458.4 491.4 Q458.3 492.9 458.3 494.5 Q458.3 496.0 458.3 497.6 Q458.4 499.1 458.4 500.7 Q458.4 502.2 458.5 503.8 Q458.5 505.3 458.4 506.8 Q458.4 508.4 458.3 509.9 Q458.2 511.4 458.0 512.8 Q457.8 514.3 457.5 515.8 Q457.2 517.2 456.7 518.7 Q456.3 520.1 455.8 521.5 Q455.3 522.9 454.7 524.3 Q454.1 525.8 453.5 527.2 L452.8 528.6" fill="none" stroke="#4b6f5f" stroke-width="1.4" opacity="0.64" stroke-linecap="round"/><path d="M484.2 515.9 Q483.1 518.7 482.5 520.1 Q481.9 521.5 481.3 523.0 Q480.7 524.4 480.1 525.8 Q479.5 527.2 479.0 528.7 Q478.5 530.1 478.1 531.6 Q477.7 533.1 477.4 534.5 Q477.1 536.0 476.9 537.5 Q476.7 539.0 476.6 540.5 Q476.5 542.0 476.5 543.5 Q476.5 545.1 476.6 546.6 Q476.7 548.1 476.9 549.6 Q477.1 551.2 477.3 552.7 Q477.5 554.2 477.7 555.8 Q477.9 557.3 478.0 558.8 Q478.2 560.3 478.3 561.8 Q478.3 563.4 478.3 564.9 Q478.3 566.4 478.2 567.9 Q478.1 569.4 477.9 570.9 Q477.7 572.3 477.3 573.8 Q477.0 575.3 476.6 576.8 Q476.2 578.2 475.8 579.7 Q475.3 581.1 474.8 582.6 Q474.3 584.1 473.8 585.5 Q473.3 587.0 472.8 588.4 Q472.4 589.9 472.0 591.4 Q471.6 592.8 471.2 594.3 Q470.9 595.8 470.7 597.3 L470.5 598.8" fill="none" stroke="#4b6f5f" stroke-width="1.1" opacity="0.55" stroke-linecap="round"/><path d="M433.0 319.5 Q431.2 321.9 430.3 323.1 Q429.4 324.3 428.5 325.5 Q427.6 326.7 426.7 328.0 Q425.8 329.2 424.9 330.4 Q424.0 331.6 423.2 332.9 Q422.3 334.1 421.4 335.3 Q420.5 336.6 419.7 337.8 Q418.8 339.0 417.9 340.2 Q417.0 341.4 416.1 342.6 Q415.2 343.8 414.3 345.0 Q413.4 346.2 412.4 347.3 Q411.5 348.5 410.5 349.6 Q409.6 350.8 408.6 351.9 L407.6 353.0" fill="none" stroke="#4b6f5f" stroke-width="1.0" opacity="0.84" stroke-linecap="round"/><path d="M349.1 493.6 Q347.9 496.4 347.3 497.8 Q346.7 499.2 346.1 500.6 Q345.5 502.0 344.9 503.4 Q344.3 504.8 343.7 506.2 Q343.2 507.6 342.7 509.0 Q342.2 510.5 341.8 511.9 Q341.3 513.4 341.0 514.8 Q340.7 516.3 340.4 517.8 Q340.2 519.3 340.0 520.8 Q339.8 522.3 339.7 523.8 Q339.7 525.3 339.6 526.8 Q339.6 528.3 339.6 529.9 Q339.7 531.4 339.7 532.9 Q339.8 534.4 339.8 536.0 Q339.9 537.5 339.9 539.0 Q339.9 540.5 339.9 542.0 Q339.9 543.5 339.8 545.0 Q339.7 546.5 339.6 548.0 Q339.4 549.5 339.2 550.9 Q339.0 552.4 338.7 553.9 Q338.4 555.4 338.0 556.9 Q337.7 558.3 337.3 559.8 Q336.8 561.3 336.4 562.7 Q336.0 564.2 335.6 565.7 Q335.1 567.1 334.8 568.6 Q334.4 570.1 334.0 571.5 Q333.7 573.0 333.4 574.5 L333.1 576.0" fill="none" stroke="#4b6f5f" stroke-width="0.8" opacity="0.66" stroke-linecap="round"/><path d="M387.5 518.2 Q387.5 521.2 387.5 522.7 Q387.5 524.3 387.5 525.8 Q387.5 527.3 387.4 528.8 Q387.3 530.3 387.2 531.8 Q387.1 533.3 386.9 534.7 Q386.6 536.2 386.4 537.7 Q386.1 539.2 385.7 540.6 Q385.4 542.1 385.0 543.5 Q384.6 545.0 384.1 546.5 Q383.7 547.9 383.3 549.4 Q382.8 550.8 382.4 552.3 Q381.9 553.8 381.5 555.2 Q381.1 556.7 380.8 558.2 Q380.4 559.6 380.1 561.1 Q379.9 562.6 379.7 564.1 Q379.5 565.6 379.4 567.1 Q379.3 568.6 379.3 570.1 Q379.2 571.6 379.3 573.1 Q379.3 574.6 379.5 576.1 Q379.6 577.7 379.7 579.2 Q379.8 580.7 380.0 582.2 Q380.1 583.7 380.2 585.3 L380.4 586.8" fill="none" stroke="#4b6f5f" stroke-width="0.9" opacity="0.60" stroke-linecap="round"/><path d="M368.8 533.0 Q368.8 536.0 368.7 537.5 Q368.6 539.0 368.4 540.5 Q368.2 541.9 368.0 543.4 Q367.7 544.9 367.3 546.3 Q366.9 547.8 366.4 549.2 Q366.0 550.7 365.4 552.1 Q364.9 553.6 364.4 555.1 Q363.9 556.5 363.3 558.0 Q362.8 559.4 362.3 560.9 Q361.8 562.3 361.4 563.8 Q361.0 565.3 360.7 566.7 Q360.4 568.2 360.2 569.7 Q360.0 571.2 359.9 572.7 Q359.8 574.2 359.9 575.7 Q359.9 577.2 360.0 578.7 Q360.2 580.3 360.4 581.8 L360.6 583.3" fill="none" stroke="#4b6f5f" stroke-width="1.4" opacity="0.67" stroke-linecap="round"/><path d="M396.6 579.5 Q396.9 582.6 397.0 584.1 Q397.1 585.6 397.1 587.1 Q397.1 588.6 397.0 590.1 Q396.9 591.6 396.7 593.1 Q396.6 594.6 396.3 596.1 Q396.0 597.6 395.6 599.0 Q395.3 600.5 394.9 602.0 Q394.4 603.4 394.0 604.9 Q393.5 606.4 393.0 607.8 Q392.5 609.3 392.1 610.7 Q391.6 612.2 391.2 613.7 Q390.8 615.1 390.5 616.6 Q390.1 618.1 389.9 619.6 Q389.6 621.0 389.5 622.5 Q389.3 624.0 389.3 625.5 Q389.2 627.0 389.3 628.5 Q389.3 630.1 389.4 631.6 Q389.5 633.1 389.7 634.6 Q389.8 636.1 390.0 637.7 Q390.2 639.2 390.4 640.7 Q390.5 642.2 390.7 643.8 Q390.8 645.3 390.9 646.8 Q390.9 648.3 390.9 649.8 Q390.9 651.3 390.8 652.8 Q390.7 654.3 390.4 655.8 Q390.2 657.3 389.9 658.8 Q389.6 660.2 389.2 661.7 Q388.9 663.2 388.4 664.6 Q388.0 666.1 387.5 667.6 Q387.0 669.0 386.5 670.5 L386.1 671.9" fill="none" stroke="#4b6f5f" stroke-width="1.2" opacity="0.83" stroke-linecap="round"/><path d="M470.8 340.9 Q468.4 342.8 467.2 343.7 Q466.0 344.7 464.8 345.6 Q463.6 346.6 462.4 347.5 Q461.2 348.5 460.0 349.4 Q458.8 350.4 457.6 351.4 Q456.5 352.4 455.3 353.4 Q454.2 354.4 453.0 355.4 Q451.9 356.4 450.8 357.5 Q449.7 358.6 448.7 359.7 Q447.7 360.8 446.7 362.0 L445.7 363.1" fill="none" stroke="#4b6f5f" stroke-width="1.4" opacity="0.63" stroke-linecap="round"/><path d="M487.3 447.0 Q486.1 449.8 485.4 451.1 Q484.7 452.4 483.9 453.7 Q483.2 455.0 482.3 456.3 Q481.5 457.5 480.5 458.8 Q479.6 460.0 478.7 461.3 Q477.8 462.5 476.8 463.8 Q475.9 465.0 475.0 466.3 Q474.0 467.6 473.2 468.9 Q472.3 470.2 471.6 471.5 Q470.8 472.9 470.1 474.3 Q469.5 475.6 468.9 477.0 Q468.4 478.5 468.0 479.9 Q467.6 481.4 467.3 482.9 Q467.1 484.4 466.9 485.9 Q466.8 487.5 466.8 489.0 L466.7 490.6" fill="none" stroke="#4b6f5f" stroke-width="1.3" opacity="0.58" stroke-linecap="round"/><path d="M430.2 546.6 Q429.6 549.6 429.5 551.0 Q429.3 552.5 429.3 554.0 Q429.3 555.5 429.4 557.1 Q429.5 558.6 429.6 560.1 Q429.8 561.6 430.0 563.2 Q430.3 564.7 430.5 566.2 Q430.8 567.8 431.0 569.3 Q431.3 570.8 431.5 572.4 Q431.7 573.9 431.8 575.4 Q431.9 576.9 431.9 578.4 Q431.9 579.9 431.8 581.4 Q431.7 582.9 431.5 584.4 Q431.2 585.9 430.9 587.4 Q430.5 588.8 430.1 590.3 Q429.6 591.8 429.1 593.2 Q428.6 594.7 428.1 596.1 Q427.5 597.6 426.9 599.0 Q426.4 600.5 425.9 601.9 Q425.4 603.4 424.9 604.9 Q424.5 606.3 424.1 607.8 Q423.8 609.3 423.6 610.8 Q423.3 612.2 423.2 613.7 Q423.1 615.2 423.1 616.7 Q423.1 618.2 423.3 619.8 Q423.4 621.3 423.6 622.8 L423.8 624.3" fill="none" stroke="#4b6f5f" stroke-width="0.9" opacity="0.55" stroke-linecap="round"/><path d="M417.6 354.5 Q415.4 356.6 414.3 357.6 Q413.2 358.7 412.1 359.7 Q411.0 360.8 409.9 361.8 Q408.8 362.8 407.7 363.9 Q406.6 364.9 405.5 366.0 Q404.4 367.0 403.3 368.1 Q402.2 369.2 401.2 370.3 Q400.2 371.4 399.2 372.5 Q398.1 373.7 397.2 374.8 Q396.2 376.0 395.3 377.2 Q394.4 378.4 393.5 379.6 Q392.6 380.9 391.8 382.2 Q391.0 383.4 390.3 384.7 Q389.5 386.1 388.8 387.4 Q388.1 388.7 387.5 390.1 Q386.8 391.5 386.2 392.9 Q385.6 394.3 385.1 395.7 Q384.5 397.1 384.0 398.5 Q383.4 400.0 382.9 401.4 Q382.4 402.8 381.9 404.3 Q381.3 405.7 380.8 407.1 Q380.3 408.5 379.7 409.9 Q379.2 411.3 378.6 412.7 Q378.0 414.1 377.4 415.4 Q376.7 416.8 376.1 418.1 Q375.4 419.5 374.7 420.8 Q373.9 422.1 373.2 423.3 Q372.4 424.6 371.6 425.9 Q370.7 427.1 369.9 428.4 L369.0 429.6" fill="none" stroke="#4b6f5f" stroke-width="1.2" opacity="0.85" stroke-linecap="round"/><path d="M396.9 452.0 Q396.5 455.1 396.4 456.7 Q396.2 458.2 396.0 459.7 Q395.8 461.3 395.7 462.8 Q395.5 464.3 395.2 465.8 Q395.0 467.3 394.7 468.8 Q394.4 470.2 394.0 471.7 Q393.6 473.1 393.1 474.5 Q392.6 475.9 392.1 477.3 Q391.5 478.7 390.8 480.0 Q390.2 481.4 389.4 482.7 Q388.7 484.1 387.9 485.4 Q387.1 486.7 386.3 488.1 L385.5 489.4" fill="none" stroke="#4b6f5f" stroke-width="0.8" opacity="0.79" stroke-linecap="round"/><path d="M546.7 295.3 Q544.7 297.5 543.7 298.6 Q542.7 299.8 541.7 300.9 Q540.7 302.0 539.7 303.1 Q538.7 304.2 537.7 305.3 Q536.7 306.4 535.6 307.5 Q534.6 308.6 533.6 309.7 Q532.6 310.8 531.5 311.9 Q530.5 313.0 529.4 314.0 Q528.4 315.1 527.3 316.2 Q526.3 317.2 525.2 318.2 Q524.1 319.3 523.0 320.3 Q521.9 321.3 520.8 322.3 Q519.7 323.3 518.6 324.3 Q517.5 325.3 516.3 326.3 Q515.2 327.3 514.0 328.2 Q512.9 329.2 511.7 330.2 Q510.6 331.1 509.4 332.1 Q508.2 333.1 507.1 334.0 Q505.9 335.0 504.8 336.0 Q503.6 337.0 502.4 338.0 L501.3 338.9" fill="none" stroke="#4b6f5f" stroke-width="1.5" opacity="0.71" stroke-linecap="round"/><path d="M593.1 369.3 Q592.8 372.4 592.7 373.9 Q592.6 375.5 592.5 377.0 Q592.5 378.6 592.5 380.1 Q592.5 381.6 592.7 383.1 Q592.8 384.6 593.1 386.1 Q593.4 387.6 593.8 389.1 Q594.2 390.6 594.7 392.0 Q595.2 393.5 595.8 394.9 Q596.3 396.4 596.9 397.8 Q597.5 399.3 598.1 400.7 Q598.7 402.2 599.3 403.6 Q599.8 405.1 600.3 406.5 Q600.8 408.0 601.1 409.5 Q601.5 411.0 601.7 412.4 Q602.0 413.9 602.1 415.5 Q602.2 417.0 602.2 418.5 Q602.3 420.0 602.2 421.6 Q602.1 423.1 602.0 424.7 Q601.8 426.2 601.7 427.8 Q601.5 429.4 601.4 430.9 Q601.2 432.5 601.2 434.0 Q601.1 435.6 601.1 437.1 Q601.1 438.6 601.3 440.1 Q601.4 441.6 601.7 443.1 Q601.9 444.6 602.3 446.1 Q602.7 447.6 603.1 449.0 Q603.6 450.5 604.2 452.0 L604.7 453.4" fill="none" stroke="#4b6f5f" stroke-width="1.4" opacity="0.53" stroke-linecap="round"/><path d="M580.8 335.3 Q581.9 338.2 582.5 339.7 Q583.1 341.1 583.8 342.5 Q584.4 344.0 585.0 345.4 Q585.6 346.9 586.2 348.3 Q586.8 349.8 587.2 351.2 Q587.7 352.7 588.0 354.2 Q588.4 355.6 588.6 357.1 Q588.8 358.7 588.9 360.2 Q588.9 361.7 588.9 363.2 Q588.8 364.8 588.7 366.3 Q588.6 367.9 588.4 369.4 Q588.2 371.0 588.0 372.6 Q587.8 374.1 587.7 375.7 Q587.5 377.2 587.5 378.8 Q587.4 380.3 587.4 381.9 Q587.5 383.4 587.6 384.9 Q587.8 386.4 588.1 387.9 Q588.4 389.4 588.8 390.9 Q589.2 392.3 589.8 393.8 Q590.3 395.2 590.9 396.7 Q591.5 398.1 592.2 399.6 L592.8 401.0" fill="none" stroke="#4b6f5f" stroke-width="0.9" opacity="0.79" stroke-linecap="round"/><path d="M411.3 370.8 Q409.4 373.1 408.5 374.4 Q407.6 375.6 406.7 376.8 Q405.8 378.0 405.0 379.3 Q404.2 380.6 403.4 381.9 Q402.7 383.2 402.0 384.5 Q401.2 385.8 400.6 387.2 Q399.9 388.5 399.2 389.9 Q398.6 391.3 398.0 392.7 Q397.4 394.1 396.8 395.5 Q396.2 396.8 395.6 398.2 L395.0 399.6" fill="none" stroke="#4b6f5f" stroke-width="1.1" opacity="0.75" stroke-linecap="round"/><path d="M428.7 507.4 Q428.7 510.4 428.7 511.9 Q428.7 513.5 428.6 515.0 Q428.6 516.5 428.5 518.0 Q428.4 519.5 428.2 521.0 Q428.0 522.5 427.7 523.9 Q427.4 525.4 427.1 526.8 Q426.7 528.3 426.3 529.7 Q425.8 531.2 425.4 532.6 Q424.9 534.1 424.3 535.5 Q423.8 536.9 423.3 538.4 Q422.7 539.8 422.2 541.3 L421.7 542.7" fill="none" stroke="#4b6f5f" stroke-width="1.1" opacity="0.84" stroke-linecap="round"/><path d="M571.9 334.7 Q572.7 337.7 573.2 339.1 Q573.7 340.6 574.2 342.0 Q574.8 343.5 575.3 344.9 Q575.9 346.4 576.5 347.8 Q577.0 349.3 577.5 350.7 Q578.0 352.2 578.4 353.7 Q578.8 355.1 579.2 356.6 Q579.5 358.1 579.7 359.6 Q579.9 361.1 580.0 362.6 Q580.1 364.2 580.1 365.7 Q580.1 367.2 580.1 368.8 Q580.0 370.3 579.9 371.9 Q579.8 373.4 579.7 375.0 Q579.6 376.5 579.5 378.1 Q579.4 379.6 579.4 381.1 Q579.4 382.7 579.4 384.2 Q579.5 385.7 579.7 387.2 Q579.8 388.7 580.1 390.2 Q580.4 391.7 580.8 393.2 Q581.2 394.7 581.7 396.1 Q582.1 397.6 582.7 399.0 Q583.2 400.5 583.8 401.9 Q584.3 403.4 584.9 404.8 L585.4 406.3" fill="none" stroke="#4b6f5f" stroke-width="1.1" opacity="0.69" stroke-linecap="round"/><path d="M406.2 380.0 Q404.7 382.6 404.1 384.0 Q403.4 385.4 402.8 386.7 Q402.1 388.1 401.6 389.5 Q401.0 391.0 400.4 392.4 Q399.9 393.8 399.4 395.3 Q398.8 396.7 398.3 398.1 Q397.8 399.6 397.3 401.0 Q396.8 402.4 396.2 403.8 Q395.7 405.3 395.1 406.7 Q394.6 408.0 393.9 409.4 Q393.3 410.8 392.7 412.1 Q392.0 413.5 391.3 414.8 Q390.6 416.1 389.9 417.4 Q389.1 418.6 388.3 419.9 Q387.4 421.1 386.6 422.4 Q385.7 423.6 384.8 424.8 Q383.9 426.0 382.9 427.2 Q382.0 428.4 381.0 429.6 L380.1 430.8" fill="none" stroke="#4b6f5f" stroke-width="1.0" opacity="0.57" stroke-linecap="round"/><path d="M584.4 293.0 Q585.0 296.0 585.2 297.5 Q585.4 299.0 585.6 300.5 Q585.7 302.0 585.8 303.5 Q585.8 305.0 585.8 306.6 Q585.8 308.1 585.8 309.7 Q585.8 311.2 585.7 312.7 Q585.7 314.3 585.6 315.8 Q585.6 317.4 585.6 318.9 Q585.6 320.4 585.7 321.9 Q585.8 323.5 586.0 325.0 Q586.1 326.5 586.4 328.0 Q586.7 329.5 587.0 330.9 L587.3 332.4" fill="none" stroke="#4b6f5f" stroke-width="1.3" opacity="0.75" stroke-linecap="round"/><path d="M369.5 404.9 Q368.5 407.8 368.0 409.2 Q367.6 410.7 367.1 412.1 Q366.5 413.5 366.0 414.9 Q365.5 416.3 364.9 417.7 Q364.3 419.1 363.7 420.5 Q363.1 421.8 362.4 423.1 Q361.7 424.5 361.0 425.8 Q360.2 427.1 359.4 428.3 Q358.6 429.6 357.8 430.8 Q356.9 432.1 356.1 433.3 Q355.2 434.6 354.3 435.8 Q353.4 437.0 352.4 438.3 Q351.5 439.5 350.6 440.7 Q349.7 442.0 348.8 443.2 Q347.9 444.5 347.1 445.8 Q346.3 447.1 345.5 448.4 Q344.7 449.7 344.0 451.0 Q343.3 452.4 342.7 453.8 Q342.1 455.2 341.6 456.6 Q341.1 458.0 340.7 459.5 Q340.3 460.9 340.0 462.4 Q339.7 463.9 339.4 465.4 Q339.2 466.9 339.0 468.5 Q338.9 470.0 338.7 471.5 Q338.6 473.1 338.5 474.6 Q338.3 476.1 338.2 477.7 Q338.1 479.2 337.9 480.7 Q337.7 482.2 337.5 483.7 L337.3 485.2" fill="none" stroke="#4b6f5f" stroke-width="0.9" opacity="0.58" stroke-linecap="round"/><path d="M478.9 493.0 Q479.0 496.1 479.0 497.7 Q479.0 499.2 479.0 500.8 Q478.9 502.3 478.8 503.8 Q478.7 505.3 478.5 506.8 Q478.3 508.2 478.0 509.7 Q477.6 511.1 477.2 512.6 Q476.8 514.0 476.2 515.4 Q475.7 516.8 475.1 518.2 Q474.4 519.6 473.8 521.0 Q473.1 522.4 472.4 523.8 Q471.6 525.2 470.9 526.6 Q470.3 528.0 469.6 529.5 Q469.0 530.9 468.4 532.3 Q467.9 533.8 467.4 535.2 Q467.0 536.7 466.7 538.2 Q466.4 539.7 466.3 541.2 Q466.1 542.7 466.1 544.2 Q466.2 545.7 466.3 547.3 Q466.4 548.8 466.7 550.3 Q466.9 551.9 467.2 553.4 Q467.5 554.9 467.9 556.5 Q468.2 558.0 468.5 559.6 Q468.8 561.1 469.0 562.6 Q469.2 564.2 469.4 565.7 Q469.5 567.2 469.5 568.7 Q469.5 570.2 469.3 571.7 L469.2 573.2" fill="none" stroke="#4b6f5f" stroke-width="1.1" opacity="0.62" stroke-linecap="round"/><path d="M444.6 512.4 Q444.4 515.4 444.3 516.9 Q444.1 518.4 443.8 519.9 Q443.5 521.3 443.0 522.8 Q442.6 524.2 442.1 525.6 Q441.6 527.0 441.0 528.5 Q440.4 529.9 439.7 531.3 Q439.1 532.7 438.4 534.1 Q437.7 535.5 437.1 537.0 Q436.4 538.4 435.9 539.8 Q435.3 541.3 434.8 542.8 Q434.3 544.2 434.0 545.7 Q433.6 547.2 433.4 548.7 Q433.2 550.2 433.1 551.7 Q433.1 553.2 433.1 554.7 Q433.2 556.2 433.4 557.7 Q433.6 559.3 433.9 560.8 Q434.1 562.3 434.4 563.9 Q434.7 565.4 435.1 566.9 Q435.4 568.5 435.6 570.0 Q435.9 571.5 436.1 573.1 Q436.3 574.6 436.4 576.1 Q436.4 577.6 436.4 579.1 Q436.3 580.6 436.1 582.1 Q435.9 583.6 435.6 585.1 Q435.3 586.6 434.8 588.0 Q434.4 589.5 433.8 590.9 Q433.3 592.4 432.7 593.8 Q432.1 595.3 431.5 596.7 Q430.9 598.2 430.3 599.6 Q429.7 601.1 429.2 602.5 Q428.7 604.0 428.3 605.5 L427.8 606.9" fill="none" stroke="#4b6f5f" stroke-width="1.3" opacity="0.71" stroke-linecap="round"/><path d="M420.8 493.7 Q420.1 496.6 419.9 498.1 Q419.7 499.6 419.5 501.2 Q419.4 502.7 419.3 504.2 Q419.2 505.7 419.2 507.3 Q419.2 508.8 419.2 510.3 Q419.2 511.9 419.2 513.4 Q419.2 514.9 419.2 516.4 Q419.1 517.9 419.1 519.4 Q419.0 521.0 418.8 522.4 Q418.7 523.9 418.5 525.4 Q418.2 526.9 417.9 528.3 L417.6 529.8" fill="none" stroke="#4b6f5f" stroke-width="1.2" opacity="0.78" stroke-linecap="round"/><path d="M364.4 536.2 Q364.3 539.2 364.2 540.7 Q364.0 542.2 363.8 543.7 Q363.5 545.1 363.2 546.6 Q362.8 548.1 362.4 549.5 Q361.9 551.0 361.4 552.4 Q360.9 553.9 360.4 555.4 Q359.9 556.8 359.3 558.3 Q358.8 559.7 358.3 561.2 Q357.8 562.6 357.4 564.1 Q356.9 565.6 356.6 567.0 Q356.2 568.5 356.0 570.0 Q355.8 571.5 355.7 573.0 Q355.5 574.5 355.5 576.0 Q355.5 577.5 355.6 579.0 Q355.7 580.5 355.9 582.0 Q356.1 583.6 356.3 585.1 Q356.6 586.6 356.8 588.2 Q357.0 589.7 357.3 591.2 Q357.5 592.7 357.6 594.3 Q357.8 595.8 357.9 597.3 Q358.0 598.8 357.9 600.3 Q357.9 601.8 357.8 603.3 Q357.6 604.8 357.4 606.3 Q357.1 607.8 356.7 609.3 Q356.4 610.7 355.9 612.2 Q355.5 613.7 355.0 615.1 Q354.4 616.6 353.9 618.0 Q353.4 619.5 352.8 620.9 Q352.3 622.4 351.8 623.8 Q351.3 625.3 350.9 626.8 L350.5 628.2" fill="none" stroke="#4b6f5f" stroke-width="1.0" opacity="0.68" stroke-linecap="round"/><path d="M354.5 516.4 Q354.3 519.4 354.3 521.0 Q354.3 522.5 354.4 524.0 Q354.5 525.6 354.6 527.1 Q354.7 528.7 354.9 530.2 Q355.0 531.7 355.1 533.3 Q355.2 534.8 355.3 536.3 Q355.3 537.8 355.3 539.3 Q355.3 540.8 355.2 542.3 Q355.1 543.8 354.9 545.3 Q354.7 546.7 354.3 548.2 Q354.0 549.7 353.6 551.1 Q353.2 552.6 352.8 554.1 Q352.3 555.5 351.8 557.0 Q351.3 558.4 350.7 559.9 Q350.2 561.3 349.7 562.8 Q349.2 564.3 348.7 565.7 Q348.3 567.2 347.9 568.7 Q347.5 570.1 347.3 571.6 Q347.0 573.1 346.9 574.6 Q346.7 576.1 346.7 577.6 Q346.6 579.1 346.7 580.6 Q346.8 582.1 346.9 583.6 Q347.1 585.2 347.3 586.7 Q347.5 588.2 347.7 589.7 Q347.9 591.3 348.2 592.8 Q348.4 594.3 348.5 595.9 Q348.7 597.4 348.8 598.9 Q348.9 600.4 348.9 601.9 Q348.9 603.4 348.8 604.9 Q348.7 606.4 348.5 607.9 Q348.3 609.4 348.0 610.9 Q347.6 612.3 347.2 613.8 L346.8 615.3" fill="none" stroke="#4b6f5f" stroke-width="1.3" opacity="0.79" stroke-linecap="round"/><path d="M376.9 600.3 Q376.4 603.3 376.0 604.8 Q375.7 606.3 375.3 607.7 Q374.9 609.2 374.5 610.7 Q374.0 612.1 373.6 613.6 Q373.2 615.0 372.8 616.5 Q372.3 618.0 372.0 619.4 Q371.6 620.9 371.3 622.4 Q371.0 623.9 370.8 625.4 Q370.5 626.8 370.4 628.3 Q370.2 629.8 370.2 631.3 Q370.1 632.8 370.1 634.3 Q370.1 635.8 370.2 637.4 Q370.3 638.9 370.4 640.4 Q370.5 641.9 370.7 643.4 Q370.8 645.0 370.9 646.5 Q371.1 648.0 371.2 649.5 Q371.3 651.0 371.3 652.5 Q371.3 654.1 371.3 655.6 Q371.2 657.1 371.1 658.6 Q371.0 660.1 370.8 661.5 Q370.6 663.0 370.3 664.5 Q370.0 666.0 369.6 667.5 Q369.3 668.9 368.9 670.4 L368.5 671.9" fill="none" stroke="#4b6f5f" stroke-width="0.9" opacity="0.59" stroke-linecap="round"/><path d="M502.1 511.3 Q500.6 514.1 499.9 515.5 Q499.1 516.8 498.4 518.2 Q497.6 519.6 496.9 521.0 Q496.2 522.4 495.5 523.8 Q494.9 525.3 494.4 526.7 Q493.9 528.2 493.5 529.6 Q493.2 531.1 493.0 532.6 Q492.7 534.1 492.7 535.6 Q492.6 537.2 492.7 538.7 Q492.8 540.2 493.0 541.8 Q493.2 543.3 493.5 544.9 Q493.8 546.4 494.2 548.0 Q494.5 549.5 494.8 551.0 Q495.2 552.6 495.5 554.1 Q495.7 555.6 495.9 557.2 Q496.1 558.7 496.1 560.2 L496.2 561.7" fill="none" stroke="#4b6f5f" stroke-width="1.1" opacity="0.66" stroke-linecap="round"/><path d="M488.9 461.7 Q487.4 464.4 486.7 465.7 Q486.0 467.1 485.4 468.4 Q484.7 469.8 484.1 471.2 Q483.5 472.6 483.0 474.0 Q482.5 475.4 482.1 476.9 Q481.7 478.3 481.3 479.8 Q481.0 481.3 480.7 482.8 Q480.4 484.3 480.3 485.8 Q480.1 487.3 479.9 488.8 Q479.8 490.3 479.6 491.8 Q479.5 493.3 479.4 494.9 Q479.3 496.4 479.2 497.9 Q479.0 499.4 478.9 500.9 Q478.7 502.4 478.5 503.9 Q478.3 505.4 478.1 506.8 Q477.8 508.3 477.5 509.8 Q477.1 511.2 476.7 512.7 Q476.3 514.1 475.9 515.5 Q475.4 517.0 474.9 518.4 Q474.4 519.8 473.8 521.2 Q473.3 522.7 472.7 524.1 Q472.2 525.5 471.6 527.0 L471.1 528.4" fill="none" stroke="#4b6f5f" stroke-width="1.4" opacity="0.85" stroke-linecap="round"/><path d="M351.4 557.0 Q350.1 559.9 349.5 561.3 Q348.8 562.7 348.2 564.2 Q347.7 565.6 347.2 567.1 Q346.7 568.6 346.3 570.0 Q345.9 571.5 345.6 573.0 Q345.4 574.5 345.3 576.0 Q345.2 577.5 345.3 579.0 Q345.3 580.5 345.5 582.0 Q345.7 583.5 346.0 585.1 Q346.2 586.6 346.6 588.1 Q346.9 589.7 347.3 591.2 Q347.6 592.8 347.9 594.3 Q348.2 595.8 348.5 597.4 Q348.7 598.9 348.8 600.4 Q349.0 601.9 349.0 603.5 L348.9 605.0" fill="none" stroke="#4b6f5f" stroke-width="1.0" opacity="0.70" stroke-linecap="round"/><path d="M582.5 327.1 Q583.0 330.0 583.3 331.5 Q583.7 333.0 584.1 334.5 Q584.5 336.0 584.9 337.4 Q585.4 338.9 585.9 340.4 Q586.4 341.8 586.9 343.3 Q587.3 344.7 587.8 346.2 Q588.3 347.7 588.7 349.1 Q589.1 350.6 589.4 352.1 Q589.8 353.6 590.0 355.1 Q590.3 356.6 590.5 358.1 Q590.6 359.6 590.7 361.1 Q590.8 362.6 590.8 364.1 Q590.9 365.7 590.8 367.2 Q590.8 368.8 590.8 370.3 Q590.7 371.8 590.7 373.4 Q590.6 374.9 590.6 376.4 Q590.6 378.0 590.7 379.5 Q590.8 381.0 590.9 382.5 Q591.1 384.1 591.3 385.6 Q591.5 387.1 591.8 388.5 Q592.2 390.0 592.5 391.5 L592.9 393.0" fill="none" stroke="#4b6f5f" stroke-width="0.8" opacity="0.56" stroke-linecap="round"/><path d="M436.2 473.2 Q434.9 475.9 434.3 477.3 Q433.6 478.6 433.0 480.0 Q432.4 481.4 431.8 482.8 Q431.2 484.2 430.7 485.6 Q430.2 487.0 429.7 488.5 Q429.3 489.9 428.9 491.4 Q428.5 492.8 428.1 494.3 Q427.8 495.8 427.6 497.3 Q427.3 498.7 427.1 500.2 Q426.9 501.7 426.8 503.2 Q426.6 504.8 426.5 506.3 Q426.4 507.8 426.3 509.3 Q426.2 510.8 426.0 512.3 Q425.9 513.8 425.8 515.3 Q425.7 516.8 425.5 518.3 Q425.3 519.8 425.1 521.3 Q424.9 522.7 424.7 524.2 Q424.4 525.7 424.1 527.1 Q423.8 528.6 423.4 530.1 Q423.0 531.5 422.6 533.0 Q422.2 534.4 421.8 535.9 Q421.4 537.3 421.0 538.8 Q420.6 540.3 420.1 541.7 Q419.7 543.2 419.4 544.6 Q419.0 546.1 418.7 547.6 Q418.4 549.1 418.1 550.6 Q417.9 552.0 417.7 553.5 L417.5 555.0" fill="none" stroke="#4b6f5f" stroke-width="0.9" opacity="0.66" stroke-linecap="round"/><path d="M499.4 323.9 Q497.3 326.1 496.2 327.1 Q495.2 328.2 494.1 329.2 Q493.0 330.2 491.9 331.3 Q490.9 332.3 489.8 333.3 Q488.7 334.3 487.5 335.4 Q486.4 336.4 485.3 337.4 Q484.2 338.4 483.1 339.4 Q482.0 340.4 480.8 341.4 Q479.7 342.4 478.6 343.5 Q477.5 344.5 476.4 345.5 Q475.3 346.6 474.2 347.6 Q473.1 348.6 472.0 349.7 Q470.9 350.8 469.9 351.9 Q468.8 352.9 467.8 354.1 Q466.8 355.2 465.8 356.3 Q464.8 357.4 463.9 358.6 Q462.9 359.8 462.0 361.0 Q461.1 362.2 460.2 363.4 Q459.3 364.6 458.5 365.9 Q457.6 367.1 456.8 368.4 Q456.0 369.7 455.3 371.0 L454.5 372.3" fill="none" stroke="#4b6f5f" stroke-width="1.2" opacity="0.62" stroke-linecap="round"/><path d="M521.4 273.2 Q519.0 275.0 517.8 275.9 Q516.6 276.8 515.4 277.7 Q514.2 278.6 513.0 279.5 Q511.8 280.5 510.6 281.4 Q509.4 282.3 508.3 283.2 Q507.1 284.2 505.9 285.1 Q504.8 286.1 503.6 287.0 Q502.5 288.0 501.3 289.0 Q500.2 290.0 499.1 291.0 Q497.9 292.0 496.8 293.0 Q495.7 294.0 494.6 295.0 Q493.5 296.1 492.4 297.1 Q491.4 298.2 490.3 299.2 Q489.2 300.3 488.2 301.4 Q487.2 302.5 486.1 303.6 Q485.1 304.7 484.1 305.8 Q483.1 306.9 482.1 308.0 Q481.1 309.2 480.1 310.3 Q479.1 311.4 478.1 312.6 Q477.2 313.7 476.2 314.9 Q475.2 316.0 474.2 317.2 Q473.3 318.3 472.3 319.5 Q471.4 320.7 470.4 321.8 Q469.4 323.0 468.5 324.1 L467.5 325.3" fill="none" stroke="#4b6f5f" stroke-width="1.5" opacity="0.71" stroke-linecap="round"/><path d="M464.7 407.9 Q462.7 410.2 461.7 411.4 Q460.7 412.6 459.8 413.8 Q458.8 415.0 458.0 416.2 Q457.1 417.5 456.3 418.8 Q455.5 420.0 454.7 421.4 Q454.0 422.7 453.3 424.1 Q452.7 425.4 452.1 426.8 Q451.6 428.2 451.1 429.7 Q450.6 431.1 450.2 432.6 Q449.8 434.1 449.5 435.6 Q449.1 437.1 448.8 438.6 Q448.5 440.1 448.3 441.6 Q448.0 443.1 447.7 444.6 Q447.5 446.2 447.2 447.7 Q446.9 449.2 446.6 450.6 Q446.2 452.1 445.9 453.6 Q445.5 455.0 445.1 456.5 Q444.6 457.9 444.1 459.3 Q443.6 460.7 443.0 462.0 Q442.4 463.4 441.7 464.7 Q441.0 466.1 440.3 467.4 Q439.5 468.7 438.7 470.0 Q437.9 471.3 437.1 472.6 L436.3 473.9" fill="none" stroke="#4b6f5f" stroke-width="1.3" opacity="0.76" stroke-linecap="round"/><path d="M443.9 415.6 Q441.9 418.0 440.9 419.2 Q440.0 420.4 439.1 421.6 Q438.2 422.9 437.4 424.2 Q436.6 425.5 435.9 426.8 Q435.2 428.2 434.6 429.5 Q434.0 430.9 433.5 432.4 Q433.0 433.8 432.6 435.3 Q432.1 436.8 431.8 438.3 Q431.5 439.8 431.2 441.3 Q431.0 442.8 430.8 444.4 Q430.5 445.9 430.4 447.4 Q430.2 449.0 430.0 450.5 Q429.8 452.1 429.6 453.6 Q429.3 455.1 429.1 456.6 Q428.8 458.1 428.4 459.5 Q428.1 461.0 427.7 462.4 Q427.2 463.8 426.7 465.2 Q426.2 466.6 425.6 468.0 Q424.9 469.3 424.2 470.7 Q423.5 472.0 422.7 473.3 Q421.9 474.6 421.1 475.9 Q420.3 477.2 419.4 478.5 L418.5 479.8" fill="none" stroke="#4b6f5f" stroke-width="1.2" opacity="0.68" stroke-linecap="round"/><path d="M504.5 283.6 Q502.1 285.4 500.9 286.4 Q499.8 287.3 498.6 288.3 Q497.5 289.2 496.3 290.2 Q495.2 291.2 494.1 292.2 Q493.0 293.2 491.9 294.2 Q490.8 295.3 489.7 296.3 Q488.6 297.4 487.5 298.5 Q486.5 299.5 485.5 300.6 Q484.4 301.7 483.4 302.9 Q482.4 304.0 481.4 305.1 Q480.4 306.3 479.4 307.4 L478.5 308.6" fill="none" stroke="#4b6f5f" stroke-width="1.2" opacity="0.64" stroke-linecap="round"/><path d="M326.4 510.0 Q325.3 512.8 324.8 514.3 Q324.3 515.7 323.9 517.2 Q323.5 518.6 323.2 520.1 Q322.9 521.6 322.6 523.1 Q322.4 524.6 322.3 526.1 Q322.2 527.6 322.1 529.1 Q322.1 530.6 322.1 532.1 Q322.1 533.7 322.2 535.2 Q322.3 536.7 322.4 538.2 Q322.4 539.8 322.5 541.3 Q322.6 542.8 322.7 544.3 Q322.7 545.8 322.7 547.3 Q322.7 548.8 322.7 550.3 Q322.6 551.8 322.5 553.3 Q322.3 554.8 322.1 556.3 Q321.8 557.8 321.5 559.3 Q321.2 560.7 320.8 562.2 Q320.4 563.7 320.0 565.1 Q319.6 566.6 319.1 568.1 Q318.7 569.5 318.3 571.0 Q317.8 572.5 317.4 573.9 L317.0 575.4" fill="none" stroke="#4b6f5f" stroke-width="1.0" opacity="0.64" stroke-linecap="round"/><path d="M446.3 549.6 Q446.4 552.6 446.6 554.2 Q446.8 555.7 447.1 557.2 Q447.3 558.8 447.6 560.3 Q447.9 561.8 448.2 563.4 Q448.5 564.9 448.8 566.4 Q449.0 568.0 449.2 569.5 Q449.4 571.0 449.4 572.5 Q449.5 574.1 449.4 575.6 Q449.4 577.1 449.2 578.5 Q449.0 580.0 448.6 581.5 Q448.3 583.0 447.8 584.4 Q447.4 585.9 446.9 587.4 Q446.3 588.8 445.7 590.3 Q445.2 591.7 444.6 593.2 L444.0 594.6" fill="none" stroke="#4b6f5f" stroke-width="1.2" opacity="0.82" stroke-linecap="round"/><path d="M345.0 545.5 Q344.7 548.5 344.5 550.0 Q344.2 551.4 343.8 552.9 Q343.5 554.4 343.0 555.9 Q342.6 557.3 342.1 558.8 Q341.6 560.2 341.0 561.7 Q340.5 563.1 340.0 564.6 Q339.4 566.0 338.9 567.5 Q338.5 569.0 338.1 570.4 Q337.6 571.9 337.3 573.4 Q337.0 574.8 336.8 576.3 Q336.6 577.8 336.5 579.3 L336.5 580.8" fill="none" stroke="#4b6f5f" stroke-width="1.5" opacity="0.50" stroke-linecap="round"/><path d="M441.7 388.7 Q440.3 391.4 439.6 392.7 Q438.9 394.1 438.2 395.4 Q437.5 396.7 436.8 398.0 Q436.0 399.3 435.3 400.6 Q434.5 401.9 433.8 403.2 Q433.0 404.4 432.2 405.7 Q431.4 407.0 430.5 408.2 Q429.7 409.5 428.9 410.7 Q428.0 411.9 427.2 413.2 Q426.3 414.4 425.4 415.6 Q424.6 416.9 423.7 418.1 Q422.8 419.4 422.0 420.6 Q421.1 421.9 420.3 423.1 Q419.5 424.4 418.7 425.7 Q417.8 426.9 417.1 428.2 Q416.3 429.5 415.6 430.9 Q414.9 432.2 414.2 433.5 Q413.5 434.9 412.9 436.3 Q412.3 437.6 411.7 439.0 Q411.2 440.4 410.7 441.9 Q410.2 443.3 409.7 444.7 Q409.3 446.2 408.9 447.6 L408.4 449.1" fill="none" stroke="#4b6f5f" stroke-width="0.8" opacity="0.81" stroke-linecap="round"/><path d="M408.5 438.1 Q407.6 441.0 407.2 442.5 Q406.9 443.9 406.6 445.5 Q406.3 447.0 406.1 448.5 Q405.9 450.1 405.7 451.6 Q405.6 453.2 405.4 454.7 Q405.3 456.3 405.2 457.8 Q405.0 459.4 404.9 460.9 Q404.7 462.4 404.5 463.9 Q404.2 465.4 403.9 466.9 Q403.6 468.4 403.2 469.8 Q402.8 471.2 402.3 472.6 Q401.8 474.0 401.2 475.4 Q400.5 476.7 399.8 478.1 Q399.1 479.4 398.3 480.7 Q397.5 482.1 396.7 483.4 Q395.8 484.7 394.9 486.0 Q394.1 487.3 393.2 488.6 Q392.4 489.9 391.5 491.3 Q390.7 492.6 390.0 494.0 Q389.3 495.4 388.6 496.8 Q388.0 498.2 387.5 499.6 Q387.0 501.0 386.7 502.5 Q386.3 504.0 386.1 505.5 Q385.9 507.0 385.9 508.5 Q385.8 510.1 385.9 511.6 Q385.9 513.2 386.1 514.7 Q386.2 516.3 386.4 517.9 Q386.6 519.4 386.9 521.0 Q387.1 522.6 387.3 524.1 Q387.5 525.6 387.6 527.2 L387.7 528.7" fill="none" stroke="#4b6f5f" stroke-width="1.1" opacity="0.57" stroke-linecap="round"/><path d="M409.2 592.3 Q408.6 595.3 408.2 596.8 Q407.9 598.2 407.5 599.7 Q407.0 601.2 406.6 602.6 Q406.2 604.1 405.7 605.5 Q405.3 607.0 404.9 608.5 Q404.5 609.9 404.2 611.4 Q403.8 612.9 403.6 614.4 Q403.3 615.9 403.1 617.3 Q402.9 618.8 402.8 620.3 Q402.7 621.8 402.7 623.3 Q402.6 624.8 402.7 626.3 Q402.7 627.9 402.8 629.4 Q402.9 630.9 403.1 632.4 Q403.2 633.9 403.3 635.5 Q403.5 637.0 403.6 638.5 Q403.7 640.0 403.7 641.5 Q403.8 643.0 403.8 644.6 Q403.8 646.1 403.7 647.6 Q403.7 649.1 403.5 650.5 Q403.3 652.0 403.1 653.5 Q402.8 655.0 402.5 656.5 Q402.2 658.0 401.8 659.4 Q401.4 660.9 401.0 662.4 Q400.6 663.8 400.2 665.3 Q399.7 666.8 399.3 668.2 Q398.9 669.7 398.5 671.2 Q398.1 672.6 397.8 674.1 Q397.5 675.6 397.2 677.1 Q397.0 678.5 396.8 680.0 L396.6 681.5" fill="none" stroke="#4b6f5f" stroke-width="1.4" opacity="0.62" stroke-linecap="round"/><path d="M467.3 323.2 Q465.5 325.6 464.6 326.8 Q463.7 328.1 462.8 329.3 Q461.9 330.5 461.0 331.6 Q460.1 332.8 459.1 334.0 Q458.2 335.1 457.2 336.2 Q456.2 337.3 455.2 338.4 Q454.2 339.5 453.1 340.6 Q452.1 341.6 451.0 342.7 Q449.9 343.7 448.8 344.7 Q447.7 345.7 446.6 346.7 Q445.4 347.7 444.3 348.7 Q443.1 349.7 441.9 350.6 Q440.8 351.6 439.6 352.6 Q438.4 353.5 437.2 354.5 Q436.0 355.5 434.8 356.4 Q433.6 357.4 432.4 358.4 Q431.2 359.4 430.1 360.4 Q428.9 361.4 427.8 362.5 Q426.7 363.5 425.6 364.6 Q424.6 365.7 423.5 366.8 Q422.5 367.9 421.6 369.1 Q420.6 370.3 419.7 371.5 Q418.8 372.7 418.0 374.0 Q417.2 375.3 416.4 376.6 Q415.7 377.9 415.0 379.2 Q414.3 380.6 413.7 382.0 Q413.0 383.4 412.5 384.8 Q411.9 386.3 411.4 387.7 Q410.8 389.2 410.3 390.6 L409.8 392.1" fill="none" stroke="#4b6f5f" stroke-width="0.9" opacity="0.72" stroke-linecap="round"/><path d="M372.2 576.8 Q372.3 579.8 372.4 581.3 Q372.5 582.8 372.6 584.3 Q372.7 585.9 372.8 587.4 Q372.9 588.9 373.0 590.4 Q373.0 591.9 373.0 593.4 Q373.0 594.9 372.9 596.4 Q372.8 597.9 372.6 599.4 Q372.5 600.9 372.2 602.4 Q372.0 603.9 371.7 605.4 Q371.4 606.8 371.0 608.3 L370.7 609.8" fill="none" stroke="#4b6f5f" stroke-width="1.3" opacity="0.61" stroke-linecap="round"/><path d="M547.7 311.0 Q545.5 313.0 544.4 314.0 Q543.3 315.0 542.2 316.0 Q541.0 317.0 539.9 317.9 Q538.7 318.9 537.6 319.8 Q536.4 320.8 535.2 321.7 Q534.0 322.6 532.8 323.5 Q531.6 324.5 530.4 325.4 Q529.1 326.3 527.9 327.2 Q526.7 328.1 525.5 329.0 Q524.2 329.9 523.0 330.8 Q521.8 331.7 520.6 332.6 Q519.3 333.5 518.1 334.5 Q516.9 335.4 515.7 336.4 Q514.6 337.4 513.4 338.3 Q512.3 339.3 511.1 340.4 Q510.0 341.4 508.9 342.5 Q507.9 343.5 506.8 344.6 Q505.8 345.7 504.8 346.9 Q503.8 348.0 502.9 349.2 Q502.0 350.4 501.1 351.7 Q500.2 352.9 499.4 354.2 Q498.6 355.5 497.8 356.8 Q497.0 358.1 496.3 359.4 Q495.6 360.8 494.9 362.1 Q494.2 363.5 493.6 364.9 L492.9 366.3" fill="none" stroke="#4b6f5f" stroke-width="1.1" opacity="0.53" stroke-linecap="round"/><path d="M431.1 497.9 Q430.9 500.9 430.9 502.5 Q430.9 504.0 431.0 505.6 Q431.0 507.1 431.0 508.7 Q431.1 510.2 431.1 511.7 Q431.1 513.3 431.1 514.8 Q431.1 516.3 431.0 517.8 Q430.9 519.3 430.7 520.8 Q430.5 522.2 430.2 523.7 Q429.9 525.2 429.5 526.6 Q429.1 528.1 428.7 529.5 Q428.2 530.9 427.6 532.4 Q427.1 533.8 426.5 535.2 Q425.9 536.6 425.3 538.1 Q424.7 539.5 424.1 541.0 Q423.6 542.4 423.1 543.9 Q422.6 545.3 422.1 546.8 Q421.7 548.3 421.4 549.7 Q421.1 551.2 420.9 552.7 Q420.7 554.2 420.7 555.7 Q420.6 557.2 420.7 558.7 Q420.7 560.2 420.9 561.8 Q421.0 563.3 421.3 564.8 Q421.5 566.3 421.7 567.9 Q422.0 569.4 422.2 570.9 Q422.5 572.5 422.7 574.0 Q422.9 575.5 423.0 577.0 Q423.2 578.6 423.2 580.1 Q423.2 581.6 423.2 583.1 Q423.1 584.6 422.9 586.1 L422.7 587.6" fill="none" stroke="#4b6f5f" stroke-width="1.0" opacity="0.61" stroke-linecap="round"/><path d="M399.6 489.9 Q398.1 492.6 397.4 494.0 Q396.8 495.4 396.3 496.8 Q395.8 498.3 395.4 499.7 Q395.0 501.2 394.8 502.7 Q394.6 504.2 394.5 505.7 Q394.4 507.3 394.4 508.8 Q394.5 510.4 394.6 511.9 Q394.7 513.5 394.9 515.1 Q395.1 516.6 395.3 518.2 Q395.5 519.8 395.7 521.3 Q395.9 522.9 396.0 524.4 L396.1 525.9" fill="none" stroke="#4b6f5f" stroke-width="1.1" opacity="0.68" stroke-linecap="round"/><path d="M507.4 362.0 Q506.0 364.8 505.4 366.2 Q504.7 367.5 504.1 368.9 Q503.4 370.3 502.8 371.7 Q502.1 373.0 501.4 374.4 Q500.8 375.8 500.1 377.1 Q499.4 378.4 498.7 379.7 Q497.9 381.0 497.2 382.3 Q496.4 383.6 495.6 384.8 Q494.8 386.1 493.9 387.3 Q493.0 388.5 492.1 389.7 Q491.2 390.9 490.3 392.1 Q489.3 393.2 488.3 394.3 Q487.3 395.5 486.3 396.6 Q485.3 397.7 484.2 398.8 L483.1 399.9" fill="none" stroke="#4b6f5f" stroke-width="0.9" opacity="0.60" stroke-linecap="round"/><path d="M559.0 348.6 Q560.3 351.4 561.0 352.9 Q561.6 354.3 562.1 355.8 Q562.7 357.2 563.1 358.7 Q563.6 360.2 563.9 361.6 Q564.2 363.1 564.4 364.6 Q564.6 366.1 564.6 367.7 Q564.7 369.2 564.6 370.7 Q564.5 372.3 564.4 373.8 Q564.2 375.4 564.1 377.0 Q563.9 378.5 563.7 380.1 Q563.5 381.7 563.3 383.2 Q563.2 384.8 563.1 386.3 Q563.1 387.8 563.1 389.4 Q563.2 390.9 563.3 392.4 Q563.5 393.9 563.9 395.4 L564.2 396.9" fill="none" stroke="#4b6f5f" stroke-width="0.9" opacity="0.81" stroke-linecap="round"/><path d="M461.4 530.1 Q460.1 532.9 459.5 534.4 Q458.9 535.8 458.4 537.3 Q458.0 538.7 457.7 540.2 Q457.3 541.7 457.2 543.2 Q457.0 544.7 457.0 546.2 Q457.0 547.7 457.2 549.3 Q457.3 550.8 457.6 552.3 Q457.9 553.9 458.2 555.4 Q458.5 557.0 458.9 558.5 Q459.2 560.0 459.6 561.6 Q459.9 563.1 460.2 564.7 Q460.4 566.2 460.6 567.7 Q460.8 569.2 460.8 570.7 Q460.8 572.3 460.7 573.8 Q460.6 575.3 460.3 576.7 Q460.0 578.2 459.6 579.7 Q459.2 581.1 458.7 582.6 L458.2 584.1" fill="none" stroke="#4b6f5f" stroke-width="1.1" opacity="0.56" stroke-linecap="round"/><path d="M494.5 492.5 Q494.4 495.5 494.3 497.0 Q494.2 498.5 494.0 500.0 Q493.8 501.5 493.6 503.0 Q493.3 504.5 492.9 505.9 Q492.6 507.3 492.1 508.8 Q491.6 510.2 491.1 511.6 Q490.5 513.0 489.9 514.4 Q489.3 515.8 488.6 517.2 Q488.0 518.6 487.3 520.0 Q486.6 521.4 486.0 522.8 Q485.3 524.2 484.7 525.6 Q484.1 527.1 483.6 528.5 Q483.1 530.0 482.7 531.4 Q482.3 532.9 482.0 534.4 Q481.7 535.9 481.6 537.4 Q481.4 538.9 481.4 540.4 Q481.4 541.9 481.5 543.5 L481.6 545.0" fill="none" stroke="#4b6f5f" stroke-width="1.3" opacity="0.68" stroke-linecap="round"/><path d="M566.9 319.5 Q566.7 322.6 566.7 324.2 Q566.7 325.7 566.7 327.2 Q566.8 328.7 567.0 330.2 Q567.1 331.8 567.4 333.3 Q567.6 334.7 568.0 336.2 Q568.4 337.7 568.8 339.2 Q569.3 340.6 569.8 342.1 Q570.3 343.6 570.8 345.0 Q571.4 346.5 571.9 347.9 Q572.4 349.4 573.0 350.8 Q573.5 352.3 573.9 353.7 Q574.3 355.2 574.7 356.7 Q575.0 358.2 575.3 359.7 Q575.5 361.2 575.7 362.7 Q575.8 364.2 575.9 365.7 Q575.9 367.2 575.9 368.8 Q575.9 370.3 575.8 371.9 Q575.7 373.4 575.6 375.0 Q575.5 376.5 575.5 378.1 Q575.4 379.6 575.3 381.1 Q575.3 382.7 575.4 384.2 Q575.4 385.7 575.5 387.2 Q575.7 388.8 575.9 390.3 L576.2 391.8" fill="none" stroke="#4b6f5f" stroke-width="1.1" opacity="0.77" stroke-linecap="round"/><path d="M386.2 435.3 Q384.6 437.9 383.8 439.2 Q383.1 440.5 382.4 441.9 Q381.8 443.3 381.2 444.7 Q380.6 446.1 380.1 447.5 Q379.7 448.9 379.3 450.4 Q378.9 451.9 378.5 453.4 Q378.2 454.9 378.0 456.4 Q377.7 457.9 377.5 459.4 Q377.3 460.9 377.1 462.5 Q376.9 464.0 376.7 465.5 Q376.6 467.0 376.3 468.5 Q376.1 470.0 375.9 471.5 Q375.6 473.0 375.3 474.5 Q375.0 476.0 374.6 477.4 L374.2 478.8" fill="none" stroke="#4b6f5f" stroke-width="1.1" opacity="0.51" stroke-linecap="round"/><path d="M451.2 417.9 Q449.5 420.4 448.7 421.7 Q448.0 423.0 447.3 424.3 Q446.6 425.7 446.0 427.1 Q445.4 428.5 444.9 429.9 Q444.4 431.3 444.0 432.8 Q443.5 434.3 443.2 435.8 Q442.8 437.3 442.6 438.8 Q442.3 440.3 442.0 441.8 Q441.8 443.3 441.5 444.9 Q441.3 446.4 441.1 447.9 Q440.8 449.4 440.6 450.9 Q440.3 452.4 440.0 453.9 Q439.7 455.4 439.3 456.8 Q438.9 458.3 438.4 459.7 Q438.0 461.1 437.4 462.5 L436.9 463.9" fill="none" stroke="#4b6f5f" stroke-width="0.9" opacity="0.82" stroke-linecap="round"/><path d="M571.1 345.7 Q572.2 348.6 572.8 350.0 Q573.3 351.5 573.8 353.0 Q574.3 354.4 574.6 355.9 Q575.0 357.4 575.3 358.9 Q575.6 360.4 575.8 361.9 Q575.9 363.4 576.0 364.9 Q576.1 366.4 576.0 368.0 Q576.0 369.5 575.9 371.0 Q575.8 372.6 575.7 374.1 Q575.6 375.7 575.5 377.2 Q575.4 378.8 575.3 380.3 Q575.2 381.9 575.2 383.4 L575.2 384.9" fill="none" stroke="#4b6f5f" stroke-width="0.8" opacity="0.61" stroke-linecap="round"/><path d="M400.3 472.9 Q399.2 475.7 398.6 477.0 Q397.9 478.4 397.2 479.7 Q396.5 481.1 395.7 482.4 Q394.9 483.7 394.1 485.0 Q393.3 486.4 392.4 487.7 Q391.6 489.0 390.8 490.4 Q390.0 491.7 389.3 493.1 Q388.5 494.4 387.9 495.8 Q387.2 497.2 386.7 498.6 Q386.1 500.0 385.7 501.5 Q385.3 503.0 385.0 504.4 L384.7 505.9" fill="none" stroke="#4b6f5f" stroke-width="0.9" opacity="0.59" stroke-linecap="round"/><path d="M359.8 508.0 Q359.1 511.0 358.9 512.4 Q358.6 513.9 358.5 515.5 Q358.4 517.0 358.5 518.5 Q358.5 520.1 358.6 521.6 Q358.7 523.2 358.9 524.7 Q359.1 526.3 359.3 527.8 Q359.5 529.4 359.7 530.9 Q359.9 532.5 360.0 534.0 Q360.1 535.5 360.2 537.0 Q360.2 538.5 360.2 540.0 Q360.1 541.5 359.9 543.0 Q359.8 544.5 359.5 545.9 Q359.2 547.4 358.7 548.9 Q358.3 550.3 357.8 551.8 Q357.3 553.2 356.7 554.7 Q356.2 556.1 355.5 557.6 Q354.9 559.0 354.3 560.5 Q353.7 561.9 353.2 563.4 Q352.6 564.8 352.2 566.3 Q351.7 567.7 351.4 569.2 Q351.0 570.7 350.8 572.2 Q350.6 573.7 350.6 575.2 Q350.5 576.7 350.6 578.2 Q350.6 579.7 350.8 581.2 Q351.0 582.7 351.3 584.3 Q351.5 585.8 351.8 587.3 Q352.1 588.9 352.4 590.4 Q352.8 592.0 353.0 593.5 L353.3 595.0" fill="none" stroke="#4b6f5f" stroke-width="0.8" opacity="0.64" stroke-linecap="round"/><path d="M431.4 338.8 Q429.4 341.1 428.5 342.3 Q427.5 343.4 426.5 344.6 Q425.5 345.7 424.6 346.8 Q423.6 347.9 422.6 349.0 Q421.6 350.1 420.5 351.3 Q419.5 352.4 418.5 353.5 Q417.5 354.5 416.5 355.6 Q415.4 356.7 414.4 357.8 Q413.3 358.9 412.3 360.0 Q411.3 361.1 410.2 362.2 Q409.2 363.3 408.2 364.4 Q407.1 365.5 406.1 366.6 Q405.1 367.7 404.1 368.9 Q403.1 370.0 402.1 371.1 Q401.2 372.3 400.2 373.5 Q399.3 374.6 398.3 375.8 Q397.4 377.0 396.5 378.3 Q395.7 379.5 394.8 380.7 Q394.0 382.0 393.2 383.2 Q392.4 384.5 391.6 385.8 Q390.8 387.1 390.1 388.4 Q389.4 389.7 388.7 391.1 Q388.0 392.4 387.3 393.8 Q386.6 395.1 386.0 396.5 Q385.4 397.9 384.7 399.2 Q384.1 400.6 383.5 402.0 Q382.9 403.4 382.3 404.7 Q381.7 406.1 381.0 407.5 Q380.4 408.9 379.8 410.2 Q379.2 411.6 378.5 412.9 Q377.9 414.3 377.2 415.6 L376.5 417.0" fill="none" stroke="#4b6f5f" stroke-width="1.1" opacity="0.77" stroke-linecap="round"/><path d="M460.2 528.2 Q459.2 531.1 458.7 532.5 Q458.2 534.0 457.8 535.4 Q457.4 536.9 457.0 538.3 Q456.7 539.8 456.4 541.3 Q456.2 542.8 456.0 544.3 Q455.9 545.8 455.8 547.3 Q455.7 548.8 455.8 550.3 Q455.8 551.8 455.9 553.4 Q456.0 554.9 456.2 556.4 L456.3 557.9" fill="none" stroke="#4b6f5f" stroke-width="1.4" opacity="0.55" stroke-linecap="round"/><path d="M438.4 366.3 Q436.5 368.7 435.7 370.0 Q434.8 371.2 434.0 372.5 Q433.1 373.7 432.3 375.0 Q431.5 376.3 430.8 377.6 Q430.0 378.9 429.3 380.2 Q428.5 381.5 427.8 382.8 Q427.1 384.2 426.4 385.5 Q425.8 386.9 425.1 388.2 Q424.4 389.6 423.8 390.9 Q423.1 392.3 422.4 393.6 Q421.8 395.0 421.1 396.3 Q420.5 397.7 419.8 399.0 Q419.1 400.4 418.4 401.7 Q417.7 403.0 417.0 404.3 Q416.3 405.6 415.6 406.9 Q414.8 408.2 414.0 409.5 Q413.3 410.8 412.5 412.1 Q411.7 413.3 410.9 414.6 L410.0 415.9" fill="none" stroke="#4b6f5f" stroke-width="0.8" opacity="0.85" stroke-linecap="round"/><path d="M490.2 345.4 Q488.0 347.5 486.9 348.6 Q485.9 349.6 484.8 350.8 Q483.8 351.9 482.8 353.0 Q481.9 354.2 481.0 355.4 Q480.1 356.6 479.2 357.9 Q478.4 359.1 477.6 360.4 Q476.8 361.7 476.0 363.0 Q475.3 364.4 474.6 365.7 Q473.9 367.1 473.2 368.5 Q472.6 369.9 472.0 371.3 Q471.3 372.7 470.8 374.1 Q470.2 375.5 469.6 376.9 Q469.0 378.4 468.4 379.8 Q467.8 381.2 467.3 382.6 Q466.7 384.0 466.1 385.4 Q465.4 386.8 464.8 388.1 Q464.2 389.5 463.5 390.8 Q462.8 392.1 462.0 393.4 Q461.3 394.7 460.5 396.0 L459.7 397.2" fill="none" stroke="#4b6f5f" stroke-width="1.1" opacity="0.62" stroke-linecap="round"/><path d="M522.7 279.0 Q520.3 280.9 519.2 281.9 Q518.0 282.8 516.9 283.8 Q515.7 284.8 514.6 285.8 Q513.5 286.8 512.4 287.8 Q511.3 288.8 510.2 289.9 Q509.1 290.9 508.0 292.0 Q507.0 293.0 505.9 294.1 Q504.9 295.2 503.9 296.3 Q502.8 297.5 501.8 298.6 Q500.8 299.7 499.9 300.9 Q498.9 302.0 497.9 303.2 Q497.0 304.4 496.0 305.6 Q495.1 306.7 494.1 307.9 Q493.2 309.1 492.3 310.3 Q491.3 311.5 490.4 312.7 Q489.5 313.9 488.6 315.1 Q487.6 316.3 486.7 317.5 L485.8 318.7" fill="none" stroke="#4b6f5f" stroke-width="1.4" opacity="0.71" stroke-linecap="round"/><path d="M439.5 563.5 Q440.1 566.6 440.4 568.1 Q440.7 569.6 440.9 571.2 Q441.1 572.7 441.2 574.2 Q441.3 575.7 441.2 577.2 Q441.2 578.7 441.0 580.2 Q440.9 581.7 440.6 583.2 Q440.3 584.7 439.8 586.1 Q439.4 587.6 438.9 589.0 Q438.4 590.5 437.8 591.9 Q437.2 593.4 436.6 594.8 Q436.0 596.3 435.4 597.7 Q434.8 599.2 434.2 600.6 Q433.7 602.1 433.3 603.6 Q432.8 605.0 432.5 606.5 Q432.2 608.0 432.0 609.5 Q431.9 611.0 431.8 612.5 Q431.8 614.0 431.9 615.5 L432.0 617.0" fill="none" stroke="#4b6f5f" stroke-width="1.0" opacity="0.62" stroke-linecap="round"/><path d="M369.5 457.4 Q368.9 460.4 368.6 461.9 Q368.3 463.4 368.0 464.9 Q367.8 466.4 367.5 467.9 Q367.3 469.4 367.0 470.9 Q366.7 472.3 366.4 473.8 Q366.1 475.3 365.7 476.7 Q365.4 478.2 365.0 479.6 Q364.6 481.1 364.2 482.5 Q363.7 483.9 363.2 485.3 Q362.7 486.7 362.1 488.1 Q361.6 489.5 361.0 490.9 Q360.4 492.3 359.8 493.7 L359.1 495.1" fill="none" stroke="#4b6f5f" stroke-width="1.0" opacity="0.66" stroke-linecap="round"/><path d="M412.1 421.1 Q410.1 423.5 409.2 424.7 Q408.2 425.9 407.2 427.1 Q406.3 428.3 405.4 429.5 Q404.5 430.8 403.7 432.1 Q402.9 433.4 402.2 434.7 Q401.4 436.0 400.8 437.4 Q400.1 438.7 399.5 440.1 Q399.0 441.5 398.5 443.0 Q398.1 444.4 397.7 445.9 Q397.3 447.4 397.0 448.9 Q396.7 450.4 396.4 451.9 Q396.2 453.4 396.0 455.0 Q395.8 456.5 395.6 458.0 Q395.4 459.6 395.2 461.1 Q395.0 462.6 394.8 464.1 Q394.6 465.6 394.3 467.1 Q394.0 468.6 393.7 470.0 Q393.3 471.5 392.9 472.9 Q392.5 474.3 392.0 475.7 Q391.4 477.1 390.8 478.5 Q390.2 479.9 389.6 481.2 Q388.9 482.6 388.2 483.9 Q387.4 485.3 386.6 486.6 Q385.9 487.9 385.1 489.3 Q384.3 490.6 383.5 492.0 Q382.8 493.3 382.1 494.7 Q381.3 496.1 380.7 497.5 Q380.0 498.8 379.5 500.3 Q379.0 501.7 378.5 503.1 Q378.1 504.6 377.8 506.1 Q377.5 507.6 377.3 509.1 Q377.1 510.6 377.1 512.1 L377.0 513.6" fill="none" stroke="#4b6f5f" stroke-width="1.4" opacity="0.57" stroke-linecap="round"/><path d="M418.3 399.6 Q417.1 402.4 416.5 403.7 Q415.9 405.1 415.2 406.4 Q414.5 407.7 413.8 409.0 Q413.0 410.3 412.2 411.6 Q411.4 412.8 410.6 414.1 Q409.7 415.3 408.8 416.5 Q407.8 417.7 406.9 418.8 Q405.9 420.0 404.9 421.2 Q403.9 422.3 402.9 423.5 Q401.8 424.7 400.8 425.8 L399.8 427.0" fill="none" stroke="#4b6f5f" stroke-width="1.0" opacity="0.77" stroke-linecap="round"/><path d="M441.1 346.7 Q438.9 348.8 437.9 349.9 Q436.8 350.9 435.7 352.0 Q434.7 353.0 433.6 354.1 Q432.5 355.2 431.5 356.2 Q430.4 357.3 429.3 358.4 Q428.3 359.5 427.2 360.5 Q426.2 361.6 425.2 362.7 Q424.1 363.8 423.1 365.0 Q422.1 366.1 421.1 367.2 L420.1 368.4" fill="none" stroke="#4b6f5f" stroke-width="1.2" opacity="0.51" stroke-linecap="round"/><path d="M414.3 413.3 Q412.6 415.8 411.8 417.1 Q410.9 418.3 410.1 419.6 Q409.2 420.8 408.3 422.0 Q407.4 423.3 406.6 424.5 Q405.7 425.8 404.9 427.0 Q404.0 428.3 403.2 429.6 Q402.4 430.8 401.6 432.1 Q400.9 433.4 400.1 434.8 Q399.4 436.1 398.8 437.4 Q398.1 438.8 397.5 440.2 Q396.9 441.6 396.3 443.0 Q395.8 444.4 395.3 445.8 Q394.8 447.2 394.4 448.7 Q394.0 450.1 393.6 451.6 Q393.2 453.1 392.9 454.6 Q392.5 456.0 392.2 457.5 Q391.9 459.0 391.6 460.5 Q391.3 462.0 390.9 463.4 Q390.6 464.9 390.3 466.4 Q389.9 467.8 389.6 469.3 Q389.2 470.7 388.8 472.2 L388.4 473.6" fill="none" stroke="#4b6f5f" stroke-width="1.3" opacity="0.59" stroke-linecap="round"/><path d="M403.0 516.7 Q403.0 519.7 403.0 521.3 Q403.0 522.8 402.9 524.3 Q402.9 525.8 402.7 527.3 Q402.6 528.8 402.4 530.2 Q402.2 531.7 401.9 533.2 Q401.6 534.6 401.2 536.1 Q400.8 537.5 400.3 539.0 Q399.9 540.4 399.4 541.9 Q398.9 543.3 398.4 544.8 Q397.9 546.2 397.4 547.7 Q396.9 549.1 396.4 550.6 Q396.0 552.1 395.6 553.5 Q395.2 555.0 394.9 556.5 Q394.6 558.0 394.4 559.4 Q394.1 560.9 394.0 562.4 Q393.9 563.9 393.9 565.4 Q393.9 566.9 394.0 568.5 Q394.1 570.0 394.2 571.5 L394.4 573.0" fill="none" stroke="#4b6f5f" stroke-width="1.4" opacity="0.58" stroke-linecap="round"/><path d="M405.3 383.5 Q403.8 386.1 403.1 387.4 Q402.4 388.7 401.7 390.1 Q401.0 391.4 400.4 392.8 Q399.7 394.2 399.1 395.5 Q398.4 396.9 397.8 398.3 Q397.2 399.6 396.5 401.0 Q395.9 402.4 395.3 403.7 Q394.6 405.1 394.0 406.4 Q393.3 407.8 392.7 409.1 Q392.0 410.5 391.3 411.8 Q390.6 413.1 389.9 414.4 Q389.2 415.7 388.5 417.0 Q387.7 418.3 386.9 419.6 Q386.2 420.9 385.4 422.2 L384.6 423.5" fill="none" stroke="#4b6f5f" stroke-width="0.8" opacity="0.72" stroke-linecap="round"/><path d="M378.1 507.4 Q377.8 510.4 377.8 512.0 Q377.8 513.5 377.9 515.1 Q378.0 516.6 378.2 518.2 Q378.4 519.8 378.6 521.3 Q378.8 522.9 379.1 524.5 Q379.3 526.0 379.4 527.5 Q379.6 529.1 379.7 530.6 Q379.8 532.1 379.8 533.6 Q379.8 535.1 379.6 536.6 Q379.5 538.1 379.2 539.6 Q378.9 541.0 378.4 542.5 Q378.0 543.9 377.5 545.3 Q377.0 546.8 376.3 548.2 Q375.7 549.7 375.1 551.1 Q374.4 552.5 373.8 554.0 Q373.1 555.4 372.5 556.9 Q371.9 558.3 371.3 559.8 Q370.8 561.2 370.4 562.7 Q370.0 564.2 369.7 565.6 Q369.5 567.1 369.3 568.6 Q369.2 570.1 369.3 571.6 Q369.3 573.1 369.5 574.7 Q369.7 576.2 369.9 577.7 Q370.2 579.3 370.6 580.8 L370.9 582.3" fill="none" stroke="#4b6f5f" stroke-width="1.4" opacity="0.58" stroke-linecap="round"/><path d="M517.5 291.0 Q515.4 293.1 514.3 294.2 Q513.3 295.3 512.3 296.4 Q511.2 297.5 510.2 298.6 Q509.2 299.7 508.2 300.9 Q507.2 302.0 506.2 303.1 Q505.2 304.3 504.3 305.4 Q503.3 306.6 502.3 307.7 Q501.3 308.9 500.4 310.0 Q499.4 311.2 498.4 312.4 Q497.5 313.5 496.5 314.7 Q495.6 315.8 494.6 317.0 Q493.6 318.1 492.6 319.2 Q491.7 320.4 490.7 321.5 Q489.7 322.6 488.7 323.8 Q487.7 324.9 486.7 326.0 Q485.7 327.1 484.7 328.1 Q483.6 329.2 482.6 330.3 Q481.5 331.4 480.5 332.4 L479.4 333.5" fill="none" stroke="#4b6f5f" stroke-width="0.8" opacity="0.63" stroke-linecap="round"/><path d="M416.8 438.3 Q415.8 441.1 415.3 442.6 Q414.8 444.0 414.4 445.5 Q414.0 446.9 413.7 448.4 Q413.3 449.9 413.0 451.4 Q412.6 452.8 412.3 454.3 Q411.9 455.8 411.6 457.3 Q411.2 458.7 410.9 460.2 Q410.5 461.6 410.1 463.1 Q409.7 464.5 409.3 466.0 Q408.9 467.4 408.4 468.8 Q407.9 470.2 407.4 471.6 Q406.8 473.0 406.3 474.4 Q405.7 475.8 405.1 477.2 Q404.4 478.5 403.8 479.9 Q403.1 481.3 402.5 482.6 L401.8 484.0" fill="none" stroke="#4b6f5f" stroke-width="1.1" opacity="0.67" stroke-linecap="round"/><path d="M364.3 499.3 Q363.2 502.1 362.7 503.6 Q362.2 505.0 361.8 506.4 Q361.4 507.9 361.0 509.4 Q360.7 510.8 360.4 512.3 Q360.1 513.8 359.9 515.3 Q359.7 516.8 359.6 518.3 Q359.5 519.8 359.4 521.3 Q359.4 522.8 359.3 524.4 Q359.3 525.9 359.3 527.4 Q359.3 528.9 359.3 530.4 Q359.3 531.9 359.3 533.4 Q359.3 535.0 359.2 536.5 Q359.2 538.0 359.1 539.4 Q358.9 540.9 358.8 542.4 L358.6 543.9" fill="none" stroke="#4b6f5f" stroke-width="1.0" opacity="0.65" stroke-linecap="round"/><path d="M360.5 470.0 Q360.1 473.0 359.9 474.5 Q359.7 476.0 359.4 477.5 Q359.2 479.0 358.9 480.4 Q358.5 481.9 358.1 483.3 Q357.7 484.8 357.2 486.2 Q356.7 487.6 356.2 489.0 Q355.6 490.4 354.9 491.7 Q354.3 493.1 353.6 494.5 Q352.9 495.8 352.2 497.2 Q351.5 498.6 350.8 499.9 Q350.1 501.3 349.4 502.7 Q348.7 504.1 348.1 505.5 Q347.4 506.9 346.9 508.3 Q346.3 509.7 345.9 511.2 Q345.4 512.6 345.1 514.1 Q344.8 515.6 344.6 517.1 Q344.4 518.6 344.3 520.1 Q344.2 521.6 344.2 523.1 Q344.2 524.7 344.3 526.2 Q344.3 527.7 344.5 529.3 Q344.6 530.8 344.8 532.4 Q344.9 533.9 345.1 535.4 Q345.2 537.0 345.3 538.5 Q345.4 540.0 345.4 541.5 Q345.4 543.0 345.4 544.5 L345.3 546.0" fill="none" stroke="#4b6f5f" stroke-width="1.3" opacity="0.51" stroke-linecap="round"/><path d="M440.5 392.0 Q439.1 394.7 438.5 396.0 Q437.8 397.3 437.1 398.6 Q436.3 400.0 435.6 401.2 Q434.8 402.5 434.1 403.8 Q433.3 405.1 432.4 406.3 Q431.6 407.5 430.7 408.8 Q429.9 410.0 429.0 411.2 Q428.1 412.4 427.1 413.6 Q426.2 414.8 425.3 416.0 Q424.3 417.2 423.4 418.4 L422.5 419.6" fill="none" stroke="#4b6f5f" stroke-width="0.8" opacity="0.67" stroke-linecap="round"/><path d="M418.8 352.4 Q416.7 354.5 415.7 355.6 Q414.6 356.6 413.5 357.7 Q412.5 358.8 411.4 359.8 Q410.3 360.9 409.2 361.9 Q408.1 363.0 407.1 364.1 Q406.0 365.1 404.9 366.2 Q403.8 367.3 402.8 368.4 Q401.7 369.5 400.7 370.6 Q399.7 371.7 398.7 372.9 L397.7 374.0" fill="none" stroke="#4b6f5f" stroke-width="1.4" opacity="0.70" stroke-linecap="round"/><path d="M394.1 499.9 Q393.4 502.9 393.2 504.4 Q392.9 505.9 392.8 507.4 Q392.7 508.9 392.6 510.4 Q392.6 512.0 392.6 513.5 Q392.6 515.0 392.7 516.6 Q392.7 518.1 392.8 519.6 Q392.9 521.2 392.9 522.7 Q393.0 524.2 392.9 525.7 Q392.9 527.3 392.9 528.8 Q392.8 530.3 392.6 531.7 Q392.5 533.2 392.2 534.7 Q392.0 536.2 391.6 537.6 Q391.3 539.1 390.8 540.5 L390.4 542.0" fill="none" stroke="#4b6f5f" stroke-width="1.2" opacity="0.83" stroke-linecap="round"/><path d="M432.1 468.3 Q430.6 470.9 429.8 472.2 Q429.0 473.5 428.2 474.8 Q427.3 476.1 426.5 477.4 Q425.6 478.7 424.8 480.1 Q424.0 481.4 423.2 482.7 Q422.4 484.1 421.7 485.4 Q421.0 486.8 420.4 488.2 Q419.8 489.6 419.3 491.0 Q418.8 492.5 418.4 493.9 Q418.1 495.4 417.8 496.9 Q417.6 498.4 417.5 499.9 Q417.4 501.4 417.3 503.0 Q417.3 504.5 417.4 506.1 Q417.4 507.6 417.5 509.2 Q417.6 510.7 417.8 512.3 Q417.9 513.9 418.0 515.4 Q418.1 516.9 418.1 518.5 Q418.1 520.0 418.1 521.5 Q418.0 523.0 417.9 524.5 Q417.7 526.0 417.4 527.4 Q417.1 528.9 416.8 530.3 Q416.4 531.8 415.9 533.2 Q415.4 534.6 414.8 536.1 Q414.2 537.5 413.6 538.9 Q413.0 540.3 412.3 541.8 Q411.7 543.2 411.1 544.7 Q410.5 546.1 409.9 547.6 Q409.4 549.0 408.9 550.5 Q408.5 551.9 408.2 553.4 Q407.9 554.9 407.7 556.4 L407.5 557.9" fill="none" stroke="#4b6f5f" stroke-width="1.2" opacity="0.72" stroke-linecap="round"/><path d="M446.4 410.0 Q444.3 412.3 443.3 413.5 Q442.2 414.6 441.2 415.8 Q440.2 416.9 439.2 418.1 Q438.2 419.3 437.3 420.5 Q436.4 421.7 435.5 423.0 Q434.6 424.2 433.9 425.5 Q433.1 426.9 432.4 428.2 Q431.7 429.5 431.1 430.9 Q430.5 432.3 430.0 433.8 Q429.5 435.2 429.1 436.7 Q428.7 438.2 428.4 439.7 Q428.1 441.2 427.8 442.7 Q427.5 444.2 427.3 445.7 Q427.1 447.3 426.9 448.8 Q426.7 450.4 426.5 451.9 L426.3 453.4" fill="none" stroke="#4b6f5f" stroke-width="1.4" opacity="0.63" stroke-linecap="round"/><path d="M354.0 442.2 Q352.3 444.8 351.6 446.1 Q350.8 447.4 350.1 448.7 Q349.4 450.1 348.8 451.4 Q348.2 452.8 347.6 454.2 Q347.1 455.6 346.6 457.1 Q346.1 458.5 345.8 460.0 Q345.4 461.4 345.1 462.9 Q344.7 464.4 344.5 465.9 Q344.2 467.4 344.0 468.9 Q343.8 470.5 343.6 472.0 Q343.4 473.5 343.2 475.0 Q343.0 476.5 342.8 478.0 Q342.6 479.5 342.4 481.0 Q342.1 482.5 341.8 483.9 Q341.5 485.4 341.2 486.9 Q340.8 488.3 340.4 489.7 L339.9 491.2" fill="none" stroke="#4b6f5f" stroke-width="1.5" opacity="0.55" stroke-linecap="round"/><path d="M441.6 347.5 Q439.3 349.5 438.2 350.5 Q437.1 351.5 435.9 352.5 Q434.8 353.5 433.7 354.6 Q432.5 355.6 431.4 356.6 Q430.2 357.6 429.1 358.6 Q428.0 359.6 426.9 360.7 Q425.7 361.7 424.7 362.8 Q423.6 363.8 422.5 364.9 Q421.4 366.0 420.4 367.1 Q419.4 368.3 418.4 369.4 Q417.5 370.6 416.5 371.8 Q415.6 373.0 414.8 374.2 Q413.9 375.4 413.1 376.7 Q412.3 378.0 411.5 379.3 Q410.8 380.6 410.1 382.0 Q409.4 383.3 408.8 384.7 Q408.1 386.1 407.5 387.5 Q406.9 388.9 406.4 390.3 Q405.8 391.8 405.3 393.2 Q404.7 394.6 404.2 396.1 L403.7 397.5" fill="none" stroke="#4b6f5f" stroke-width="1.2" opacity="0.72" stroke-linecap="round"/><path d="M427.0 579.3 Q427.0 582.4 426.8 583.8 Q426.7 585.3 426.4 586.8 Q426.1 588.3 425.7 589.8 Q425.3 591.2 424.8 592.7 Q424.3 594.1 423.8 595.6 Q423.2 597.0 422.6 598.5 Q422.0 599.9 421.4 601.4 Q420.9 602.8 420.3 604.3 Q419.8 605.8 419.4 607.2 Q418.9 608.7 418.6 610.2 Q418.3 611.6 418.1 613.1 Q417.9 614.6 417.8 616.1 Q417.8 617.6 417.8 619.1 Q417.9 620.6 418.1 622.2 Q418.2 623.7 418.5 625.2 Q418.7 626.8 419.0 628.3 L419.3 629.8" fill="none" stroke="#4b6f5f" stroke-width="1.3" opacity="0.74" stroke-linecap="round"/><path d="M365.0 484.5 Q363.9 487.3 363.3 488.6 Q362.7 490.0 362.0 491.4 Q361.3 492.7 360.6 494.1 Q359.9 495.5 359.1 496.8 Q358.4 498.2 357.7 499.6 Q357.0 500.9 356.3 502.3 Q355.7 503.7 355.1 505.1 Q354.5 506.5 354.0 508.0 Q353.5 509.4 353.1 510.9 Q352.7 512.3 352.5 513.8 Q352.2 515.3 352.1 516.8 Q351.9 518.3 351.9 519.9 Q351.9 521.4 351.9 522.9 Q352.0 524.5 352.1 526.0 Q352.2 527.6 352.4 529.1 Q352.5 530.6 352.6 532.2 Q352.8 533.7 352.9 535.2 Q353.0 536.8 353.0 538.3 Q353.1 539.8 353.0 541.3 Q353.0 542.8 352.8 544.2 L352.7 545.7" fill="none" stroke="#4b6f5f" stroke-width="1.1" opacity="0.60" stroke-linecap="round"/><path d="M478.8 304.5 Q476.7 306.7 475.7 307.9 Q474.7 309.0 473.7 310.1 Q472.7 311.2 471.7 312.4 Q470.7 313.5 469.7 314.6 Q468.7 315.8 467.8 316.9 Q466.8 318.1 465.8 319.2 Q464.9 320.4 463.9 321.5 Q463.0 322.7 462.0 323.9 Q461.0 325.0 460.1 326.2 Q459.1 327.3 458.2 328.5 L457.2 329.6" fill="none" stroke="#4b6f5f" stroke-width="0.9" opacity="0.75" stroke-linecap="round"/><path d="M349.3 423.6 Q348.1 426.3 347.4 427.7 Q346.7 429.0 346.0 430.3 Q345.3 431.6 344.5 432.9 Q343.7 434.2 342.9 435.4 Q342.1 436.7 341.2 437.9 Q340.3 439.2 339.5 440.4 Q338.6 441.7 337.7 443.0 Q336.8 444.2 335.9 445.5 Q335.1 446.7 334.2 448.0 Q333.4 449.3 332.6 450.6 Q331.8 451.9 331.1 453.3 Q330.4 454.6 329.8 456.0 Q329.1 457.3 328.6 458.7 Q328.0 460.2 327.6 461.6 Q327.1 463.0 326.7 464.5 Q326.4 466.0 326.1 467.5 Q325.8 469.0 325.6 470.5 Q325.3 472.0 325.2 473.5 Q325.0 475.0 324.9 476.6 Q324.7 478.1 324.6 479.6 Q324.5 481.2 324.3 482.7 Q324.2 484.2 324.0 485.7 Q323.8 487.2 323.6 488.7 Q323.3 490.1 323.0 491.6 Q322.7 493.1 322.3 494.5 Q321.9 495.9 321.4 497.3 Q320.9 498.8 320.4 500.2 L319.8 501.6" fill="none" stroke="#4b6f5f" stroke-width="0.9" opacity="0.80" stroke-linecap="round"/><path d="M391.7 441.8 Q390.6 444.6 390.1 446.0 Q389.6 447.5 389.2 448.9 Q388.8 450.4 388.5 451.9 Q388.2 453.4 387.9 454.9 Q387.6 456.4 387.3 457.9 Q387.1 459.4 386.8 460.9 Q386.6 462.4 386.3 463.9 Q386.1 465.4 385.8 466.9 Q385.5 468.4 385.2 469.8 Q384.9 471.3 384.5 472.7 Q384.1 474.2 383.7 475.6 Q383.3 477.0 382.8 478.4 Q382.3 479.9 381.7 481.2 Q381.1 482.6 380.5 484.0 Q379.9 485.4 379.2 486.7 Q378.5 488.1 377.8 489.5 Q377.1 490.8 376.4 492.2 Q375.7 493.5 375.1 494.9 Q374.4 496.3 373.7 497.7 Q373.1 499.1 372.6 500.5 Q372.0 501.9 371.5 503.4 Q371.0 504.8 370.7 506.3 Q370.3 507.7 370.0 509.2 Q369.7 510.7 369.5 512.2 Q369.4 513.7 369.3 515.2 Q369.2 516.7 369.2 518.3 Q369.2 519.8 369.2 521.3 L369.3 522.9" fill="none" stroke="#4b6f5f" stroke-width="1.3" opacity="0.59" stroke-linecap="round"/><path d="M422.1 533.6 Q420.8 536.5 420.2 537.9 Q419.5 539.3 418.9 540.7 Q418.2 542.2 417.6 543.6 Q417.0 545.0 416.4 546.5 Q415.9 548.0 415.5 549.4 Q415.1 550.9 414.8 552.4 Q414.5 553.9 414.4 555.4 Q414.3 556.9 414.3 558.4 Q414.3 559.9 414.4 561.4 Q414.5 562.9 414.8 564.4 Q415.0 566.0 415.3 567.5 Q415.6 569.0 415.9 570.6 Q416.3 572.1 416.6 573.7 Q416.9 575.2 417.1 576.7 Q417.4 578.3 417.5 579.8 Q417.7 581.3 417.7 582.8 Q417.7 584.3 417.6 585.8 Q417.5 587.3 417.2 588.8 Q417.0 590.3 416.6 591.8 Q416.2 593.2 415.7 594.7 Q415.2 596.1 414.6 597.6 Q414.0 599.0 413.4 600.5 Q412.8 601.9 412.2 603.4 Q411.6 604.8 411.0 606.3 Q410.4 607.7 409.9 609.2 Q409.4 610.6 409.1 612.1 Q408.7 613.6 408.5 615.1 Q408.2 616.6 408.1 618.1 L408.0 619.5" fill="none" stroke="#4b6f5f" stroke-width="1.2" opacity="0.65" stroke-linecap="round"/><path d="M324.7 516.5 Q324.0 519.4 323.7 520.9 Q323.4 522.4 323.2 523.9 Q323.0 525.4 322.9 526.9 Q322.7 528.4 322.7 529.9 Q322.6 531.4 322.6 532.9 Q322.6 534.4 322.6 536.0 Q322.6 537.5 322.6 539.0 Q322.7 540.5 322.7 542.0 Q322.7 543.5 322.7 545.0 Q322.7 546.6 322.7 548.1 Q322.6 549.5 322.5 551.0 L322.4 552.5" fill="none" stroke="#4b6f5f" stroke-width="1.0" opacity="0.76" stroke-linecap="round"/><path d="M430.7 369.5 Q429.0 372.0 428.2 373.3 Q427.4 374.6 426.7 375.9 Q426.0 377.2 425.3 378.6 Q424.6 380.0 424.0 381.4 Q423.4 382.8 422.8 384.2 Q422.2 385.6 421.7 387.1 Q421.2 388.5 420.6 389.9 Q420.1 391.4 419.6 392.8 Q419.1 394.3 418.6 395.7 Q418.0 397.1 417.5 398.6 Q416.9 400.0 416.4 401.4 Q415.8 402.7 415.1 404.1 Q414.5 405.5 413.8 406.8 Q413.2 408.1 412.4 409.4 Q411.7 410.7 410.9 411.9 Q410.1 413.2 409.2 414.4 Q408.3 415.6 407.4 416.8 Q406.5 418.0 405.5 419.2 Q404.6 420.4 403.6 421.6 Q402.6 422.7 401.6 423.9 Q400.5 425.1 399.5 426.3 Q398.5 427.4 397.5 428.6 Q396.6 429.8 395.6 431.0 Q394.7 432.3 393.8 433.5 Q392.9 434.8 392.1 436.1 Q391.3 437.4 390.6 438.7 Q389.9 440.1 389.3 441.5 L388.7 442.8" fill="none" stroke="#4b6f5f" stroke-width="1.0" opacity="0.64" stroke-linecap="round"/><path d="M574.5 312.8 Q574.4 315.9 574.4 317.4 Q574.3 319.0 574.3 320.5 Q574.3 322.0 574.3 323.6 Q574.4 325.1 574.5 326.6 Q574.6 328.1 574.8 329.6 Q575.1 331.1 575.4 332.6 Q575.7 334.1 576.0 335.6 Q576.4 337.1 576.9 338.5 Q577.3 340.0 577.8 341.5 Q578.3 342.9 578.8 344.4 Q579.3 345.8 579.8 347.3 Q580.3 348.8 580.7 350.2 Q581.2 351.7 581.6 353.2 L581.9 354.6" fill="none" stroke="#4b6f5f" stroke-width="1.5" opacity="0.59" stroke-linecap="round"/><path d="M470.1 302.3 Q468.0 304.4 467.0 305.5 Q465.9 306.5 464.9 307.6 Q463.8 308.7 462.8 309.8 Q461.8 310.9 460.8 312.1 Q459.8 313.2 458.8 314.3 Q457.8 315.5 456.8 316.6 Q455.8 317.7 454.9 318.9 Q453.9 320.1 453.0 321.2 Q452.0 322.4 451.0 323.5 Q450.1 324.7 449.1 325.9 Q448.2 327.0 447.2 328.2 Q446.3 329.3 445.3 330.5 Q444.4 331.7 443.4 332.8 Q442.5 334.0 441.5 335.1 Q440.6 336.3 439.6 337.4 Q438.6 338.6 437.7 339.7 L436.7 340.8" fill="none" stroke="#4b6f5f" stroke-width="1.2" opacity="0.55" stroke-linecap="round"/><path d="M384.4 433.3 Q382.7 435.8 381.9 437.1 Q381.1 438.4 380.4 439.7 Q379.7 441.1 379.0 442.4 Q378.3 443.8 377.8 445.1 Q377.2 446.5 376.6 447.9 Q376.1 449.4 375.7 450.8 Q375.2 452.2 374.8 453.7 Q374.4 455.2 374.1 456.7 Q373.8 458.1 373.5 459.6 Q373.2 461.1 372.9 462.6 Q372.6 464.1 372.4 465.6 Q372.1 467.1 371.9 468.6 Q371.6 470.1 371.3 471.6 Q371.0 473.1 370.7 474.5 Q370.4 476.0 370.0 477.4 Q369.6 478.9 369.2 480.3 Q368.7 481.7 368.2 483.1 L367.7 484.5" fill="none" stroke="#4b6f5f" stroke-width="0.8" opacity="0.52" stroke-linecap="round"/><path d="M603.7 371.5 Q603.7 374.6 603.7 376.1 Q603.8 377.6 603.9 379.1 Q604.1 380.6 604.3 382.1 Q604.6 383.6 604.9 385.1 Q605.2 386.6 605.7 388.1 Q606.1 389.5 606.6 391.0 Q607.0 392.5 607.6 393.9 Q608.1 395.4 608.6 396.8 Q609.1 398.3 609.6 399.7 Q610.1 401.2 610.6 402.7 L611.0 404.1" fill="none" stroke="#4b6f5f" stroke-width="1.1" opacity="0.85" stroke-linecap="round"/><path d="M374.7 572.0 Q374.9 575.0 375.0 576.6 Q375.2 578.1 375.4 579.6 Q375.5 581.1 375.8 582.7 Q376.0 584.2 376.1 585.7 Q376.3 587.2 376.4 588.8 Q376.6 590.3 376.6 591.8 Q376.7 593.3 376.7 594.8 Q376.6 596.3 376.5 597.8 Q376.3 599.3 376.1 600.8 Q375.8 602.3 375.5 603.7 Q375.2 605.2 374.7 606.7 Q374.3 608.1 373.8 609.6 Q373.4 611.1 372.9 612.5 Q372.4 614.0 371.9 615.4 Q371.4 616.9 370.9 618.4 Q370.5 619.8 370.1 621.3 Q369.7 622.8 369.4 624.2 Q369.1 625.7 368.9 627.2 Q368.7 628.7 368.7 630.2 Q368.6 631.7 368.6 633.2 L368.6 634.7" fill="none" stroke="#4b6f5f" stroke-width="1.4" opacity="0.64" stroke-linecap="round"/><path d="M403.8 598.2 Q402.6 601.1 401.9 602.6 Q401.3 604.0 400.6 605.5 Q399.9 606.9 399.3 608.3 Q398.6 609.8 398.1 611.2 Q397.5 612.7 397.0 614.1 Q396.6 615.6 396.3 617.1 Q395.9 618.6 395.8 620.0 Q395.6 621.5 395.6 623.0 Q395.6 624.5 395.7 626.1 Q395.9 627.6 396.1 629.1 Q396.4 630.7 396.7 632.2 Q397.1 633.7 397.4 635.3 Q397.8 636.8 398.2 638.4 Q398.5 639.9 398.8 641.5 Q399.2 643.0 399.4 644.5 Q399.6 646.0 399.6 647.6 Q399.7 649.1 399.6 650.6 Q399.5 652.1 399.3 653.6 Q399.1 655.0 398.7 656.5 Q398.3 658.0 397.8 659.4 Q397.2 660.9 396.6 662.3 Q396.0 663.8 395.4 665.2 Q394.7 666.7 394.0 668.1 Q393.4 669.5 392.7 671.0 Q392.1 672.4 391.6 673.9 Q391.0 675.3 390.6 676.8 Q390.2 678.3 389.9 679.8 Q389.6 681.2 389.5 682.7 Q389.4 684.2 389.4 685.7 L389.5 687.2" fill="none" stroke="#4b6f5f" stroke-width="1.1" opacity="0.79" stroke-linecap="round"/><path d="M429.9 531.5 Q428.8 534.4 428.2 535.8 Q427.7 537.2 427.1 538.7 Q426.5 540.1 426.0 541.6 Q425.4 543.0 425.0 544.5 Q424.5 545.9 424.2 547.4 Q423.8 548.9 423.6 550.4 Q423.3 551.9 423.2 553.4 Q423.1 554.9 423.0 556.4 Q423.0 557.9 423.1 559.4 Q423.2 560.9 423.4 562.4 Q423.5 563.9 423.7 565.5 Q424.0 567.0 424.2 568.5 Q424.4 570.1 424.6 571.6 Q424.8 573.1 425.0 574.6 Q425.2 576.2 425.3 577.7 Q425.3 579.2 425.3 580.7 L425.3 582.2" fill="none" stroke="#4b6f5f" stroke-width="0.8" opacity="0.57" stroke-linecap="round"/><path d="M438.7 548.8 Q438.6 551.8 438.7 553.3 Q438.8 554.8 439.0 556.4 Q439.2 557.9 439.4 559.4 Q439.7 561.0 440.0 562.5 Q440.3 564.0 440.6 565.6 Q440.9 567.1 441.2 568.6 Q441.4 570.2 441.6 571.7 Q441.8 573.2 441.8 574.7 Q441.9 576.3 441.8 577.8 Q441.8 579.3 441.6 580.7 Q441.4 582.2 441.0 583.7 Q440.7 585.2 440.3 586.6 Q439.8 588.1 439.3 589.6 Q438.7 591.0 438.1 592.5 Q437.5 593.9 436.9 595.4 Q436.3 596.8 435.8 598.3 Q435.2 599.7 434.7 601.2 Q434.2 602.6 433.8 604.1 Q433.4 605.6 433.1 607.0 Q432.8 608.5 432.6 610.0 Q432.5 611.5 432.5 613.0 Q432.5 614.5 432.6 616.0 Q432.7 617.5 432.9 619.1 Q433.1 620.6 433.4 622.1 Q433.7 623.7 434.0 625.2 Q434.3 626.8 434.6 628.3 Q434.9 629.8 435.1 631.4 Q435.4 632.9 435.5 634.4 L435.7 635.9" fill="none" stroke="#4b6f5f" stroke-width="1.5" opacity="0.54" stroke-linecap="round"/><path d="M625.6 404.5 Q626.0 407.5 626.2 409.0 Q626.3 410.6 626.3 412.1 Q626.3 413.6 626.3 415.2 Q626.2 416.7 626.2 418.2 Q626.1 419.8 626.0 421.3 Q625.9 422.9 625.8 424.4 Q625.7 426.0 625.7 427.5 Q625.7 429.0 625.7 430.6 Q625.8 432.1 626.0 433.6 Q626.1 435.1 626.4 436.6 Q626.7 438.1 627.0 439.6 Q627.4 441.1 627.9 442.5 Q628.3 444.0 628.8 445.4 Q629.4 446.9 629.9 448.4 Q630.5 449.8 631.0 451.3 Q631.5 452.7 632.1 454.2 Q632.6 455.6 633.0 457.1 Q633.4 458.6 633.7 460.5 Q634.0 462.5 633.5 463.9 Q633.0 465.3 632.5 466.7 Q631.9 468.1 631.4 469.5 Q630.8 470.8 630.1 472.2 Q629.5 473.6 628.8 474.9 Q628.1 476.3 627.4 477.6 Q626.7 479.0 626.0 480.3 L625.3 481.7" fill="none" stroke="#4b6f5f" stroke-width="1.4" opacity="0.51" stroke-linecap="round"/><path d="M499.5 341.1 Q497.3 343.1 496.2 344.2 Q495.1 345.2 494.0 346.3 Q493.0 347.4 492.0 348.5 Q490.9 349.6 490.0 350.8 Q489.0 351.9 488.0 353.1 Q487.1 354.2 486.2 355.4 Q485.3 356.6 484.4 357.9 Q483.5 359.1 482.7 360.4 Q481.9 361.6 481.1 362.9 Q480.3 364.2 479.5 365.5 Q478.8 366.8 478.0 368.2 Q477.3 369.5 476.6 370.8 Q475.9 372.2 475.2 373.5 Q474.5 374.9 473.8 376.2 Q473.2 377.6 472.5 378.9 Q471.8 380.3 471.1 381.6 Q470.4 383.0 469.7 384.3 Q469.0 385.6 468.3 387.0 L467.6 388.3" fill="none" stroke="#4b6f5f" stroke-width="1.3" opacity="0.78" stroke-linecap="round"/><path d="M428.4 489.2 Q427.6 492.1 427.2 493.5 Q426.9 495.0 426.7 496.5 Q426.4 498.0 426.3 499.5 Q426.1 501.0 426.0 502.5 Q425.9 504.1 425.9 505.6 Q425.8 507.1 425.8 508.6 Q425.7 510.2 425.7 511.7 Q425.7 513.2 425.6 514.7 Q425.5 516.2 425.4 517.7 Q425.3 519.2 425.1 520.7 Q425.0 522.2 424.7 523.7 Q424.5 525.1 424.2 526.6 Q423.9 528.1 423.5 529.5 Q423.1 531.0 422.6 532.4 Q422.2 533.9 421.7 535.3 Q421.2 536.7 420.7 538.2 Q420.2 539.6 419.7 541.1 L419.2 542.5" fill="none" stroke="#4b6f5f" stroke-width="1.4" opacity="0.61" stroke-linecap="round"/><path d="M534.9 324.2 Q532.6 326.2 531.5 327.2 Q530.3 328.2 529.2 329.2 Q528.1 330.2 526.9 331.2 Q525.8 332.2 524.7 333.2 Q523.6 334.2 522.5 335.2 Q521.4 336.3 520.3 337.3 Q519.2 338.4 518.2 339.4 Q517.1 340.5 516.1 341.6 Q515.0 342.7 514.0 343.8 Q513.0 344.9 512.0 346.1 Q511.1 347.2 510.1 348.4 L509.2 349.6" fill="none" stroke="#4b6f5f" stroke-width="1.0" opacity="0.65" stroke-linecap="round"/><path d="M441.2 374.4 Q439.9 377.2 439.3 378.6 Q438.7 380.0 438.2 381.4 Q437.6 382.9 437.1 384.3 Q436.5 385.8 436.0 387.2 Q435.5 388.7 435.0 390.1 Q434.4 391.5 433.9 393.0 Q433.3 394.4 432.8 395.8 Q432.2 397.2 431.6 398.6 Q431.0 399.9 430.3 401.3 Q429.6 402.6 428.9 403.9 Q428.2 405.2 427.4 406.4 Q426.6 407.7 425.7 408.9 Q424.9 410.1 423.9 411.3 Q423.0 412.5 422.0 413.7 Q421.1 414.9 420.1 416.0 Q419.0 417.2 418.0 418.3 Q417.0 419.4 415.9 420.6 Q414.9 421.7 413.8 422.9 Q412.8 424.1 411.8 425.2 Q410.8 426.4 409.8 427.7 Q408.9 428.9 408.0 430.1 L407.1 431.4" fill="none" stroke="#4b6f5f" stroke-width="0.9" opacity="0.81" stroke-linecap="round"/><path d="M418.8 531.9 Q417.6 534.8 417.0 536.2 Q416.3 537.6 415.6 539.0 Q414.9 540.4 414.2 541.9 Q413.5 543.3 412.9 544.7 Q412.2 546.2 411.6 547.6 Q411.1 549.1 410.6 550.5 Q410.2 552.0 409.9 553.5 Q409.6 555.0 409.4 556.5 Q409.3 558.0 409.3 559.5 Q409.3 561.0 409.4 562.5 Q409.6 564.0 409.9 565.5 L410.1 567.1" fill="none" stroke="#4b6f5f" stroke-width="1.1" opacity="0.84" stroke-linecap="round"/><path d="M383.5 407.5 Q382.3 410.3 381.7 411.6 Q381.0 413.0 380.4 414.3 Q379.7 415.7 379.0 417.0 Q378.3 418.3 377.6 419.6 Q376.9 420.9 376.1 422.2 Q375.4 423.5 374.6 424.8 Q373.8 426.1 373.0 427.3 Q372.1 428.6 371.3 429.9 Q370.5 431.1 369.6 432.4 Q368.8 433.6 368.0 434.9 Q367.1 436.2 366.3 437.4 Q365.5 438.7 364.7 440.0 Q363.9 441.3 363.1 442.6 Q362.4 443.9 361.7 445.3 Q361.0 446.6 360.4 448.0 Q359.7 449.4 359.1 450.8 Q358.6 452.2 358.1 453.6 Q357.6 455.0 357.1 456.5 Q356.7 457.9 356.3 459.4 Q356.0 460.8 355.6 462.3 Q355.3 463.8 355.0 465.3 Q354.8 466.8 354.5 468.3 Q354.3 469.8 354.0 471.3 Q353.8 472.8 353.5 474.3 Q353.2 475.7 352.9 477.2 L352.7 478.7" fill="none" stroke="#4b6f5f" stroke-width="1.0" opacity="0.74" stroke-linecap="round"/><path d="M521.0 335.1 Q518.7 337.1 517.6 338.1 Q516.4 339.1 515.3 340.2 Q514.2 341.2 513.2 342.3 Q512.1 343.4 511.1 344.5 Q510.1 345.7 509.2 346.8 Q508.2 348.0 507.3 349.2 Q506.4 350.4 505.6 351.7 Q504.7 352.9 503.9 354.2 Q503.1 355.5 502.4 356.8 Q501.6 358.2 500.9 359.5 Q500.2 360.9 499.5 362.2 Q498.8 363.6 498.2 365.0 Q497.5 366.4 496.9 367.8 Q496.3 369.2 495.6 370.6 Q495.0 372.0 494.4 373.4 Q493.8 374.8 493.1 376.1 Q492.5 377.5 491.8 378.9 Q491.2 380.2 490.5 381.6 Q489.8 382.9 489.0 384.2 Q488.3 385.5 487.5 386.7 Q486.7 388.0 485.9 389.2 Q485.0 390.5 484.1 391.6 Q483.2 392.8 482.3 394.0 L481.3 395.2" fill="none" stroke="#4b6f5f" stroke-width="1.4" opacity="0.72" stroke-linecap="round"/><path d="M476.3 464.3 Q474.5 466.8 473.7 468.1 Q472.8 469.5 472.1 470.8 Q471.3 472.1 470.6 473.5 Q469.9 474.9 469.4 476.3 Q468.8 477.7 468.4 479.1 Q467.9 480.6 467.6 482.1 Q467.3 483.5 467.1 485.1 Q466.9 486.6 466.8 488.1 Q466.7 489.6 466.7 491.2 Q466.7 492.8 466.7 494.3 Q466.8 495.9 466.8 497.4 L466.9 499.0" fill="none" stroke="#4b6f5f" stroke-width="1.3" opacity="0.66" stroke-linecap="round"/><path d="M438.8 344.4 Q436.8 346.6 435.7 347.6 Q434.6 348.7 433.5 349.7 Q432.5 350.8 431.4 351.8 Q430.3 352.8 429.1 353.9 Q428.0 354.9 426.9 355.9 Q425.8 356.9 424.6 357.9 Q423.5 359.0 422.4 360.0 Q421.3 361.0 420.2 362.1 Q419.1 363.1 418.0 364.2 Q416.9 365.3 415.8 366.3 Q414.8 367.4 413.7 368.6 Q412.7 369.7 411.8 370.8 Q410.8 372.0 409.8 373.2 Q408.9 374.4 408.0 375.6 Q407.2 376.8 406.4 378.1 Q405.5 379.4 404.8 380.7 Q404.0 382.0 403.3 383.3 Q402.6 384.7 401.9 386.0 Q401.3 387.4 400.7 388.8 Q400.1 390.2 399.5 391.6 Q398.9 393.0 398.4 394.5 Q397.8 395.9 397.3 397.3 Q396.7 398.7 396.2 400.2 L395.7 401.6" fill="none" stroke="#4b6f5f" stroke-width="1.2" opacity="0.51" stroke-linecap="round"/><path d="M614.2 315.2 Q614.4 318.2 614.7 319.7 Q615.0 321.2 615.5 322.7 Q616.0 324.1 616.6 325.6 Q617.2 327.0 617.9 328.4 Q618.7 329.8 619.5 331.3 Q620.3 332.7 621.0 334.1 Q621.8 335.5 622.5 336.9 Q623.3 338.4 623.9 339.8 Q624.5 341.2 624.9 342.7 Q625.3 344.2 625.6 345.7 Q625.8 347.2 625.9 348.7 Q626.0 350.2 625.9 351.8 Q625.8 353.3 625.6 354.9 Q625.4 356.5 625.0 358.0 Q624.7 359.6 624.4 361.2 Q624.0 362.8 623.7 364.4 Q623.4 365.9 623.2 367.5 Q623.0 369.1 622.9 370.6 Q622.8 372.2 622.9 373.7 L623.0 375.2" fill="none" stroke="#4b6f5f" stroke-width="1.3" opacity="0.61" stroke-linecap="round"/><path d="M554.8 616.4 Q553.6 619.3 553.0 620.7 Q552.4 622.1 551.8 623.6 Q551.1 625.0 550.6 626.5 Q550.0 627.9 549.5 629.4 Q549.0 630.9 548.6 632.3 Q548.3 633.8 548.0 635.3 Q547.8 636.8 547.7 638.3 Q547.7 639.8 547.7 641.3 Q547.8 642.8 548.0 644.3 Q548.2 645.8 548.4 647.4 Q548.7 648.9 549.0 650.5 Q549.4 652.0 549.7 653.5 Q550.0 655.1 550.3 656.6 Q550.6 658.1 550.9 659.7 Q551.1 661.2 551.2 662.7 Q551.3 664.2 551.3 665.8 Q551.3 667.3 551.1 668.7 Q550.9 670.2 550.6 671.7 L550.3 673.2" fill="none" stroke="#4b6f5f" stroke-width="0.9" opacity="0.85" stroke-linecap="round"/><path d="M472.2 344.4 Q469.8 346.3 468.7 347.3 Q467.5 348.3 466.4 349.3 Q465.2 350.3 464.1 351.4 Q463.0 352.4 461.9 353.5 Q460.8 354.5 459.8 355.6 Q458.7 356.7 457.7 357.8 Q456.7 358.9 455.7 360.1 Q454.7 361.3 453.8 362.5 Q452.9 363.7 452.0 364.9 Q451.2 366.1 450.4 367.4 Q449.6 368.7 448.8 370.0 Q448.0 371.3 447.3 372.6 Q446.6 374.0 445.9 375.4 Q445.3 376.7 444.6 378.1 Q444.0 379.5 443.4 380.9 Q442.8 382.3 442.2 383.7 Q441.6 385.1 441.0 386.5 Q440.4 387.9 439.8 389.3 Q439.3 390.7 438.7 392.1 Q438.1 393.5 437.4 394.9 Q436.8 396.2 436.1 397.6 Q435.5 398.9 434.8 400.2 Q434.0 401.5 433.3 402.8 Q432.5 404.1 431.7 405.4 Q430.9 406.6 430.1 407.8 Q429.2 409.1 428.3 410.3 Q427.4 411.5 426.4 412.7 Q425.5 413.8 424.5 415.0 L423.6 416.2" fill="none" stroke="#4b6f5f" stroke-width="1.5" opacity="0.79" stroke-linecap="round"/><path d="M552.5 317.5 Q540.0 327.5 531.2 336.2 Q522.5 345.0 517.5 353.8 Q512.5 362.5 508.8 373.8 Q505.0 385.0 500.0 397.5 Q495.0 410.0 491.9 420.0 Q488.8 430.0 488.1 441.2 Q487.5 452.5 491.8 462.2 Q496.0 472.0 499.5 490.5 Q503.0 509.0 504.9 523.4 L506.7 537.8" fill="none" stroke="#45695a" stroke-width="1.7" stroke-linecap="round" opacity="0.85"/><path d="M515.0 360.0 Q524.0 355.0 528.2 357.5 L532.5 360.0" fill="none" stroke="#45695a" stroke-width="1.7" stroke-linecap="round" opacity="0.85"/><path d="M520.0 347.5 Q530.0 345.0 535.0 348.8 L540.0 352.5" fill="none" stroke="#45695a" stroke-width="1.7" stroke-linecap="round" opacity="0.85"/><path d="M498.8 397.5 Q512.0 422.0 518.5 433.0 Q525.0 444.0 526.5 449.0 L528.0 454.0" fill="none" stroke="#45695a" stroke-width="1.7" stroke-linecap="round" opacity="0.85"/><path d="M507.5 397.5 Q522.0 420.0 528.5 430.0 L535.0 440.0" fill="none" stroke="#45695a" stroke-width="1.7" stroke-linecap="round" opacity="0.85"/><path d="M535.0 440.0 Q553.8 421.8 566.9 417.9 Q580.0 414.0 595.9 412.4 Q611.8 410.9 622.7 412.7 L633.6 414.5" fill="none" stroke="#45695a" stroke-width="1.7" stroke-linecap="round" opacity="0.85"/><path d="M540.0 452.0 Q553.8 440.0 566.9 435.5 Q580.0 431.0 597.7 428.2 Q615.4 425.4 625.4 427.2 L635.4 429.0" fill="none" stroke="#45695a" stroke-width="1.7" stroke-linecap="round" opacity="0.85"/><path d="M517.5 461.6 Q525.0 480.0 528.5 490.8 L532.0 501.5" fill="none" stroke="#45695a" stroke-width="1.7" stroke-linecap="round" opacity="0.85"/><path d="M532.0 454.4 Q538.0 475.0 540.5 486.5 L543.0 498.0" fill="none" stroke="#45695a" stroke-width="1.7" stroke-linecap="round" opacity="0.85"/><path d="M566.0 474.0 Q560.0 490.0 561.0 499.0 Q562.0 508.0 566.0 513.5 Q570.0 519.0 579.0 521.0 L588.0 523.0" fill="none" stroke="#45695a" stroke-width="1.7" stroke-linecap="round" opacity="0.85"/><path d="M572.0 478.0 Q583.0 490.0 584.0 497.5 L585.0 505.0" fill="none" stroke="#45695a" stroke-width="1.7" stroke-linecap="round" opacity="0.85"/><path d="M553.8 530.5 Q580.0 538.0 594.0 539.7 L608.0 541.4" fill="none" stroke="#45695a" stroke-width="1.7" stroke-linecap="round" opacity="0.85"/><path d="M565.0 305.0 Q575.0 355.0 577.5 375.0 Q580.0 395.0 582.5 398.8 L585.0 402.5" fill="none" stroke="#45695a" stroke-width="1.7" stroke-linecap="round" opacity="0.85"/><path d="M521.0 239.0 Q522.0 260.0 522.2 270.0 L522.5 280.0" fill="none" stroke="#45695a" stroke-width="1.7" stroke-linecap="round" opacity="0.85"/><path d="M545.0 254.3 Q540.0 275.0 544.0 287.5 Q548.0 300.0 550.2 308.8 L552.5 317.5" fill="none" stroke="#45695a" stroke-width="1.7" stroke-linecap="round" opacity="0.85"/><path d="M610.0 470.0 Q625.0 480.0 628.5 490.0 L632.0 500.0" fill="none" stroke="#45695a" stroke-width="1.7" stroke-linecap="round" opacity="0.85"/></g>
<g fill="none" stroke-linecap="round">
 <!-- back half of green ellipse -->
 <path d="M331 447 A215.5 9.5 0 0 1 396 439.5" stroke="#6c6670" stroke-width="1.1"/><path d="M640 438.5 A215.5 9.5 0 0 1 762 447" stroke="#6c6670" stroke-width="1.1"/><path d="M543 582 L546.5 657" stroke="#6c6670" stroke-width="1.1"/>
 <!-- outer front box + diagonals -->
 <path d="M261 241L648.6 248.4L639 717L265.4 717Z M261 241L338.7 291.2 M648.6 248.4L619 290.5 M609.8 632.4L639 717 M340.7 631.5L265.4 717" stroke="#dedee6" stroke-width="1.3"/>
 <!-- trackball circle -->
 <circle cx="545.5" cy="442" r="202" stroke="#626070" stroke-width="1.1" opacity="0.85"/>
 <!-- front half green -->
 <path d="M331 447 A215.5 9.5 0 0 0 762 447" stroke="#a6e6a6" stroke-width="1.4"/>
 <!-- red thin ellipse -->
 <path d="M551.5 229.5 Q560 440 547 658" stroke="#d89a9a" stroke-width="1.3"/>
</g>
</g>
    <rect x="0" y="709" width="958" height="91" fill="rgba(128,16,16,0.5)"/><rect x="954" y="89" width="4" height="711" fill="rgba(0,0,0,0.08)"/><rect x="0" y="796" width="958" height="2.5" fill="#a86a88"/><rect x="0" y="798.5" width="958" height="2" fill="#f0f0f0"/>
  </svg>
  <div class="info" style="left:106px;top:624px;font-size:11.3px">FOV: 60
FPS:
BO_RENDERING</div><div class="info" style="left:144px;top:638px;font-size:11.3px">100.0</div>
  <div class="info" style="left:546px;top:624px;font-size:12.4px">Current Mesh: war-golem-unsupported
Vertices: 709,822
Faces: 1,419,680
Selection: v: 0 f: 0</div><div class="info" style="left:661px;top:638px;font-size:12.4px">(2,155,456)</div><div class="info" style="left:659px;top:652px;font-size:12.4px">(4,301,265)</div>
</div>

<!-- PANEL -->
<div id="panel">
  <div class="abs" style="left:0;top:0;width:457px;height:31px;background:#fff"></div>
  <div class="abs" style="left:8px;top:8px;font-size:12.5px;color:#a0a0a8">Align Tool</div>
  <div class="abs" style="left:438px;top:7px;width:18px;height:18px;background:#e5e5e5"><svg class="abs" style="left:5px;top:5px" width="8" height="8"><path d="M1 1L7 7M7 1L1 7" stroke="#f4f4f4" stroke-width="1"/></svg></div>
  <!-- table -->
  <div class="abs" style="left:10px;top:41px;width:437px;height:305px;background:#fff;border:1px solid #828790"></div>
  
  <!-- table header -->
  <div class="cell" style="left:16px;top:48px">1</div>
  <div class="cell" style="left:57px;top:48px">2</div>
  <div class="cell" style="left:99px;top:48px">3</div>
  <div class="cell" style="left:139px;top:48px">4</div>
  <div class="abs" style="left:52px;top:42px;width:1px;height:25px;background:#e5e5e5"></div>
  <div class="abs" style="left:93px;top:42px;width:1px;height:25px;background:#e5e5e5"></div>
  <div class="abs" style="left:135px;top:42px;width:1px;height:25px;background:#e5e5e5"></div>
  <!-- selected row -->
  <div class="abs" style="left:136px;top:88px;width:310px;height:19px;background:#c0c0c0"></div>
  <div class="cell" style="left:34px;top:71px">0</div>
  <div class="cell" style="left:34px;top:91px">1</div>
  <div class="cell" style="left:34px;top:111px">2</div>
  <div class="cell" style="left:34px;top:132px">3</div>
  <div class="cell" style="left:139px;top:71px">war-golem-supported.stl</div>
  <div class="cell" style="left:139px;top:91px">war-golem-unsupported.stl</div>
  <div class="cell" style="left:139px;top:111px">golova_konya.stl</div>
  <div class="cell" style="left:139px;top:132px">42.stl</div>
  <svg class="abs" style="left:56px;top:69px" width="16" height="16"><rect x="0.5" y="0.5" width="15" height="15" fill="#e6e6e6" stroke="#aaa"/><path d="M2 10 Q8 11 14 7" fill="none" stroke="#555" stroke-width="1"/><path d="M3 10l-1 1M5 10.5l-0.5 1M7 10.8v1" stroke="#777" stroke-width="0.6"/></svg>
<svg class="abs" style="left:56px;top:89px" width="16" height="16"><rect x="0.5" y="0.5" width="15" height="15" fill="#e6e6e6" stroke="#aaa"/><path d="M2 10 Q8 11 14 7" fill="none" stroke="#555" stroke-width="1"/><path d="M3 10l-1 1M5 10.5l-0.5 1M7 10.8v1" stroke="#777" stroke-width="0.6"/></svg>
<svg class="abs" style="left:56px;top:109px" width="16" height="16"><rect x="0.5" y="0.5" width="15" height="15" fill="#e6e6e6" stroke="#aaa"/><ellipse cx="8" cy="8" rx="6" ry="3.2" fill="#fff" stroke="#777" stroke-width="0.6"/><circle cx="8" cy="8" r="3" fill="#20d020"/><circle cx="7.3" cy="7.5" r="1.2" fill="#000"/></svg>
<svg class="abs" style="left:56px;top:129px" width="16" height="16"><rect x="0.5" y="0.5" width="15" height="15" fill="#e6e6e6" stroke="#aaa"/><ellipse cx="8" cy="8" rx="6" ry="3.2" fill="#fff" stroke="#777" stroke-width="0.6"/><circle cx="8" cy="8" r="3" fill="#20d020"/><circle cx="7.3" cy="7.5" r="1.2" fill="#000"/></svg>

  <!-- buttons left -->
  <div class="btn" style="left:11px;top:353px;width:214px;height:23px;line-height:21px">Glue Here Mesh</div>
  <div class="btn" style="left:11px;top:383px;width:214px;height:24px;line-height:22px">Glue Here Visible Meshes</div>
  <div class="sep" style="left:10px;top:413px;width:216px"></div>
  <div class="btn" style="left:11px;top:422px;width:214px;height:23px;line-height:21px">Manual Rough Gluing</div>
  <div class="btn" style="left:11px;top:452px;width:214px;height:23px;line-height:21px">Point Based Gluing</div>
  <div class="sep" style="left:10px;top:482px;width:216px"></div>
  <div class="btn dis" style="left:11px;top:491px;width:214px;height:23px;line-height:21px">Set as Base Mesh</div>
  <div class="btn" style="left:11px;top:521px;width:214px;height:23px;line-height:21px">Hide/Reveal Unglued Mesh</div>
  <div class="sep" style="left:10px;top:551px;width:216px"></div>
  <div class="btn" style="left:11px;top:560px;width:214px;height:23px;line-height:21px;font-size:16.3px;font-weight:bold">Process</div>
  <!-- buttons right -->
  <div class="btn" style="left:233px;top:357px;width:213px;height:23px;line-height:21px;font-size:13.3px">Edit Defaults ICP Parameters...</div>
  <div class="btn" style="left:233px;top:391px;width:106px;height:22px;line-height:20px;font-size:9.1px;font-style:italic">Set ICP params for mm</div>
  <div class="btn" style="left:341px;top:391px;width:105px;height:22px;line-height:20px;font-size:9.1px;font-style:italic">Set ICP params for m</div>
  <div class="sep" style="left:232px;top:423px;width:215px"></div>
  <div class="btn" style="left:233px;top:436px;width:213px;height:23px;line-height:23px;font-size:13.1px">Arc Creation Parameters</div>
  <div class="sep" style="left:232px;top:470px;width:215px"></div>
  <div class="btn" style="left:233px;top:483px;width:213px;height:23px;line-height:21px">Show Bad Arc</div>
  <div class="btn dis" style="left:233px;top:517px;width:213px;height:23px;line-height:21px">ICP Params Current Arc</div>
  <div class="btn dis" style="left:233px;top:552px;width:213px;height:23px;line-height:21px">Recalc Current Arc</div>
  <!-- log box -->
  <div class="abs" style="left:10px;top:590px;width:437px;height:140px;background:#fff;border:1px solid #828790"></div>

</div>


<!-- right strip -->
<div class="abs" style="left:1415px;top:82px;width:5px;height:718px;background:#e9e9e9;border-left:1px solid #d8d8d8"></div>
<div class="abs" style="left:1416px;top:90px;width:4px;height:18px;background:#cfcfcf"></div>
<div class="abs" style="left:1416px;top:123px;width:4px;height:21px;background:#b4d2ee;border-top:1px solid #8fb8e0;border-bottom:1px solid #8fb8e0"><div class="abs" style="left:0;top:6px;width:3px;height:9px;background:#3a4a3a;border-radius:0 4px 4px 0"></div></div>
<div class="abs" style="left:1416px;top:150px;width:4px;height:23px;background:#b4d2ee;border-top:1px solid #8fb8e0;border-bottom:1px solid #8fb8e0"><div class="abs" style="left:0;top:7px;width:3px;height:9px;background:#3a4a3a;border-radius:0 4px 4px 0"></div></div>
<div class="abs" style="left:1416px;top:228px;width:4px;height:21px;background:#b4d2ee;border-top:1px solid #8fb8e0;border-bottom:1px solid #8fb8e0"><div class="abs" style="left:0;top:6px;width:3px;height:9px;background:#3a4a3a;border-radius:0 4px 4px 0"></div></div>
<div class="abs" style="left:1416px;top:254px;width:4px;height:22px;background:#b4d2ee;border-top:1px solid #8fb8e0;border-bottom:1px solid #8fb8e0"><div class="abs" style="left:0;top:7px;width:3px;height:9px;background:#3a4a3a;border-radius:0 4px 4px 0"></div></div>
<div class="abs" style="left:1416px;top:368px;width:4px;height:1px;background:#777"></div>
<div class="abs" style="left:1416px;top:381px;width:2px;height:10px;background:#2a5a8a"></div>
<div class="abs" style="left:1416px;top:617px;width:1.5px;height:14px;background:#555"></div>
<div class="abs" style="left:1416px;top:666px;width:4px;height:1px;background:#888"></div>

<!-- RED RECT -->
<div class="abs" style="left:224px;top:50px;width:945px;height:38px;border:2px solid #f00"></div>

</body></html>
